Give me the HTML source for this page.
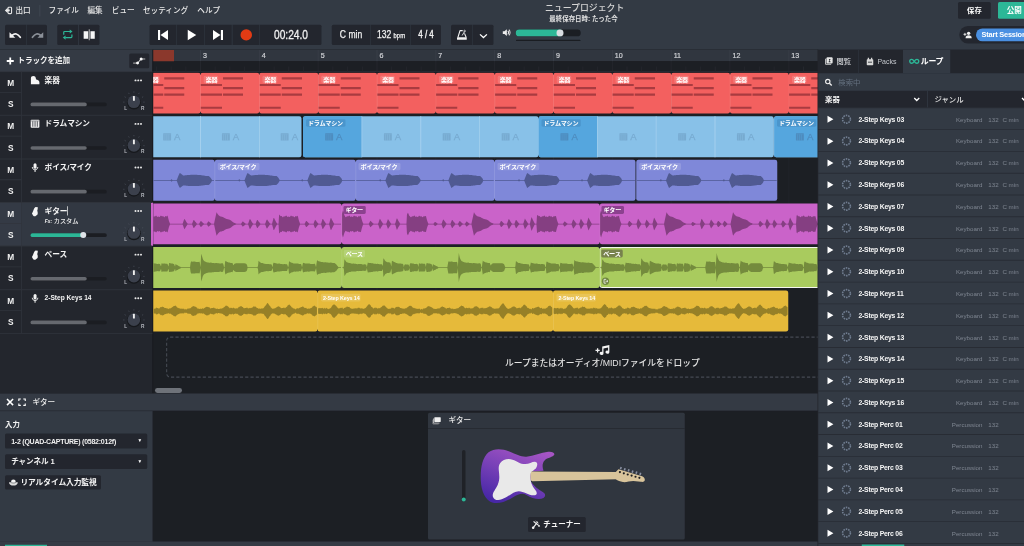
<!DOCTYPE html>
<html lang="ja"><head><meta charset="utf-8"><title>ニュープロジェクト</title>
<style>
html,body{margin:0;padding:0;}
body{width:1024px;height:546px;overflow:hidden;background:#1c1f24;position:relative;font-family:"Liberation Sans","Noto Sans CJK JP",sans-serif;color:#fff;}
#outer{position:absolute;left:0;top:0;width:4096px;height:2184px;overflow:hidden;transform:scale(0.25);transform-origin:0 0;}
#app{position:absolute;left:0;top:0;width:4096px;height:2184px;overflow:hidden;}
#app div,#txt div{position:absolute;box-sizing:border-box;}
#app svg{position:absolute;overflow:visible;}
#txt{position:absolute;left:0;top:0;width:1024px;height:546px;overflow:hidden;will-change:transform;}
#ttl{left:153.2px;top:72.4px;width:664.8px;height:320.6px;overflow:hidden;}
.t{height:20px;line-height:20px;white-space:nowrap;}
.b{font-weight:bold;}
</style></head>
<body><div id="outer"><div id="app">
<div style="left:0px;top:0px;width:4096px;height:198px;background:#333a44;"></div>
<svg style="left:18.8px;top:25.6px" width="30" height="31.2" viewBox="0 0 15 15.600"><rect x="6.600" y="1.400" width="7" height="12.800" rx="1.600" fill="none" stroke="#e4e4e4" stroke-width="2.200"/><path d="M0.200 7.800L5.800 2.600v3.400h4.200v3.600H5.800v3.400z" fill="#ececec"/></svg>
<div style="left:158px;top:20px;width:3.2px;height:46px;background:#434a55;"></div>
<div style="left:3832.4px;top:8px;width:130.4px;height:66.8px;background:#23262e;border-radius:6px;"></div>
<div style="left:3992px;top:8px;width:120px;height:66.8px;background:#2cb797;border-radius:6px;"></div>
<div style="left:3836.8px;top:104px;width:320px;height:70.4px;background:#23262e;border-radius:36px;"></div>
<div style="left:3904px;top:113.6px;width:280px;height:51.2px;background:#4a90e2;border-radius:25.6px;"></div>
<svg style="left:3853.6px;top:125.2px" width="32.8" height="28" viewBox="0 0 20 17"><circle cx="12.5" cy="5" r="4" fill="#f0f0f0"/><path d="M5 17c0-5 3-7 7.5-7s7.5 2 7.5 7z" fill="#f0f0f0"/><path d="M0 7.5h7M3.5 4v7" stroke="#f0f0f0" stroke-width="2.2"/></svg>
<div style="left:20px;top:99.2px;width:84px;height:80.8px;background:#23262e;border-radius:6px 0px 0px 6px;"></div>
<div style="left:106.4px;top:99.2px;width:81.6px;height:80.8px;background:#23262e;border-radius:0px 6px 6px 0px;"></div>
<div style="left:228.8px;top:99.2px;width:83.6px;height:80.8px;background:#23262e;border-radius:6px 0px 0px 6px;"></div>
<div style="left:315.2px;top:99.2px;width:82.8px;height:80.8px;background:#23262e;border-radius:0px 6px 6px 0px;"></div>
<div style="left:598px;top:99.2px;width:107.6px;height:80.8px;background:#23262e;border-radius:6px 0px 0px 6px;"></div>
<div style="left:708px;top:99.2px;width:108.8px;height:80.8px;background:#23262e;border-radius:0px 0px 0px 0px;"></div>
<div style="left:819.2px;top:99.2px;width:108px;height:80.8px;background:#23262e;border-radius:0px 0px 0px 0px;"></div>
<div style="left:929.6px;top:99.2px;width:108.4px;height:80.8px;background:#23262e;border-radius:0px 0px 0px 0px;"></div>
<div style="left:1040.4px;top:99.2px;width:245.6px;height:80.8px;background:#23262e;border-radius:0px 6px 6px 0px;"></div>
<div style="left:1327.2px;top:99.2px;width:152.8px;height:80.8px;background:#23262e;border-radius:6px 0px 0px 6px;"></div>
<div style="left:1482.4px;top:99.2px;width:158.4px;height:80.8px;background:#23262e;border-radius:0px 0px 0px 0px;"></div>
<div style="left:1643.2px;top:99.2px;width:120.8px;height:80.8px;background:#23262e;border-radius:0px 6px 6px 0px;"></div>
<div style="left:1804px;top:99.2px;width:85.6px;height:80.8px;background:#23262e;border-radius:6px 0px 0px 6px;"></div>
<div style="left:1892px;top:99.2px;width:82.4px;height:80.8px;background:#23262e;border-radius:0px 6px 6px 0px;"></div>
<svg style="left:38.4px;top:128.4px" width="46" height="24.8" viewBox="0 0 23 12.400"><path d="M0 0.400V11.600H11.600z" fill="#f2f2f2"/><path d="M5.500 6.500Q13.500 -0.500 21.600 10.600" fill="none" stroke="#f2f2f2" stroke-width="3.500" stroke-linecap="round"/></svg>
<svg style="left:127.2px;top:128.4px" width="46" height="24.8" viewBox="0 0 23 12.400"><g transform="translate(23,0) scale(-1,1)"><path d="M0 0.400V11.600H11.600z" fill="#8b9098"/><path d="M5.500 6.500Q13.500 -0.500 21.600 10.600" fill="none" stroke="#8b9098" stroke-width="3.500" stroke-linecap="round"/></g></svg>
<svg style="left:250.8px;top:118.4px" width="40" height="41" viewBox="0 0 20 20.500"><path d="M2 10.400V5.500Q2 4 3.500 4H14.500" fill="none" stroke="#2cb797" stroke-width="2.400"/><path d="M14 0v8.100L19.500 4z" fill="#2cb797"/><path d="M18.300 10.200v4.500q0 1.500-1.500 1.500H5" fill="none" stroke="#2cb797" stroke-width="2.400"/><path d="M5.600 12.200v8.100L0 16.200z" fill="#2cb797"/></svg>
<svg style="left:334.4px;top:116.8px" width="45.6" height="45.6" viewBox="0 0 23 23"><rect x="0.300" y="4" width="9.200" height="15.200" fill="#f6f6f6"/><rect x="14.100" y="4" width="8.600" height="15.200" fill="#f6f6f6"/><rect x="10.600" y="0.200" width="1.800" height="22" fill="#cfcfcf"/></svg>
<svg style="left:630.4px;top:117.6px" width="44" height="44" viewBox="0 0 22 22"><rect x="1" y="1" width="4.200" height="20" fill="#fff"/><path d="M21 1v20L6 11z" fill="#fff"/></svg>
<svg style="left:750px;top:117.6px" width="36" height="44" viewBox="0 0 18 22"><path d="M0.500 0.500v21L17.500 11z" fill="#fff"/></svg>
<svg style="left:850.4px;top:117.6px" width="44" height="44" viewBox="0 0 22 22"><rect x="16.800" y="1" width="4.200" height="20" fill="#fff"/><path d="M1 1v20l15-10z" fill="#fff"/></svg>
<div style="left:962px;top:116.8px;width:45.6px;height:45.6px;background:#e23b14;border-radius:50%;"></div>
<svg style="left:1828.4px;top:119.2px" width="40" height="42" viewBox="0 0 20 21"><path d="M1.800 15.500L6 1.800h5.400M15 7.200l3.400 8.300" fill="none" stroke="#f2f2f2" stroke-width="2.200" stroke-linejoin="round"/><path d="M10.300 11.500L15 3.600" stroke="#f2f2f2" stroke-width="1.800"/><circle cx="15.200" cy="2.600" r="1.700" fill="none" stroke="#f2f2f2" stroke-width="1.300"/><rect x="0" y="15" width="19.500" height="5" rx="1" fill="#f2f2f2"/></svg>
<svg style="left:1916.8px;top:133.6px" width="33.6" height="20.8" viewBox="0 0 17 10"><path d="M1.500 1.500l7 6.500 7-6.500" fill="none" stroke="#fff" stroke-width="2.600"/></svg>
<svg style="left:2009.6px;top:115.2px" width="32.8" height="30.4" viewBox="0 0 16 15"><path d="M0.500 4.800h3.300L8.500 0.800v13.400L3.800 10.200H0.500z" fill="#eee"/><path d="M10.300 4c1.800 1.800 1.800 5.200 0 7" stroke="#eee" stroke-width="2" fill="none"/><path d="M12.600 1.800c3 3 3 8.400 0 11.400" stroke="#ddd" stroke-width="2" fill="none"/></svg>
<div style="left:2062.8px;top:118px;width:260px;height:26.8px;background:#1b1e23;border-radius:13.6px;"></div>
<div style="left:2062.8px;top:118px;width:188px;height:26.8px;background:#2cb797;border-radius:13.6px;"></div>
<div style="left:2226.4px;top:117.6px;width:27.6px;height:27.6px;background:#d9dde2;border-radius:50%;"></div>
<div style="left:2064px;top:158.8px;width:258.4px;height:5.2px;background:#1a1d22;border-radius:2.4px;"></div>
<div style="left:0px;top:198px;width:610.4px;height:91.2px;background:#343a44;"></div>
<div style="left:0px;top:196.8px;width:4096px;height:3.2px;background:#2b3039;"></div>
<svg style="left:27.2px;top:229.6px" width="28" height="28" viewBox="0 0 13 13"><path d="M6.500 0v13M0 6.500h13" stroke="#fff" stroke-width="3.300"/></svg>
<div style="left:517.2px;top:213.6px;width:80px;height:59.6px;background:#23262e;border-radius:6px;"></div>
<svg style="left:531.2px;top:225.6px" width="52" height="35.2" viewBox="0 0 26 17.600"><path d="M0.800 13.200H9.600M16.800 5H25" fill="none" stroke="#c4c4c4" stroke-width="1.800"/><path d="M9.600 13.200L16.800 5" stroke="#f4f4f4" stroke-width="2"/><circle cx="9.600" cy="13.200" r="3" fill="#fafafa"/><circle cx="16.800" cy="5" r="3" fill="#fafafa"/></svg>
<div style="left:611.2px;top:199.6px;width:2661.6px;height:45.2px;background:#30363f;"></div>
<div style="left:611.2px;top:244.8px;width:2661.6px;height:44.8px;background:#1c1f24;"></div>
<div style="left:612px;top:200px;width:84px;height:44.8px;background:#8b382c;"></div>
<div style="left:800.4px;top:200px;width:3.2px;height:44.8px;background:#383e48;"></div>
<div style="left:1035.72px;top:200px;width:3.2px;height:44.8px;background:#383e48;"></div>
<div style="left:1271.04px;top:200px;width:3.2px;height:44.8px;background:#383e48;"></div>
<div style="left:1506.36px;top:200px;width:3.2px;height:44.8px;background:#383e48;"></div>
<div style="left:1741.68px;top:200px;width:3.2px;height:44.8px;background:#383e48;"></div>
<div style="left:1977px;top:200px;width:3.2px;height:44.8px;background:#383e48;"></div>
<div style="left:2212.32px;top:200px;width:3.2px;height:44.8px;background:#383e48;"></div>
<div style="left:2447.64px;top:200px;width:3.2px;height:44.8px;background:#383e48;"></div>
<div style="left:2682.96px;top:200px;width:3.2px;height:44.8px;background:#383e48;"></div>
<div style="left:2918.28px;top:200px;width:3.2px;height:44.8px;background:#383e48;"></div>
<div style="left:3153.6px;top:200px;width:3.2px;height:44.8px;background:#383e48;"></div>
<div style="left:611.2px;top:284.8px;width:2661.6px;height:3.6px;background:#292e38;"></div>
<div style="left:623.92px;top:266px;width:3.2px;height:23.6px;background:#24272d;"></div>
<div style="left:682.76px;top:266px;width:3.2px;height:23.6px;background:#24272d;"></div>
<div style="left:741.56px;top:266px;width:3.2px;height:23.6px;background:#24272d;"></div>
<div style="left:800.4px;top:244.8px;width:3.2px;height:44.8px;background:#24272d;"></div>
<div style="left:859.24px;top:266px;width:3.2px;height:23.6px;background:#24272d;"></div>
<div style="left:918.04px;top:266px;width:3.2px;height:23.6px;background:#24272d;"></div>
<div style="left:976.88px;top:266px;width:3.2px;height:23.6px;background:#24272d;"></div>
<div style="left:1035.72px;top:244.8px;width:3.2px;height:44.8px;background:#24272d;"></div>
<div style="left:1094.56px;top:266px;width:3.2px;height:23.6px;background:#24272d;"></div>
<div style="left:1153.4px;top:266px;width:3.2px;height:23.6px;background:#24272d;"></div>
<div style="left:1212.2px;top:266px;width:3.2px;height:23.6px;background:#24272d;"></div>
<div style="left:1271.04px;top:244.8px;width:3.2px;height:44.8px;background:#24272d;"></div>
<div style="left:1329.88px;top:266px;width:3.2px;height:23.6px;background:#24272d;"></div>
<div style="left:1388.72px;top:266px;width:3.2px;height:23.6px;background:#24272d;"></div>
<div style="left:1447.52px;top:266px;width:3.2px;height:23.6px;background:#24272d;"></div>
<div style="left:1506.36px;top:244.8px;width:3.2px;height:44.8px;background:#24272d;"></div>
<div style="left:1565.2px;top:266px;width:3.2px;height:23.6px;background:#24272d;"></div>
<div style="left:1624.04px;top:266px;width:3.2px;height:23.6px;background:#24272d;"></div>
<div style="left:1682.84px;top:266px;width:3.2px;height:23.6px;background:#24272d;"></div>
<div style="left:1741.68px;top:244.8px;width:3.2px;height:44.8px;background:#24272d;"></div>
<div style="left:1800.52px;top:266px;width:3.2px;height:23.6px;background:#24272d;"></div>
<div style="left:1859.36px;top:266px;width:3.2px;height:23.6px;background:#24272d;"></div>
<div style="left:1918.16px;top:266px;width:3.2px;height:23.6px;background:#24272d;"></div>
<div style="left:1977px;top:244.8px;width:3.2px;height:44.8px;background:#24272d;"></div>
<div style="left:2035.84px;top:266px;width:3.2px;height:23.6px;background:#24272d;"></div>
<div style="left:2094.64px;top:266px;width:3.2px;height:23.6px;background:#24272d;"></div>
<div style="left:2153.48px;top:266px;width:3.2px;height:23.6px;background:#24272d;"></div>
<div style="left:2212.32px;top:244.8px;width:3.2px;height:44.8px;background:#24272d;"></div>
<div style="left:2271.16px;top:266px;width:3.2px;height:23.6px;background:#24272d;"></div>
<div style="left:2330px;top:266px;width:3.2px;height:23.6px;background:#24272d;"></div>
<div style="left:2388.8px;top:266px;width:3.2px;height:23.6px;background:#24272d;"></div>
<div style="left:2447.64px;top:244.8px;width:3.2px;height:44.8px;background:#24272d;"></div>
<div style="left:2506.48px;top:266px;width:3.2px;height:23.6px;background:#24272d;"></div>
<div style="left:2565.28px;top:266px;width:3.2px;height:23.6px;background:#24272d;"></div>
<div style="left:2624.12px;top:266px;width:3.2px;height:23.6px;background:#24272d;"></div>
<div style="left:2682.96px;top:244.8px;width:3.2px;height:44.8px;background:#24272d;"></div>
<div style="left:2741.8px;top:266px;width:3.2px;height:23.6px;background:#24272d;"></div>
<div style="left:2800.6px;top:266px;width:3.2px;height:23.6px;background:#24272d;"></div>
<div style="left:2859.44px;top:266px;width:3.2px;height:23.6px;background:#24272d;"></div>
<div style="left:2918.28px;top:244.8px;width:3.2px;height:44.8px;background:#24272d;"></div>
<div style="left:2977.12px;top:266px;width:3.2px;height:23.6px;background:#24272d;"></div>
<div style="left:3035.96px;top:266px;width:3.2px;height:23.6px;background:#24272d;"></div>
<div style="left:3094.76px;top:266px;width:3.2px;height:23.6px;background:#24272d;"></div>
<div style="left:3153.6px;top:244.8px;width:3.2px;height:44.8px;background:#24272d;"></div>
<div style="left:3212.44px;top:266px;width:3.2px;height:23.6px;background:#24272d;"></div>
<div style="left:0px;top:289.2px;width:610.4px;height:1284px;background:#23262d;"></div>
<div style="left:610.4px;top:198px;width:2.4px;height:1376px;background:#16181c;"></div>
<div style="left:0px;top:285.2px;width:610.4px;height:4px;background:#2f333b;"></div>
<div style="left:85.2px;top:287.2px;width:3.2px;height:174.28px;background:#30343c;"></div>
<div style="left:0px;top:368.8px;width:85.6px;height:3.2px;background:#30343c;"></div>
<svg style="left:121.2px;top:302.8px" width="38.4" height="36" viewBox="0 0 19 18"><path d="M1.200 17V5C1.200 2 3.200 0.400 6 0.400c3 0 4.800 1.800 5 4.400.2 1.800 1 2.600 2.800 3.400 2.800 1.200 4.400 2.800 4.400 5.400V17z" fill="#f6f6f6"/></svg>
<div style="left:538.4px;top:317.6px;width:7.6px;height:7.6px;background:#e8e8e8;border-radius:50%;"></div>
<div style="left:549.2px;top:317.6px;width:7.6px;height:7.6px;background:#e8e8e8;border-radius:50%;"></div>
<div style="left:560px;top:317.6px;width:7.6px;height:7.6px;background:#e8e8e8;border-radius:50%;"></div>
<div style="left:122px;top:410.4px;width:304.8px;height:14.8px;background:#1b1d22;border-radius:7.4px;"></div>
<div style="left:122px;top:410.4px;width:224.8px;height:14.8px;background:#66696f;border-radius:7.4px;"></div>
<svg style="left:0;top:0" width="640" height="1600" viewBox="0 0 160 400"><path d="M124.50 102.10L123.20 102.10" stroke="#4a4f59" stroke-width="0.750"/><path d="M125.76 97.40L124.63 96.75" stroke="#4a4f59" stroke-width="0.750"/><path d="M129.20 93.96L128.55 92.83" stroke="#4a4f59" stroke-width="0.750"/><path d="M133.90 92.70L133.90 91.40" stroke="#4a4f59" stroke-width="0.750"/><path d="M138.60 93.96L139.25 92.83" stroke="#4a4f59" stroke-width="0.750"/><path d="M142.04 97.40L143.17 96.75" stroke="#4a4f59" stroke-width="0.750"/><path d="M143.30 102.10L144.60 102.10" stroke="#4a4f59" stroke-width="0.750"/><circle cx="133.9" cy="102.6" r="6.900" fill="#16181c"/><circle cx="133.9" cy="101.8" r="6.300" fill="#3b404c"/><rect x="132.95000000000002" y="95.90" width="1.900" height="4.800" rx="0.500" fill="#f0f0f0"/></svg>
<div style="left:0px;top:459.48px;width:610.4px;height:4px;background:#2f333b;"></div>
<div style="left:85.2px;top:461.48px;width:3.2px;height:174.28px;background:#30343c;"></div>
<div style="left:0px;top:543.08px;width:85.6px;height:3.2px;background:#30343c;"></div>
<svg style="left:121.2px;top:477.08px" width="38.4" height="36" viewBox="0 0 19 18"><rect x="0.800" y="1" width="17.400" height="16" rx="1.500" fill="#f0f0f0"/><path d="M5 4v11M9.500 4v11M14 4v11" stroke="#23262d" stroke-width="1.500"/><path d="M1 3.400h17" stroke="#23262d" stroke-width="0.800"/></svg>
<div style="left:538.4px;top:491.88px;width:7.6px;height:7.6px;background:#e8e8e8;border-radius:50%;"></div>
<div style="left:549.2px;top:491.88px;width:7.6px;height:7.6px;background:#e8e8e8;border-radius:50%;"></div>
<div style="left:560px;top:491.88px;width:7.6px;height:7.6px;background:#e8e8e8;border-radius:50%;"></div>
<div style="left:122px;top:584.68px;width:304.8px;height:14.8px;background:#1b1d22;border-radius:7.4px;"></div>
<div style="left:122px;top:584.68px;width:224.8px;height:14.8px;background:#66696f;border-radius:7.4px;"></div>
<svg style="left:0;top:0" width="640" height="1600" viewBox="0 0 160 400"><path d="M124.50 145.67L123.20 145.67" stroke="#4a4f59" stroke-width="0.750"/><path d="M125.76 140.97L124.63 140.32" stroke="#4a4f59" stroke-width="0.750"/><path d="M129.20 137.53L128.55 136.40" stroke="#4a4f59" stroke-width="0.750"/><path d="M133.90 136.27L133.90 134.97" stroke="#4a4f59" stroke-width="0.750"/><path d="M138.60 137.53L139.25 136.40" stroke="#4a4f59" stroke-width="0.750"/><path d="M142.04 140.97L143.17 140.32" stroke="#4a4f59" stroke-width="0.750"/><path d="M143.30 145.67L144.60 145.67" stroke="#4a4f59" stroke-width="0.750"/><circle cx="133.9" cy="146.17" r="6.900" fill="#16181c"/><circle cx="133.9" cy="145.36999999999998" r="6.300" fill="#3b404c"/><rect x="132.95000000000002" y="139.47" width="1.900" height="4.800" rx="0.500" fill="#f0f0f0"/></svg>
<div style="left:0px;top:633.76px;width:610.4px;height:4px;background:#2f333b;"></div>
<div style="left:85.2px;top:635.76px;width:3.2px;height:174.28px;background:#30343c;"></div>
<div style="left:0px;top:717.36px;width:85.6px;height:3.2px;background:#30343c;"></div>
<svg style="left:121.2px;top:651.36px" width="38.4" height="40" viewBox="0 0 19 20"><rect x="6.500" y="0.800" width="6" height="11" rx="3" fill="#f4f4f4"/><path d="M4 8.500c0 7.500 11 7.500 11 0" fill="none" stroke="#f4f4f4" stroke-width="1.800"/><path d="M9.500 14v4.500" stroke="#f4f4f4" stroke-width="2"/></svg>
<div style="left:538.4px;top:666.16px;width:7.6px;height:7.6px;background:#e8e8e8;border-radius:50%;"></div>
<div style="left:549.2px;top:666.16px;width:7.6px;height:7.6px;background:#e8e8e8;border-radius:50%;"></div>
<div style="left:560px;top:666.16px;width:7.6px;height:7.6px;background:#e8e8e8;border-radius:50%;"></div>
<div style="left:122px;top:758.96px;width:304.8px;height:14.8px;background:#1b1d22;border-radius:7.4px;"></div>
<div style="left:122px;top:758.96px;width:224.8px;height:14.8px;background:#66696f;border-radius:7.4px;"></div>
<svg style="left:0;top:0" width="640" height="1600" viewBox="0 0 160 400"><path d="M124.50 189.24L123.20 189.24" stroke="#4a4f59" stroke-width="0.750"/><path d="M125.76 184.54L124.63 183.89" stroke="#4a4f59" stroke-width="0.750"/><path d="M129.20 181.10L128.55 179.97" stroke="#4a4f59" stroke-width="0.750"/><path d="M133.90 179.84L133.90 178.54" stroke="#4a4f59" stroke-width="0.750"/><path d="M138.60 181.10L139.25 179.97" stroke="#4a4f59" stroke-width="0.750"/><path d="M142.04 184.54L143.17 183.89" stroke="#4a4f59" stroke-width="0.750"/><path d="M143.30 189.24L144.60 189.24" stroke="#4a4f59" stroke-width="0.750"/><circle cx="133.9" cy="189.74" r="6.900" fill="#16181c"/><circle cx="133.9" cy="188.94" r="6.300" fill="#3b404c"/><rect x="132.95000000000002" y="183.04" width="1.900" height="4.800" rx="0.500" fill="#f0f0f0"/></svg>
<div style="left:0px;top:809.64px;width:610.4px;height:174.28px;background:#323842;"></div>
<div style="left:0px;top:809.64px;width:85.6px;height:174.28px;background:#343a45;"></div>
<div style="left:604.4px;top:809.64px;width:8.8px;height:174.28px;background:#ca63c9;"></div>
<div style="left:0px;top:808.04px;width:610.4px;height:4px;background:#2f333b;"></div>
<div style="left:85.2px;top:810.04px;width:3.2px;height:174.28px;background:#30343c;"></div>
<div style="left:0px;top:891.64px;width:85.6px;height:3.2px;background:#30343c;"></div>
<svg style="left:121.2px;top:825.64px" width="38.4" height="40" viewBox="0 0 19 20"><path d="M10.500 0.800l4.600.6-.6 5.200c-.8.800-.8 1.800-.2 2.800.8 2 .8 4.600.2 6.800l-4.400 3.400c-1.800.4-3.400-.4-4.600-1.800l-2.200-3.800c1-1.400 1.800-3 2.400-5 .6-2.200 1.600-4.400 2.600-6.200z" fill="#f6f6f6"/></svg>
<div style="left:538.4px;top:840.44px;width:7.6px;height:7.6px;background:#e8e8e8;border-radius:50%;"></div>
<div style="left:549.2px;top:840.44px;width:7.6px;height:7.6px;background:#e8e8e8;border-radius:50%;"></div>
<div style="left:560px;top:840.44px;width:7.6px;height:7.6px;background:#e8e8e8;border-radius:50%;"></div>
<div style="left:122px;top:933.24px;width:304.8px;height:14.8px;background:#1b1d22;border-radius:7.4px;"></div>
<div style="left:122px;top:933.24px;width:212px;height:14.8px;background:#2cb797;border-radius:7.4px;"></div>
<div style="left:320.8px;top:928.44px;width:24px;height:24px;background:#dfe3e8;border-radius:50%;"></div>
<svg style="left:0;top:0" width="640" height="1600" viewBox="0 0 160 400"><path d="M124.50 232.81L123.20 232.81" stroke="#4a4f59" stroke-width="0.750"/><path d="M125.76 228.11L124.63 227.46" stroke="#4a4f59" stroke-width="0.750"/><path d="M129.20 224.67L128.55 223.54" stroke="#4a4f59" stroke-width="0.750"/><path d="M133.90 223.41L133.90 222.11" stroke="#4a4f59" stroke-width="0.750"/><path d="M138.60 224.67L139.25 223.54" stroke="#4a4f59" stroke-width="0.750"/><path d="M142.04 228.11L143.17 227.46" stroke="#4a4f59" stroke-width="0.750"/><path d="M143.30 232.81L144.60 232.81" stroke="#4a4f59" stroke-width="0.750"/><circle cx="133.9" cy="233.31" r="6.900" fill="#16181c"/><circle cx="133.9" cy="232.51" r="6.300" fill="#3b404c"/><rect x="132.95000000000002" y="226.61" width="1.900" height="4.800" rx="0.500" fill="#f0f0f0"/></svg>
<div style="left:0px;top:982.32px;width:610.4px;height:4px;background:#2f333b;"></div>
<div style="left:85.2px;top:984.32px;width:3.2px;height:174.28px;background:#30343c;"></div>
<div style="left:0px;top:1065.92px;width:85.6px;height:3.2px;background:#30343c;"></div>
<svg style="left:121.2px;top:999.92px" width="38.4" height="40" viewBox="0 0 19 20"><path d="M10.500 0.800l4.600.6-.6 5.200c-.8.800-.8 1.800-.2 2.800.8 2 .8 4.600.2 6.800l-4.400 3.400c-1.800.4-3.400-.4-4.600-1.800l-2.200-3.800c1-1.400 1.800-3 2.400-5 .6-2.200 1.600-4.400 2.600-6.200z" fill="#f6f6f6"/></svg>
<div style="left:538.4px;top:1014.72px;width:7.6px;height:7.6px;background:#e8e8e8;border-radius:50%;"></div>
<div style="left:549.2px;top:1014.72px;width:7.6px;height:7.6px;background:#e8e8e8;border-radius:50%;"></div>
<div style="left:560px;top:1014.72px;width:7.6px;height:7.6px;background:#e8e8e8;border-radius:50%;"></div>
<div style="left:122px;top:1107.52px;width:304.8px;height:14.8px;background:#1b1d22;border-radius:7.4px;"></div>
<div style="left:122px;top:1107.52px;width:224.8px;height:14.8px;background:#66696f;border-radius:7.4px;"></div>
<svg style="left:0;top:0" width="640" height="1600" viewBox="0 0 160 400"><path d="M124.50 276.38L123.20 276.38" stroke="#4a4f59" stroke-width="0.750"/><path d="M125.76 271.68L124.63 271.03" stroke="#4a4f59" stroke-width="0.750"/><path d="M129.20 268.24L128.55 267.11" stroke="#4a4f59" stroke-width="0.750"/><path d="M133.90 266.98L133.90 265.68" stroke="#4a4f59" stroke-width="0.750"/><path d="M138.60 268.24L139.25 267.11" stroke="#4a4f59" stroke-width="0.750"/><path d="M142.04 271.68L143.17 271.03" stroke="#4a4f59" stroke-width="0.750"/><path d="M143.30 276.38L144.60 276.38" stroke="#4a4f59" stroke-width="0.750"/><circle cx="133.9" cy="276.88" r="6.900" fill="#16181c"/><circle cx="133.9" cy="276.08" r="6.300" fill="#3b404c"/><rect x="132.95000000000002" y="270.18" width="1.900" height="4.800" rx="0.500" fill="#f0f0f0"/></svg>
<div style="left:0px;top:1156.6px;width:610.4px;height:4px;background:#2f333b;"></div>
<div style="left:85.2px;top:1158.6px;width:3.2px;height:174.28px;background:#30343c;"></div>
<div style="left:0px;top:1240.2px;width:85.6px;height:3.2px;background:#30343c;"></div>
<svg style="left:121.2px;top:1174.2px" width="38.4" height="40" viewBox="0 0 19 20"><rect x="6.500" y="0.800" width="6" height="11" rx="3" fill="#f4f4f4"/><path d="M4 8.500c0 7.500 11 7.500 11 0" fill="none" stroke="#f4f4f4" stroke-width="1.800"/><path d="M9.500 14v4.500" stroke="#f4f4f4" stroke-width="2"/></svg>
<div style="left:538.4px;top:1189px;width:7.6px;height:7.6px;background:#e8e8e8;border-radius:50%;"></div>
<div style="left:549.2px;top:1189px;width:7.6px;height:7.6px;background:#e8e8e8;border-radius:50%;"></div>
<div style="left:560px;top:1189px;width:7.6px;height:7.6px;background:#e8e8e8;border-radius:50%;"></div>
<div style="left:122px;top:1281.8px;width:304.8px;height:14.8px;background:#1b1d22;border-radius:7.4px;"></div>
<div style="left:122px;top:1281.8px;width:224.8px;height:14.8px;background:#66696f;border-radius:7.4px;"></div>
<svg style="left:0;top:0" width="640" height="1600" viewBox="0 0 160 400"><path d="M124.50 319.95L123.20 319.95" stroke="#4a4f59" stroke-width="0.750"/><path d="M125.76 315.25L124.63 314.60" stroke="#4a4f59" stroke-width="0.750"/><path d="M129.20 311.81L128.55 310.68" stroke="#4a4f59" stroke-width="0.750"/><path d="M133.90 310.55L133.90 309.25" stroke="#4a4f59" stroke-width="0.750"/><path d="M138.60 311.81L139.25 310.68" stroke="#4a4f59" stroke-width="0.750"/><path d="M142.04 315.25L143.17 314.60" stroke="#4a4f59" stroke-width="0.750"/><path d="M143.30 319.95L144.60 319.95" stroke="#4a4f59" stroke-width="0.750"/><circle cx="133.9" cy="320.45" r="6.900" fill="#16181c"/><circle cx="133.9" cy="319.65" r="6.300" fill="#3b404c"/><rect x="132.95000000000002" y="313.75" width="1.900" height="4.800" rx="0.500" fill="#f0f0f0"/></svg>
<div style="left:0px;top:1332.08px;width:610.4px;height:3.2px;background:#30343c;"></div>
<div style="left:268.8px;top:825.24px;width:2.8px;height:36.8px;background:#e8e8e8;"></div>
<div style="left:612.8px;top:289.6px;width:2659.2px;height:1282.4px;overflow:hidden;background:#1c1f24;" id="tl">
<div style="left:-47.72px;top:0px;width:3.2px;height:1046px;background:#21242a;"></div>
<div style="left:187.6px;top:0px;width:3.2px;height:1046px;background:#21242a;"></div>
<div style="left:422.92px;top:0px;width:3.2px;height:1046px;background:#21242a;"></div>
<div style="left:658.24px;top:0px;width:3.2px;height:1046px;background:#21242a;"></div>
<div style="left:893.56px;top:0px;width:3.2px;height:1046px;background:#21242a;"></div>
<div style="left:1128.88px;top:0px;width:3.2px;height:1046px;background:#21242a;"></div>
<div style="left:1364.2px;top:0px;width:3.2px;height:1046px;background:#21242a;"></div>
<div style="left:1599.52px;top:0px;width:3.2px;height:1046px;background:#21242a;"></div>
<div style="left:1834.84px;top:0px;width:3.2px;height:1046px;background:#21242a;"></div>
<div style="left:2070.16px;top:0px;width:3.2px;height:1046px;background:#21242a;"></div>
<div style="left:2305.48px;top:0px;width:3.2px;height:1046px;background:#21242a;"></div>
<div style="left:2540.8px;top:0px;width:3.2px;height:1046px;background:#21242a;"></div>
<div style="left:2776.12px;top:0px;width:3.2px;height:1046px;background:#21242a;"></div>
<div style="left:-46.12px;top:1.2px;width:235.32px;height:163.6px;background:#f3605f;border-radius:8.8px;"></div>
<div style="left:43.88px;top:19.6px;width:80.4px;height:8.4px;background:#a93b40;"></div>
<div style="left:-44.92px;top:46px;width:84.8px;height:8.4px;background:#a93b40;"></div>
<div style="left:43.88px;top:58.8px;width:80.4px;height:8.4px;background:#a93b40;"></div>
<div style="left:-44.92px;top:84.8px;width:84.8px;height:8.4px;background:#a93b40;"></div>
<div style="left:43.88px;top:84.8px;width:80.4px;height:8.4px;background:#a93b40;"></div>
<div style="left:-44.92px;top:137.2px;width:84.8px;height:8.4px;background:#a93b40;"></div>
<div style="left:-33.32px;top:13.6px;width:58.4px;height:29.6px;background:rgba(255,255,255,0.15);border-radius:5.6px;"></div>
<div style="left:189.2px;top:1.2px;width:235.32px;height:163.6px;background:#f3605f;border-radius:8.8px;"></div>
<div style="left:186.4px;top:10.8px;width:5.6px;height:144.4px;background:#f3605f;"></div>
<div style="left:279.2px;top:19.6px;width:80.4px;height:8.4px;background:#a93b40;"></div>
<div style="left:190.4px;top:46px;width:84.8px;height:8.4px;background:#a93b40;"></div>
<div style="left:279.2px;top:58.8px;width:80.4px;height:8.4px;background:#a93b40;"></div>
<div style="left:190.4px;top:84.8px;width:84.8px;height:8.4px;background:#a93b40;"></div>
<div style="left:279.2px;top:84.8px;width:80.4px;height:8.4px;background:#a93b40;"></div>
<div style="left:190.4px;top:137.2px;width:84.8px;height:8.4px;background:#a93b40;"></div>
<div style="left:202px;top:13.6px;width:58.4px;height:29.6px;background:rgba(255,255,255,0.15);border-radius:5.6px;"></div>
<div style="left:424.52px;top:1.2px;width:235.32px;height:163.6px;background:#f3605f;border-radius:8.8px;"></div>
<div style="left:421.72px;top:10.8px;width:5.6px;height:144.4px;background:#f3605f;"></div>
<div style="left:514.52px;top:19.6px;width:80.4px;height:8.4px;background:#a93b40;"></div>
<div style="left:425.72px;top:46px;width:84.8px;height:8.4px;background:#a93b40;"></div>
<div style="left:514.52px;top:58.8px;width:80.4px;height:8.4px;background:#a93b40;"></div>
<div style="left:425.72px;top:84.8px;width:84.8px;height:8.4px;background:#a93b40;"></div>
<div style="left:514.52px;top:84.8px;width:80.4px;height:8.4px;background:#a93b40;"></div>
<div style="left:425.72px;top:137.2px;width:84.8px;height:8.4px;background:#a93b40;"></div>
<div style="left:437.32px;top:13.6px;width:58.4px;height:29.6px;background:rgba(255,255,255,0.15);border-radius:5.6px;"></div>
<div style="left:659.84px;top:1.2px;width:235.32px;height:163.6px;background:#f3605f;border-radius:8.8px;"></div>
<div style="left:657.04px;top:10.8px;width:5.6px;height:144.4px;background:#f3605f;"></div>
<div style="left:749.84px;top:19.6px;width:80.4px;height:8.4px;background:#a93b40;"></div>
<div style="left:661.04px;top:46px;width:84.8px;height:8.4px;background:#a93b40;"></div>
<div style="left:749.84px;top:58.8px;width:80.4px;height:8.4px;background:#a93b40;"></div>
<div style="left:661.04px;top:84.8px;width:84.8px;height:8.4px;background:#a93b40;"></div>
<div style="left:749.84px;top:84.8px;width:80.4px;height:8.4px;background:#a93b40;"></div>
<div style="left:661.04px;top:137.2px;width:84.8px;height:8.4px;background:#a93b40;"></div>
<div style="left:672.64px;top:13.6px;width:58.4px;height:29.6px;background:rgba(255,255,255,0.15);border-radius:5.6px;"></div>
<div style="left:895.16px;top:1.2px;width:235.32px;height:163.6px;background:#f3605f;border-radius:8.8px;"></div>
<div style="left:892.36px;top:10.8px;width:5.6px;height:144.4px;background:#f3605f;"></div>
<div style="left:985.16px;top:19.6px;width:80.4px;height:8.4px;background:#a93b40;"></div>
<div style="left:896.36px;top:46px;width:84.8px;height:8.4px;background:#a93b40;"></div>
<div style="left:985.16px;top:58.8px;width:80.4px;height:8.4px;background:#a93b40;"></div>
<div style="left:896.36px;top:84.8px;width:84.8px;height:8.4px;background:#a93b40;"></div>
<div style="left:985.16px;top:84.8px;width:80.4px;height:8.4px;background:#a93b40;"></div>
<div style="left:896.36px;top:137.2px;width:84.8px;height:8.4px;background:#a93b40;"></div>
<div style="left:907.96px;top:13.6px;width:58.4px;height:29.6px;background:rgba(255,255,255,0.15);border-radius:5.6px;"></div>
<div style="left:1130.48px;top:1.2px;width:235.32px;height:163.6px;background:#f3605f;border-radius:8.8px;"></div>
<div style="left:1127.68px;top:10.8px;width:5.6px;height:144.4px;background:#f3605f;"></div>
<div style="left:1220.48px;top:19.6px;width:80.4px;height:8.4px;background:#a93b40;"></div>
<div style="left:1131.68px;top:46px;width:84.8px;height:8.4px;background:#a93b40;"></div>
<div style="left:1220.48px;top:58.8px;width:80.4px;height:8.4px;background:#a93b40;"></div>
<div style="left:1131.68px;top:84.8px;width:84.8px;height:8.4px;background:#a93b40;"></div>
<div style="left:1220.48px;top:84.8px;width:80.4px;height:8.4px;background:#a93b40;"></div>
<div style="left:1131.68px;top:137.2px;width:84.8px;height:8.4px;background:#a93b40;"></div>
<div style="left:1143.28px;top:13.6px;width:58.4px;height:29.6px;background:rgba(255,255,255,0.15);border-radius:5.6px;"></div>
<div style="left:1365.8px;top:1.2px;width:235.32px;height:163.6px;background:#f3605f;border-radius:8.8px;"></div>
<div style="left:1363px;top:10.8px;width:5.6px;height:144.4px;background:#f3605f;"></div>
<div style="left:1455.8px;top:19.6px;width:80.4px;height:8.4px;background:#a93b40;"></div>
<div style="left:1367px;top:46px;width:84.8px;height:8.4px;background:#a93b40;"></div>
<div style="left:1455.8px;top:58.8px;width:80.4px;height:8.4px;background:#a93b40;"></div>
<div style="left:1367px;top:84.8px;width:84.8px;height:8.4px;background:#a93b40;"></div>
<div style="left:1455.8px;top:84.8px;width:80.4px;height:8.4px;background:#a93b40;"></div>
<div style="left:1367px;top:137.2px;width:84.8px;height:8.4px;background:#a93b40;"></div>
<div style="left:1378.6px;top:13.6px;width:58.4px;height:29.6px;background:rgba(255,255,255,0.15);border-radius:5.6px;"></div>
<div style="left:1601.12px;top:1.2px;width:235.32px;height:163.6px;background:#f3605f;border-radius:8.8px;"></div>
<div style="left:1598.32px;top:10.8px;width:5.6px;height:144.4px;background:#f3605f;"></div>
<div style="left:1691.12px;top:19.6px;width:80.4px;height:8.4px;background:#a93b40;"></div>
<div style="left:1602.32px;top:46px;width:84.8px;height:8.4px;background:#a93b40;"></div>
<div style="left:1691.12px;top:58.8px;width:80.4px;height:8.4px;background:#a93b40;"></div>
<div style="left:1602.32px;top:84.8px;width:84.8px;height:8.4px;background:#a93b40;"></div>
<div style="left:1691.12px;top:84.8px;width:80.4px;height:8.4px;background:#a93b40;"></div>
<div style="left:1602.32px;top:137.2px;width:84.8px;height:8.4px;background:#a93b40;"></div>
<div style="left:1613.92px;top:13.6px;width:58.4px;height:29.6px;background:rgba(255,255,255,0.15);border-radius:5.6px;"></div>
<div style="left:1836.44px;top:1.2px;width:235.32px;height:163.6px;background:#f3605f;border-radius:8.8px;"></div>
<div style="left:1833.64px;top:10.8px;width:5.6px;height:144.4px;background:#f3605f;"></div>
<div style="left:1926.44px;top:19.6px;width:80.4px;height:8.4px;background:#a93b40;"></div>
<div style="left:1837.64px;top:46px;width:84.8px;height:8.4px;background:#a93b40;"></div>
<div style="left:1926.44px;top:58.8px;width:80.4px;height:8.4px;background:#a93b40;"></div>
<div style="left:1837.64px;top:84.8px;width:84.8px;height:8.4px;background:#a93b40;"></div>
<div style="left:1926.44px;top:84.8px;width:80.4px;height:8.4px;background:#a93b40;"></div>
<div style="left:1837.64px;top:137.2px;width:84.8px;height:8.4px;background:#a93b40;"></div>
<div style="left:1849.24px;top:13.6px;width:58.4px;height:29.6px;background:rgba(255,255,255,0.15);border-radius:5.6px;"></div>
<div style="left:2071.76px;top:1.2px;width:235.32px;height:163.6px;background:#f3605f;border-radius:8.8px;"></div>
<div style="left:2068.96px;top:10.8px;width:5.6px;height:144.4px;background:#f3605f;"></div>
<div style="left:2161.76px;top:19.6px;width:80.4px;height:8.4px;background:#a93b40;"></div>
<div style="left:2072.96px;top:46px;width:84.8px;height:8.4px;background:#a93b40;"></div>
<div style="left:2161.76px;top:58.8px;width:80.4px;height:8.4px;background:#a93b40;"></div>
<div style="left:2072.96px;top:84.8px;width:84.8px;height:8.4px;background:#a93b40;"></div>
<div style="left:2161.76px;top:84.8px;width:80.4px;height:8.4px;background:#a93b40;"></div>
<div style="left:2072.96px;top:137.2px;width:84.8px;height:8.4px;background:#a93b40;"></div>
<div style="left:2084.56px;top:13.6px;width:58.4px;height:29.6px;background:rgba(255,255,255,0.15);border-radius:5.6px;"></div>
<div style="left:2307.08px;top:1.2px;width:235.32px;height:163.6px;background:#f3605f;border-radius:8.8px;"></div>
<div style="left:2304.28px;top:10.8px;width:5.6px;height:144.4px;background:#f3605f;"></div>
<div style="left:2397.08px;top:19.6px;width:80.4px;height:8.4px;background:#a93b40;"></div>
<div style="left:2308.28px;top:46px;width:84.8px;height:8.4px;background:#a93b40;"></div>
<div style="left:2397.08px;top:58.8px;width:80.4px;height:8.4px;background:#a93b40;"></div>
<div style="left:2308.28px;top:84.8px;width:84.8px;height:8.4px;background:#a93b40;"></div>
<div style="left:2397.08px;top:84.8px;width:80.4px;height:8.4px;background:#a93b40;"></div>
<div style="left:2308.28px;top:137.2px;width:84.8px;height:8.4px;background:#a93b40;"></div>
<div style="left:2319.88px;top:13.6px;width:58.4px;height:29.6px;background:rgba(255,255,255,0.15);border-radius:5.6px;"></div>
<div style="left:2542.4px;top:1.2px;width:235.32px;height:163.6px;background:#f3605f;border-radius:8.8px;"></div>
<div style="left:2539.6px;top:10.8px;width:5.6px;height:144.4px;background:#f3605f;"></div>
<div style="left:2632.4px;top:19.6px;width:80.4px;height:8.4px;background:#a93b40;"></div>
<div style="left:2543.6px;top:46px;width:84.8px;height:8.4px;background:#a93b40;"></div>
<div style="left:2632.4px;top:58.8px;width:80.4px;height:8.4px;background:#a93b40;"></div>
<div style="left:2543.6px;top:84.8px;width:84.8px;height:8.4px;background:#a93b40;"></div>
<div style="left:2632.4px;top:84.8px;width:80.4px;height:8.4px;background:#a93b40;"></div>
<div style="left:2543.6px;top:137.2px;width:84.8px;height:8.4px;background:#a93b40;"></div>
<div style="left:2555.2px;top:13.6px;width:58.4px;height:29.6px;background:rgba(255,255,255,0.15);border-radius:5.6px;"></div>
<div style="left:-132.8px;top:175.48px;width:725.6px;height:163.6px;background:#88c1e8;border-radius:8.8px;"></div>
<div style="left:187.6px;top:175.48px;width:3.2px;height:163.6px;background:#a4d0ee;"></div>
<div style="left:422.92px;top:175.48px;width:3.2px;height:163.6px;background:#a4d0ee;"></div>
<svg style="left:38.76px;top:242.28px" width="33.2" height="30.8" viewBox="0 0 16 15"><rect x="0.300" y="0.300" width="15.400" height="14.400" rx="1" fill="#77aad0"/><path d="M3.600 2.600v12M7.400 2.600v12M11.200 2.600v12" stroke="#88c1e8" stroke-width="0.900" opacity="0.800"/><path d="M0.500 2.300h15" stroke="#88c1e8" stroke-width="0.600" opacity="0.700"/></svg>
<svg style="left:274.04px;top:242.28px" width="33.2" height="30.8" viewBox="0 0 16 15"><rect x="0.300" y="0.300" width="15.400" height="14.400" rx="1" fill="#77aad0"/><path d="M3.600 2.600v12M7.400 2.600v12M11.200 2.600v12" stroke="#88c1e8" stroke-width="0.900" opacity="0.800"/><path d="M0.500 2.300h15" stroke="#88c1e8" stroke-width="0.600" opacity="0.700"/></svg>
<svg style="left:509.4px;top:242.28px" width="33.2" height="30.8" viewBox="0 0 16 15"><rect x="0.300" y="0.300" width="15.400" height="14.400" rx="1" fill="#77aad0"/><path d="M3.600 2.600v12M7.400 2.600v12M11.200 2.600v12" stroke="#88c1e8" stroke-width="0.900" opacity="0.800"/><path d="M0.500 2.300h15" stroke="#88c1e8" stroke-width="0.600" opacity="0.700"/></svg>
<div style="left:599.6px;top:175.48px;width:941.28px;height:163.6px;background:#88c1e8;border-radius:8.8px;"></div>
<div style="left:599.6px;top:175.48px;width:235.32px;height:163.6px;background:#55a6de;border-radius:8.8px 0 0 8.8px;"></div>
<div style="left:833.32px;top:175.48px;width:3.2px;height:163.6px;background:#a4d0ee;"></div>
<div style="left:1068.64px;top:175.48px;width:3.2px;height:163.6px;background:#a4d0ee;"></div>
<div style="left:1303.96px;top:175.48px;width:3.2px;height:163.6px;background:#a4d0ee;"></div>
<svg style="left:686.88px;top:242.28px" width="33.2" height="30.8" viewBox="0 0 16 15"><rect x="0.300" y="0.300" width="15.400" height="14.400" rx="1" fill="#4e8cbe"/><path d="M3.600 2.600v12M7.400 2.600v12M11.200 2.600v12" stroke="#55a6de" stroke-width="0.900" opacity="0.800"/><path d="M0.500 2.300h15" stroke="#55a6de" stroke-width="0.600" opacity="0.700"/></svg>
<svg style="left:922.2px;top:242.28px" width="33.2" height="30.8" viewBox="0 0 16 15"><rect x="0.300" y="0.300" width="15.400" height="14.400" rx="1" fill="#77aad0"/><path d="M3.600 2.600v12M7.400 2.600v12M11.200 2.600v12" stroke="#88c1e8" stroke-width="0.900" opacity="0.800"/><path d="M0.500 2.300h15" stroke="#88c1e8" stroke-width="0.600" opacity="0.700"/></svg>
<svg style="left:1157.52px;top:242.28px" width="33.2" height="30.8" viewBox="0 0 16 15"><rect x="0.300" y="0.300" width="15.400" height="14.400" rx="1" fill="#77aad0"/><path d="M3.600 2.600v12M7.400 2.600v12M11.200 2.600v12" stroke="#88c1e8" stroke-width="0.900" opacity="0.800"/><path d="M0.500 2.300h15" stroke="#88c1e8" stroke-width="0.600" opacity="0.700"/></svg>
<svg style="left:1392.8px;top:242.28px" width="33.2" height="30.8" viewBox="0 0 16 15"><rect x="0.300" y="0.300" width="15.400" height="14.400" rx="1" fill="#77aad0"/><path d="M3.600 2.600v12M7.400 2.600v12M11.200 2.600v12" stroke="#88c1e8" stroke-width="0.900" opacity="0.800"/><path d="M0.500 2.300h15" stroke="#88c1e8" stroke-width="0.600" opacity="0.700"/></svg>
<div style="left:611.2px;top:187.88px;width:157.6px;height:29.6px;background:rgba(20,60,110,0.16);border-radius:5.6px;"></div>
<div style="left:1541.2px;top:175.48px;width:941.28px;height:163.6px;background:#88c1e8;border-radius:8.8px;"></div>
<div style="left:1538.4px;top:185.08px;width:5.6px;height:144.4px;background:#88c1e8;"></div>
<div style="left:1541.2px;top:175.48px;width:235.32px;height:163.6px;background:#55a6de;border-radius:8.8px 0 0 8.8px;"></div>
<div style="left:1774.92px;top:175.48px;width:3.2px;height:163.6px;background:#a4d0ee;"></div>
<div style="left:2010.24px;top:175.48px;width:3.2px;height:163.6px;background:#a4d0ee;"></div>
<div style="left:2245.56px;top:175.48px;width:3.2px;height:163.6px;background:#a4d0ee;"></div>
<svg style="left:1628.48px;top:242.28px" width="33.2" height="30.8" viewBox="0 0 16 15"><rect x="0.300" y="0.300" width="15.400" height="14.400" rx="1" fill="#4e8cbe"/><path d="M3.600 2.600v12M7.400 2.600v12M11.200 2.600v12" stroke="#55a6de" stroke-width="0.900" opacity="0.800"/><path d="M0.500 2.300h15" stroke="#55a6de" stroke-width="0.600" opacity="0.700"/></svg>
<svg style="left:1863.8px;top:242.28px" width="33.2" height="30.8" viewBox="0 0 16 15"><rect x="0.300" y="0.300" width="15.400" height="14.400" rx="1" fill="#77aad0"/><path d="M3.600 2.600v12M7.400 2.600v12M11.200 2.600v12" stroke="#88c1e8" stroke-width="0.900" opacity="0.800"/><path d="M0.500 2.300h15" stroke="#88c1e8" stroke-width="0.600" opacity="0.700"/></svg>
<svg style="left:2099.12px;top:242.28px" width="33.2" height="30.8" viewBox="0 0 16 15"><rect x="0.300" y="0.300" width="15.400" height="14.400" rx="1" fill="#77aad0"/><path d="M3.600 2.600v12M7.400 2.600v12M11.200 2.600v12" stroke="#88c1e8" stroke-width="0.900" opacity="0.800"/><path d="M0.500 2.300h15" stroke="#88c1e8" stroke-width="0.600" opacity="0.700"/></svg>
<svg style="left:2334.44px;top:242.28px" width="33.2" height="30.8" viewBox="0 0 16 15"><rect x="0.300" y="0.300" width="15.400" height="14.400" rx="1" fill="#77aad0"/><path d="M3.600 2.600v12M7.400 2.600v12M11.200 2.600v12" stroke="#88c1e8" stroke-width="0.900" opacity="0.800"/><path d="M0.500 2.300h15" stroke="#88c1e8" stroke-width="0.600" opacity="0.700"/></svg>
<div style="left:1552.8px;top:187.88px;width:157.6px;height:29.6px;background:rgba(20,60,110,0.16);border-radius:5.6px;"></div>
<div style="left:2483.2px;top:175.48px;width:941.28px;height:163.6px;background:#88c1e8;border-radius:8.8px;"></div>
<div style="left:2480.4px;top:185.08px;width:5.6px;height:144.4px;background:#88c1e8;"></div>
<div style="left:2483.2px;top:175.48px;width:235.32px;height:163.6px;background:#55a6de;border-radius:8.8px 0 0 8.8px;"></div>
<div style="left:2716.92px;top:175.48px;width:3.2px;height:163.6px;background:#a4d0ee;"></div>
<div style="left:2952.24px;top:175.48px;width:3.2px;height:163.6px;background:#a4d0ee;"></div>
<div style="left:3187.56px;top:175.48px;width:3.2px;height:163.6px;background:#a4d0ee;"></div>
<svg style="left:2570.48px;top:242.28px" width="33.2" height="30.8" viewBox="0 0 16 15"><rect x="0.300" y="0.300" width="15.400" height="14.400" rx="1" fill="#4e8cbe"/><path d="M3.600 2.600v12M7.400 2.600v12M11.200 2.600v12" stroke="#55a6de" stroke-width="0.900" opacity="0.800"/><path d="M0.500 2.300h15" stroke="#55a6de" stroke-width="0.600" opacity="0.700"/></svg>
<svg style="left:2805.8px;top:242.28px" width="33.2" height="30.8" viewBox="0 0 16 15"><rect x="0.300" y="0.300" width="15.400" height="14.400" rx="1" fill="#77aad0"/><path d="M3.600 2.600v12M7.400 2.600v12M11.200 2.600v12" stroke="#88c1e8" stroke-width="0.900" opacity="0.800"/><path d="M0.500 2.300h15" stroke="#88c1e8" stroke-width="0.600" opacity="0.700"/></svg>
<svg style="left:3041.12px;top:242.28px" width="33.2" height="30.8" viewBox="0 0 16 15"><rect x="0.300" y="0.300" width="15.400" height="14.400" rx="1" fill="#77aad0"/><path d="M3.600 2.600v12M7.400 2.600v12M11.200 2.600v12" stroke="#88c1e8" stroke-width="0.900" opacity="0.800"/><path d="M0.500 2.300h15" stroke="#88c1e8" stroke-width="0.600" opacity="0.700"/></svg>
<svg style="left:3276.44px;top:242.28px" width="33.2" height="30.8" viewBox="0 0 16 15"><rect x="0.300" y="0.300" width="15.400" height="14.400" rx="1" fill="#77aad0"/><path d="M3.600 2.600v12M7.400 2.600v12M11.200 2.600v12" stroke="#88c1e8" stroke-width="0.900" opacity="0.800"/><path d="M0.500 2.300h15" stroke="#88c1e8" stroke-width="0.600" opacity="0.700"/></svg>
<div style="left:2494.8px;top:187.88px;width:157.6px;height:29.6px;background:rgba(20,60,110,0.16);border-radius:5.6px;"></div>
<div style="left:-132.8px;top:349.76px;width:379px;height:163.6px;background:#7f88d9;border-radius:8.8px;"></div>
<svg style="left:0;top:0" width="2660" height="1284" viewBox="0 0 665 321"><path d="M-0.2 107.6L0.3 107.6L0.8 107.6L1.3 107.6L1.8 107.6L2.3 107.6L2.8 107.6L3.3 107.6L3.8 107.6L4.3 107.6L4.8 107.6L5.3 107.6L5.8 107.6L6.3 107.6L6.8 107.6L7.3 107.6L7.8 107.6L8.3 107.6L8.8 107.6L9.3 107.6L9.8 107.6L10.3 107.6L10.8 107.6L11.3 107.6L11.8 107.6L12.3 107.6L12.8 107.6L13.3 107.6L13.8 107.6L14.3 107.6L14.8 107.6L15.3 107.6L15.8 107.6L16.3 107.6L16.8 107.6L17.3 107.6L17.8 107.2L18.3 106.6L18.8 107.2L19.3 107.6L19.8 107.6L20.3 107.6L20.8 107.6L21.3 107.6L21.8 107.6L22.3 107.6L22.8 107.6L23.3 107.6L23.8 106.9L24.3 105.5L24.8 104.2L25.3 103.0L25.8 101.9L26.3 100.8L26.8 100.6L27.3 101.0L27.8 101.3L28.3 101.7L28.8 102.1L29.3 102.5L29.8 102.9L30.3 103.0L30.8 102.9L31.3 102.9L31.8 102.8L32.3 102.8L32.8 102.7L33.3 102.7L33.8 102.6L34.3 102.6L34.8 102.5L35.3 102.5L35.8 102.4L36.3 102.4L36.8 102.4L37.3 102.3L37.8 102.3L38.3 102.3L38.8 102.3L39.3 102.2L39.8 102.2L40.3 102.2L40.8 102.2L41.3 102.2L41.8 102.2L42.3 102.3L42.8 102.3L43.3 102.3L43.8 102.3L44.3 102.4L44.8 102.4L45.3 102.4L45.8 102.5L46.3 102.5L46.8 102.6L47.3 102.6L47.8 102.7L48.3 102.8L48.8 102.8L49.3 102.9L49.8 103.0L50.3 103.0L50.8 103.1L51.3 103.2L51.8 103.3L52.3 103.4L52.8 103.4L53.3 103.4L53.8 103.5L54.3 103.5L54.8 103.5L55.3 103.5L55.8 103.7L56.3 104.2L56.8 104.7L57.3 105.3L57.8 105.9L58.3 106.8L58.8 107.6L59.3 107.6L59.8 107.6L60.3 107.6L60.8 107.6L60.8 108.3L60.3 108.3L59.8 108.3L59.3 108.3L58.8 108.3L58.3 109.0L57.8 109.9L57.3 110.6L56.8 111.2L56.3 111.7L55.8 112.2L55.3 112.4L54.8 112.4L54.3 112.4L53.8 112.4L53.3 112.4L52.8 112.5L52.3 112.5L51.8 112.6L51.3 112.7L50.8 112.8L50.3 112.8L49.8 112.9L49.3 113.0L48.8 113.0L48.3 113.1L47.8 113.2L47.3 113.2L46.8 113.3L46.3 113.3L45.8 113.4L45.3 113.4L44.8 113.5L44.3 113.5L43.8 113.5L43.3 113.6L42.8 113.6L42.3 113.6L41.8 113.6L41.3 113.6L40.8 113.6L40.3 113.6L39.8 113.6L39.3 113.6L38.8 113.6L38.3 113.6L37.8 113.6L37.3 113.6L36.8 113.5L36.3 113.5L35.8 113.5L35.3 113.4L34.8 113.4L34.3 113.3L33.8 113.3L33.3 113.2L32.8 113.2L32.3 113.1L31.8 113.1L31.3 113.0L30.8 112.9L30.3 112.9L29.8 113.0L29.3 113.4L28.8 113.8L28.3 114.2L27.8 114.5L27.3 114.9L26.8 115.3L26.3 115.1L25.8 114.0L25.3 112.9L24.8 111.7L24.3 110.4L23.8 109.0L23.3 108.3L22.8 108.3L22.3 108.3L21.8 108.3L21.3 108.3L20.8 108.3L20.3 108.3L19.8 108.3L19.3 108.3L18.8 108.7L18.3 109.2L17.8 108.7L17.3 108.3L16.8 108.3L16.3 108.3L15.8 108.3L15.3 108.3L14.8 108.3L14.3 108.3L13.8 108.3L13.3 108.3L12.8 108.3L12.3 108.3L11.8 108.3L11.3 108.3L10.8 108.3L10.3 108.3L9.8 108.3L9.3 108.3L8.8 108.3L8.3 108.3L7.8 108.3L7.3 108.3L6.8 108.3L6.3 108.3L5.8 108.3L5.3 108.3L4.8 108.3L4.3 108.3L3.8 108.3L3.3 108.3L2.8 108.3L2.3 108.3L1.8 108.3L1.3 108.3L0.8 108.3L0.3 108.3L-0.2 108.3Z" fill="#505a92"/></svg>
<div style="left:246.2px;top:349.76px;width:563.8px;height:163.6px;background:#7f88d9;border-radius:8.8px;"></div>
<div style="left:243.4px;top:359.36px;width:5.6px;height:144.4px;background:#7f88d9;"></div>
<svg style="left:0;top:0" width="2660" height="1284" viewBox="0 0 665 321"><path d="M62.0 107.6L62.5 107.6L63.0 107.6L63.5 107.6L64.0 107.6L64.5 107.6L65.0 107.6L65.5 107.6L66.0 107.6L66.5 107.6L67.0 107.6L67.5 107.6L68.0 107.6L68.5 107.6L69.0 107.6L69.5 107.6L70.0 107.6L70.5 107.6L71.0 107.6L71.5 107.6L72.0 107.6L72.5 107.6L73.0 107.6L73.5 107.6L74.0 107.6L74.5 107.6L75.0 107.6L75.5 107.6L76.0 107.6L76.5 107.6L77.0 107.6L77.5 107.6L78.0 107.6L78.5 107.6L79.0 107.6L79.5 107.6L80.0 107.6L80.5 107.6L81.0 107.6L81.5 107.6L82.0 107.6L82.5 107.6L83.0 107.6L83.5 107.6L84.0 107.6L84.5 107.6L85.0 107.6L85.5 107.3L86.0 106.7L86.5 107.1L87.0 107.6L87.5 107.6L88.0 107.6L88.5 107.6L89.0 107.6L89.5 107.6L90.0 107.6L90.5 107.6L91.0 107.6L91.5 107.2L92.0 105.7L92.5 104.5L93.0 103.3L93.5 102.1L94.0 101.0L94.5 100.5L95.0 100.9L95.5 101.3L96.0 101.7L96.5 102.0L97.0 102.4L97.5 102.8L98.0 103.0L98.5 103.0L99.0 102.9L99.5 102.8L100.0 102.8L100.5 102.7L101.0 102.7L101.5 102.6L102.0 102.6L102.5 102.5L102.9 102.5L103.4 102.4L103.9 102.4L104.4 102.4L104.9 102.3L105.4 102.3L105.9 102.3L106.4 102.3L106.9 102.2L107.4 102.2L107.9 102.2L108.4 102.2L108.9 102.2L109.4 102.2L109.9 102.3L110.4 102.3L110.9 102.3L111.4 102.3L111.9 102.4L112.4 102.4L112.9 102.4L113.4 102.5L113.9 102.5L114.4 102.6L114.9 102.6L115.4 102.7L115.9 102.8L116.4 102.8L116.9 102.9L117.4 103.0L117.9 103.0L118.4 103.1L118.9 103.2L119.4 103.3L119.9 103.3L120.4 103.4L120.9 103.4L121.4 103.5L121.9 103.5L122.4 103.5L122.9 103.5L123.4 103.6L123.9 104.1L124.4 104.6L124.9 105.1L125.4 105.8L125.9 106.6L126.4 107.6L126.9 107.6L127.4 107.6L127.9 107.6L128.4 107.6L128.9 107.6L129.4 107.6L129.9 107.6L130.4 107.6L130.9 107.6L131.4 107.6L131.9 107.6L132.4 107.6L132.9 107.6L133.4 107.6L133.9 107.6L134.4 107.6L134.9 107.6L135.4 107.6L135.9 107.6L136.4 107.6L136.9 107.6L137.4 107.6L137.9 107.6L138.4 107.6L138.9 107.6L139.4 107.6L139.9 107.6L140.4 107.6L140.9 107.6L141.4 107.6L141.9 107.6L142.4 107.6L142.9 107.6L143.4 107.6L143.9 107.6L144.4 107.6L144.9 107.6L145.4 107.6L145.9 107.6L146.4 107.6L146.9 107.6L147.4 107.6L147.9 107.6L148.4 107.3L148.9 106.7L149.4 107.1L149.9 107.6L150.4 107.6L150.9 107.6L151.4 107.6L151.9 107.6L152.4 107.6L152.9 107.6L153.4 107.6L153.9 107.6L154.4 107.2L154.9 105.7L155.4 104.5L155.9 103.3L156.4 102.1L156.9 101.0L157.4 100.5L157.9 100.9L158.4 101.3L158.9 101.7L159.4 102.0L159.9 102.4L160.4 102.8L160.9 103.0L161.4 103.0L161.9 102.9L162.4 102.8L162.9 102.8L163.4 102.7L163.9 102.7L164.4 102.6L164.9 102.6L165.4 102.5L165.9 102.5L166.4 102.4L166.9 102.4L167.4 102.4L167.9 102.3L168.4 102.3L168.9 102.3L169.4 102.3L169.9 102.2L170.4 102.2L170.9 102.2L171.4 102.2L171.9 102.2L172.4 102.2L172.9 102.3L173.4 102.3L173.9 102.3L174.4 102.3L174.9 102.4L175.4 102.4L175.9 102.5L176.4 102.5L176.9 102.5L177.4 102.6L177.9 102.7L178.4 102.7L178.9 102.8L179.4 102.9L179.9 102.9L180.4 103.0L180.9 103.1L181.4 103.1L181.9 103.2L182.4 103.3L182.9 103.4L183.4 103.4L183.9 103.4L184.4 103.5L184.9 103.5L185.4 103.5L185.9 103.5L186.4 103.9L186.9 104.4L187.4 104.9L187.9 105.5L188.4 106.3L188.9 107.4L189.4 107.6L189.9 107.6L190.4 107.6L190.9 107.6L191.4 107.6L191.9 107.6L192.4 107.6L192.9 107.6L193.4 107.6L193.9 107.6L194.4 107.6L194.9 107.6L195.4 107.6L195.9 107.6L196.4 107.6L196.9 107.6L197.4 107.6L197.9 107.6L198.4 107.6L198.9 107.6L199.4 107.6L199.9 107.6L200.4 107.6L200.9 107.6L201.4 107.6L201.9 107.6L201.9 108.3L201.4 108.3L200.9 108.3L200.4 108.3L199.9 108.3L199.4 108.3L198.9 108.3L198.4 108.3L197.9 108.3L197.4 108.3L196.9 108.3L196.4 108.3L195.9 108.3L195.4 108.3L194.9 108.3L194.4 108.3L193.9 108.3L193.4 108.3L192.9 108.3L192.4 108.3L191.9 108.3L191.4 108.3L190.9 108.3L190.4 108.3L189.9 108.3L189.4 108.3L188.9 108.5L188.4 109.6L187.9 110.4L187.4 111.0L186.9 111.5L186.4 112.0L185.9 112.4L185.4 112.4L184.9 112.4L184.4 112.4L183.9 112.4L183.4 112.4L182.9 112.5L182.4 112.6L181.9 112.7L181.4 112.7L180.9 112.8L180.4 112.9L179.9 113.0L179.4 113.0L178.9 113.1L178.4 113.2L177.9 113.2L177.4 113.3L176.9 113.3L176.4 113.4L175.9 113.4L175.4 113.5L174.9 113.5L174.4 113.5L173.9 113.6L173.4 113.6L172.9 113.6L172.4 113.6L171.9 113.6L171.4 113.6L170.9 113.6L170.4 113.6L169.9 113.6L169.4 113.6L168.9 113.6L168.4 113.6L167.9 113.6L167.4 113.5L166.9 113.5L166.4 113.5L165.9 113.4L165.4 113.4L164.9 113.3L164.4 113.3L163.9 113.2L163.4 113.2L162.9 113.1L162.4 113.0L161.9 113.0L161.4 112.9L160.9 112.9L160.4 113.1L159.9 113.5L159.4 113.8L158.9 114.2L158.4 114.6L157.9 115.0L157.4 115.4L156.9 114.9L156.4 113.8L155.9 112.6L155.4 111.4L154.9 110.1L154.4 108.7L153.9 108.3L153.4 108.3L152.9 108.3L152.4 108.3L151.9 108.3L151.4 108.3L150.9 108.3L150.4 108.3L149.9 108.3L149.4 108.8L148.9 109.1L148.4 108.6L147.9 108.3L147.4 108.3L146.9 108.3L146.4 108.3L145.9 108.3L145.4 108.3L144.9 108.3L144.4 108.3L143.9 108.3L143.4 108.3L142.9 108.3L142.4 108.3L141.9 108.3L141.4 108.3L140.9 108.3L140.4 108.3L139.9 108.3L139.4 108.3L138.9 108.3L138.4 108.3L137.9 108.3L137.4 108.3L136.9 108.3L136.4 108.3L135.9 108.3L135.4 108.3L134.9 108.3L134.4 108.3L133.9 108.3L133.4 108.3L132.9 108.3L132.4 108.3L131.9 108.3L131.4 108.3L130.9 108.3L130.4 108.3L129.9 108.3L129.4 108.3L128.9 108.3L128.4 108.3L127.9 108.3L127.4 108.3L126.9 108.3L126.4 108.3L125.9 109.3L125.4 110.1L124.9 110.7L124.4 111.3L123.9 111.8L123.4 112.3L122.9 112.4L122.4 112.4L121.9 112.4L121.4 112.4L120.9 112.4L120.4 112.5L119.9 112.5L119.4 112.6L118.9 112.7L118.4 112.8L117.9 112.8L117.4 112.9L116.9 113.0L116.4 113.1L115.9 113.1L115.4 113.2L114.9 113.2L114.4 113.3L113.9 113.4L113.4 113.4L112.9 113.4L112.4 113.5L111.9 113.5L111.4 113.6L110.9 113.6L110.4 113.6L109.9 113.6L109.4 113.6L108.9 113.6L108.4 113.6L107.9 113.6L107.4 113.6L106.9 113.6L106.4 113.6L105.9 113.6L105.4 113.6L104.9 113.5L104.4 113.5L103.9 113.5L103.4 113.4L102.9 113.4L102.5 113.4L102.0 113.3L101.5 113.3L101.0 113.2L100.5 113.2L100.0 113.1L99.5 113.0L99.0 113.0L98.5 112.9L98.0 112.9L97.5 113.1L97.0 113.5L96.5 113.8L96.0 114.2L95.5 114.6L95.0 115.0L94.5 115.4L94.0 114.9L93.5 113.8L93.0 112.6L92.5 111.4L92.0 110.1L91.5 108.7L91.0 108.3L90.5 108.3L90.0 108.3L89.5 108.3L89.0 108.3L88.5 108.3L88.0 108.3L87.5 108.3L87.0 108.3L86.5 108.8L86.0 109.1L85.5 108.6L85.0 108.3L84.5 108.3L84.0 108.3L83.5 108.3L83.0 108.3L82.5 108.3L82.0 108.3L81.5 108.3L81.0 108.3L80.5 108.3L80.0 108.3L79.5 108.3L79.0 108.3L78.5 108.3L78.0 108.3L77.5 108.3L77.0 108.3L76.5 108.3L76.0 108.3L75.5 108.3L75.0 108.3L74.5 108.3L74.0 108.3L73.5 108.3L73.0 108.3L72.5 108.3L72.0 108.3L71.5 108.3L71.0 108.3L70.5 108.3L70.0 108.3L69.5 108.3L69.0 108.3L68.5 108.3L68.0 108.3L67.5 108.3L67.0 108.3L66.5 108.3L66.0 108.3L65.5 108.3L65.0 108.3L64.5 108.3L64.0 108.3L63.5 108.3L63.0 108.3L62.5 108.3L62.0 108.3Z" fill="#505a92"/></svg>
<div style="left:257.8px;top:362.16px;width:167.2px;height:29.6px;background:rgba(255,255,255,0.15);border-radius:5.6px;"></div>
<div style="left:810px;top:349.76px;width:555.2px;height:163.6px;background:#7f88d9;border-radius:8.8px;"></div>
<div style="left:807.2px;top:359.36px;width:5.6px;height:144.4px;background:#7f88d9;"></div>
<svg style="left:0;top:0" width="2660" height="1284" viewBox="0 0 665 321"><path d="M202.9 107.6L203.4 107.6L203.9 107.6L204.4 107.6L204.9 107.6L205.4 107.6L205.9 107.6L206.4 107.6L206.9 107.6L207.4 107.6L207.9 107.6L208.4 107.6L208.9 107.6L209.4 107.6L209.9 107.6L210.4 107.6L210.9 107.6L211.4 107.6L211.9 107.6L212.4 107.6L212.9 107.6L213.4 107.6L213.9 107.6L214.4 107.6L214.9 107.6L215.4 107.6L215.9 107.6L216.4 107.6L216.9 107.6L217.4 107.6L217.9 107.6L218.4 107.6L218.9 107.6L219.4 107.6L219.9 107.6L220.4 107.6L220.9 107.6L221.4 107.6L221.9 107.6L222.4 107.6L222.9 107.6L223.4 107.6L223.9 107.6L224.4 107.6L224.9 107.6L225.4 107.6L225.9 107.6L226.4 107.3L226.9 106.7L227.4 107.1L227.9 107.6L228.4 107.6L228.9 107.6L229.4 107.6L229.9 107.6L230.4 107.6L230.9 107.6L231.4 107.6L231.9 107.6L232.4 107.2L232.9 105.7L233.4 104.5L233.9 103.3L234.4 102.1L234.9 101.0L235.4 100.5L235.9 100.9L236.4 101.3L236.9 101.7L237.4 102.0L237.9 102.4L238.4 102.8L238.9 103.0L239.4 103.0L239.9 102.9L240.4 102.8L240.9 102.8L241.4 102.7L241.9 102.7L242.4 102.6L242.9 102.6L243.4 102.5L243.9 102.5L244.4 102.4L244.9 102.4L245.4 102.4L245.9 102.3L246.4 102.3L246.9 102.3L247.4 102.3L247.9 102.2L248.4 102.2L248.9 102.2L249.4 102.2L249.9 102.2L250.4 102.2L250.9 102.3L251.4 102.3L251.9 102.3L252.4 102.3L252.9 102.4L253.4 102.4L253.9 102.4L254.4 102.5L254.9 102.5L255.4 102.6L255.9 102.6L256.4 102.7L256.9 102.8L257.4 102.8L257.9 102.9L258.4 103.0L258.9 103.0L259.4 103.1L259.9 103.2L260.4 103.3L260.9 103.3L261.4 103.4L261.9 103.4L262.4 103.5L262.9 103.5L263.4 103.5L263.9 103.5L264.4 103.6L264.9 104.1L265.4 104.6L265.9 105.1L266.4 105.8L266.9 106.6L267.4 107.6L267.9 107.6L268.4 107.6L268.9 107.6L269.4 107.6L269.9 107.6L270.4 107.6L270.9 107.6L271.4 107.6L271.9 107.6L272.4 107.6L272.9 107.6L273.4 107.6L273.9 107.6L274.4 107.6L274.9 107.6L275.4 107.6L275.9 107.6L276.4 107.6L276.9 107.6L277.4 107.6L277.9 107.6L278.4 107.6L278.9 107.6L279.4 107.6L279.9 107.6L280.4 107.6L280.9 107.6L281.4 107.6L281.9 107.6L282.4 107.6L282.9 107.6L283.4 107.6L283.9 107.6L284.4 107.6L284.9 107.6L285.4 107.6L285.9 107.6L286.4 107.6L286.9 107.6L287.4 107.6L287.9 107.6L288.4 107.6L288.9 107.6L289.4 107.3L289.9 106.7L290.4 107.1L290.9 107.6L291.4 107.6L291.9 107.6L292.4 107.6L292.9 107.6L293.4 107.6L293.9 107.6L294.4 107.6L294.9 107.6L295.4 107.2L295.9 105.7L296.4 104.5L296.9 103.3L297.4 102.1L297.9 101.0L298.4 100.5L298.9 100.9L299.4 101.3L299.9 101.7L300.4 102.0L300.9 102.4L301.4 102.8L301.9 103.0L302.4 103.0L302.9 102.9L303.4 102.8L303.9 102.8L304.4 102.7L304.9 102.7L305.4 102.6L305.9 102.6L306.4 102.5L306.9 102.5L307.4 102.4L307.9 102.4L308.4 102.4L308.9 102.3L309.4 102.3L309.9 102.3L310.4 102.3L310.9 102.2L311.4 102.2L311.9 102.2L312.4 102.2L312.9 102.2L313.4 102.2L313.9 102.3L314.4 102.3L314.9 102.3L315.4 102.3L315.9 102.4L316.4 102.4L316.9 102.5L317.4 102.5L317.9 102.5L318.4 102.6L318.9 102.7L319.4 102.7L319.9 102.8L320.4 102.9L320.9 102.9L321.4 103.0L321.9 103.1L322.4 103.1L322.9 103.2L323.4 103.3L323.9 103.4L324.4 103.4L324.9 103.4L325.4 103.5L325.9 103.5L326.4 103.5L326.9 103.5L327.4 103.9L327.9 104.4L328.4 104.9L328.9 105.5L329.4 106.3L329.9 107.4L330.4 107.6L330.9 107.6L331.4 107.6L331.9 107.6L332.4 107.6L332.9 107.6L333.4 107.6L333.9 107.6L334.4 107.6L334.9 107.6L335.4 107.6L335.9 107.6L336.4 107.6L336.9 107.6L337.4 107.6L337.9 107.6L338.4 107.6L338.9 107.6L339.4 107.6L339.9 107.6L340.4 107.6L340.9 107.6L340.9 108.3L340.4 108.3L339.9 108.3L339.4 108.3L338.9 108.3L338.4 108.3L337.9 108.3L337.4 108.3L336.9 108.3L336.4 108.3L335.9 108.3L335.4 108.3L334.9 108.3L334.4 108.3L333.9 108.3L333.4 108.3L332.9 108.3L332.4 108.3L331.9 108.3L331.4 108.3L330.9 108.3L330.4 108.3L329.9 108.5L329.4 109.6L328.9 110.4L328.4 111.0L327.9 111.5L327.4 112.0L326.9 112.4L326.4 112.4L325.9 112.4L325.4 112.4L324.9 112.4L324.4 112.4L323.9 112.5L323.4 112.6L322.9 112.7L322.4 112.7L321.9 112.8L321.4 112.9L320.9 113.0L320.4 113.0L319.9 113.1L319.4 113.2L318.9 113.2L318.4 113.3L317.9 113.3L317.4 113.4L316.9 113.4L316.4 113.5L315.9 113.5L315.4 113.5L314.9 113.6L314.4 113.6L313.9 113.6L313.4 113.6L312.9 113.6L312.4 113.6L311.9 113.6L311.4 113.6L310.9 113.6L310.4 113.6L309.9 113.6L309.4 113.6L308.9 113.6L308.4 113.5L307.9 113.5L307.4 113.5L306.9 113.4L306.4 113.4L305.9 113.3L305.4 113.3L304.9 113.2L304.4 113.2L303.9 113.1L303.4 113.0L302.9 113.0L302.4 112.9L301.9 112.9L301.4 113.1L300.9 113.5L300.4 113.8L299.9 114.2L299.4 114.6L298.9 115.0L298.4 115.4L297.9 114.9L297.4 113.8L296.9 112.6L296.4 111.4L295.9 110.1L295.4 108.7L294.9 108.3L294.4 108.3L293.9 108.3L293.4 108.3L292.9 108.3L292.4 108.3L291.9 108.3L291.4 108.3L290.9 108.3L290.4 108.8L289.9 109.1L289.4 108.6L288.9 108.3L288.4 108.3L287.9 108.3L287.4 108.3L286.9 108.3L286.4 108.3L285.9 108.3L285.4 108.3L284.9 108.3L284.4 108.3L283.9 108.3L283.4 108.3L282.9 108.3L282.4 108.3L281.9 108.3L281.4 108.3L280.9 108.3L280.4 108.3L279.9 108.3L279.4 108.3L278.9 108.3L278.4 108.3L277.9 108.3L277.4 108.3L276.9 108.3L276.4 108.3L275.9 108.3L275.4 108.3L274.9 108.3L274.4 108.3L273.9 108.3L273.4 108.3L272.9 108.3L272.4 108.3L271.9 108.3L271.4 108.3L270.9 108.3L270.4 108.3L269.9 108.3L269.4 108.3L268.9 108.3L268.4 108.3L267.9 108.3L267.4 108.3L266.9 109.3L266.4 110.1L265.9 110.7L265.4 111.3L264.9 111.8L264.4 112.3L263.9 112.4L263.4 112.4L262.9 112.4L262.4 112.4L261.9 112.4L261.4 112.5L260.9 112.5L260.4 112.6L259.9 112.7L259.4 112.8L258.9 112.8L258.4 112.9L257.9 113.0L257.4 113.1L256.9 113.1L256.4 113.2L255.9 113.2L255.4 113.3L254.9 113.4L254.4 113.4L253.9 113.4L253.4 113.5L252.9 113.5L252.4 113.6L251.9 113.6L251.4 113.6L250.9 113.6L250.4 113.6L249.9 113.6L249.4 113.6L248.9 113.6L248.4 113.6L247.9 113.6L247.4 113.6L246.9 113.6L246.4 113.6L245.9 113.5L245.4 113.5L244.9 113.5L244.4 113.4L243.9 113.4L243.4 113.4L242.9 113.3L242.4 113.3L241.9 113.2L241.4 113.2L240.9 113.1L240.4 113.0L239.9 113.0L239.4 112.9L238.9 112.9L238.4 113.1L237.9 113.5L237.4 113.8L236.9 114.2L236.4 114.6L235.9 115.0L235.4 115.4L234.9 114.9L234.4 113.8L233.9 112.6L233.4 111.4L232.9 110.1L232.4 108.7L231.9 108.3L231.4 108.3L230.9 108.3L230.4 108.3L229.9 108.3L229.4 108.3L228.9 108.3L228.4 108.3L227.9 108.3L227.4 108.8L226.9 109.1L226.4 108.6L225.9 108.3L225.4 108.3L224.9 108.3L224.4 108.3L223.9 108.3L223.4 108.3L222.9 108.3L222.4 108.3L221.9 108.3L221.4 108.3L220.9 108.3L220.4 108.3L219.9 108.3L219.4 108.3L218.9 108.3L218.4 108.3L217.9 108.3L217.4 108.3L216.9 108.3L216.4 108.3L215.9 108.3L215.4 108.3L214.9 108.3L214.4 108.3L213.9 108.3L213.4 108.3L212.9 108.3L212.4 108.3L211.9 108.3L211.4 108.3L210.9 108.3L210.4 108.3L209.9 108.3L209.4 108.3L208.9 108.3L208.4 108.3L207.9 108.3L207.4 108.3L206.9 108.3L206.4 108.3L205.9 108.3L205.4 108.3L204.9 108.3L204.4 108.3L203.9 108.3L203.4 108.3L202.9 108.3Z" fill="#505a92"/></svg>
<div style="left:821.6px;top:362.16px;width:167.2px;height:29.6px;background:rgba(255,255,255,0.15);border-radius:5.6px;"></div>
<div style="left:1365.2px;top:349.76px;width:563.6px;height:163.6px;background:#7f88d9;border-radius:8.8px;"></div>
<div style="left:1362.4px;top:359.36px;width:5.6px;height:144.4px;background:#7f88d9;"></div>
<svg style="left:0;top:0" width="2660" height="1284" viewBox="0 0 665 321"><path d="M341.7 107.6L342.2 107.6L342.7 107.6L343.2 107.6L343.7 107.6L344.2 107.6L344.7 107.6L345.2 107.6L345.7 107.6L346.2 107.6L346.7 107.6L347.2 107.6L347.7 107.6L348.2 107.6L348.7 107.6L349.2 107.6L349.7 107.6L350.2 107.6L350.7 107.6L351.2 107.6L351.7 107.6L352.2 107.6L352.7 107.6L353.2 107.6L353.7 107.6L354.2 107.6L354.7 107.6L355.2 107.6L355.7 107.6L356.2 107.6L356.7 107.6L357.2 107.6L357.7 107.6L358.2 107.6L358.7 107.6L359.2 107.6L359.7 107.6L360.2 107.6L360.7 107.6L361.2 107.6L361.7 107.6L362.2 107.6L362.7 107.6L363.2 107.6L363.7 107.6L364.2 107.6L364.7 107.6L365.2 107.3L365.7 106.7L366.2 107.1L366.7 107.6L367.2 107.6L367.7 107.6L368.2 107.6L368.7 107.6L369.2 107.6L369.7 107.6L370.2 107.6L370.7 107.6L371.2 107.2L371.7 105.7L372.2 104.5L372.7 103.3L373.2 102.1L373.7 101.0L374.2 100.5L374.7 100.9L375.2 101.3L375.7 101.7L376.2 102.0L376.7 102.4L377.2 102.8L377.7 103.0L378.2 103.0L378.7 102.9L379.2 102.8L379.7 102.8L380.2 102.7L380.7 102.7L381.2 102.6L381.7 102.6L382.2 102.5L382.7 102.5L383.2 102.4L383.7 102.4L384.2 102.4L384.7 102.3L385.2 102.3L385.7 102.3L386.2 102.3L386.7 102.2L387.2 102.2L387.7 102.2L388.2 102.2L388.7 102.2L389.2 102.2L389.7 102.3L390.2 102.3L390.7 102.3L391.2 102.3L391.7 102.4L392.2 102.4L392.7 102.4L393.2 102.5L393.7 102.5L394.2 102.6L394.7 102.6L395.2 102.7L395.7 102.8L396.2 102.8L396.7 102.9L397.2 103.0L397.7 103.0L398.2 103.1L398.7 103.2L399.2 103.3L399.7 103.3L400.2 103.4L400.7 103.4L401.2 103.5L401.7 103.5L402.2 103.5L402.7 103.5L403.2 103.6L403.7 104.1L404.2 104.6L404.7 105.1L405.2 105.8L405.7 106.6L406.2 107.6L406.7 107.6L407.2 107.6L407.7 107.6L408.2 107.6L408.7 107.6L409.2 107.6L409.7 107.6L410.2 107.6L410.7 107.6L411.2 107.6L411.7 107.6L412.2 107.6L412.7 107.6L413.2 107.6L413.7 107.6L414.2 107.6L414.7 107.6L415.2 107.6L415.7 107.6L416.2 107.6L416.7 107.6L417.2 107.6L417.7 107.6L418.2 107.6L418.7 107.6L419.2 107.6L419.7 107.6L420.2 107.6L420.7 107.6L421.2 107.6L421.7 107.6L422.2 107.6L422.7 107.6L423.2 107.6L423.7 107.6L424.2 107.6L424.7 107.6L425.2 107.6L425.7 107.6L426.2 107.6L426.7 107.6L427.2 107.6L427.7 107.6L428.2 107.3L428.7 106.7L429.2 107.1L429.7 107.6L430.2 107.6L430.7 107.6L431.2 107.6L431.7 107.6L432.2 107.6L432.7 107.6L433.2 107.6L433.7 107.6L434.2 107.2L434.7 105.7L435.2 104.5L435.7 103.3L436.2 102.1L436.7 101.0L437.2 100.5L437.7 100.9L438.2 101.3L438.7 101.7L439.2 102.0L439.7 102.4L440.2 102.8L440.7 103.0L441.2 103.0L441.7 102.9L442.2 102.8L442.7 102.8L443.2 102.7L443.7 102.7L444.2 102.6L444.7 102.6L445.2 102.5L445.7 102.5L446.2 102.4L446.7 102.4L447.2 102.4L447.7 102.3L448.2 102.3L448.7 102.3L449.2 102.3L449.7 102.2L450.2 102.2L450.7 102.2L451.2 102.2L451.7 102.2L452.2 102.2L452.7 102.3L453.2 102.3L453.7 102.3L454.2 102.3L454.7 102.4L455.2 102.4L455.7 102.5L456.2 102.5L456.7 102.5L457.2 102.6L457.7 102.7L458.2 102.7L458.7 102.8L459.2 102.9L459.7 102.9L460.2 103.0L460.7 103.1L461.2 103.1L461.7 103.2L462.2 103.3L462.7 103.4L463.2 103.4L463.7 103.4L464.2 103.5L464.7 103.5L465.2 103.5L465.7 103.5L466.2 103.9L466.7 104.4L467.2 104.9L467.7 105.5L468.2 106.3L468.7 107.4L469.2 107.6L469.7 107.6L470.2 107.6L470.7 107.6L471.2 107.6L471.7 107.6L472.2 107.6L472.7 107.6L473.2 107.6L473.7 107.6L474.2 107.6L474.7 107.6L475.2 107.6L475.7 107.6L476.2 107.6L476.7 107.6L477.2 107.6L477.7 107.6L478.2 107.6L478.7 107.6L479.2 107.6L479.7 107.6L480.2 107.6L480.7 107.6L481.2 107.6L481.7 107.6L481.7 108.3L481.2 108.3L480.7 108.3L480.2 108.3L479.7 108.3L479.2 108.3L478.7 108.3L478.2 108.3L477.7 108.3L477.2 108.3L476.7 108.3L476.2 108.3L475.7 108.3L475.2 108.3L474.7 108.3L474.2 108.3L473.7 108.3L473.2 108.3L472.7 108.3L472.2 108.3L471.7 108.3L471.2 108.3L470.7 108.3L470.2 108.3L469.7 108.3L469.2 108.3L468.7 108.5L468.2 109.6L467.7 110.4L467.2 111.0L466.7 111.5L466.2 112.0L465.7 112.4L465.2 112.4L464.7 112.4L464.2 112.4L463.7 112.4L463.2 112.4L462.7 112.5L462.2 112.6L461.7 112.7L461.2 112.7L460.7 112.8L460.2 112.9L459.7 113.0L459.2 113.0L458.7 113.1L458.2 113.2L457.7 113.2L457.2 113.3L456.7 113.3L456.2 113.4L455.7 113.4L455.2 113.5L454.7 113.5L454.2 113.5L453.7 113.6L453.2 113.6L452.7 113.6L452.2 113.6L451.7 113.6L451.2 113.6L450.7 113.6L450.2 113.6L449.7 113.6L449.2 113.6L448.7 113.6L448.2 113.6L447.7 113.6L447.2 113.5L446.7 113.5L446.2 113.5L445.7 113.4L445.2 113.4L444.7 113.3L444.2 113.3L443.7 113.2L443.2 113.2L442.7 113.1L442.2 113.0L441.7 113.0L441.2 112.9L440.7 112.9L440.2 113.1L439.7 113.5L439.2 113.8L438.7 114.2L438.2 114.6L437.7 115.0L437.2 115.4L436.7 114.9L436.2 113.8L435.7 112.6L435.2 111.4L434.7 110.1L434.2 108.7L433.7 108.3L433.2 108.3L432.7 108.3L432.2 108.3L431.7 108.3L431.2 108.3L430.7 108.3L430.2 108.3L429.7 108.3L429.2 108.8L428.7 109.1L428.2 108.6L427.7 108.3L427.2 108.3L426.7 108.3L426.2 108.3L425.7 108.3L425.2 108.3L424.7 108.3L424.2 108.3L423.7 108.3L423.2 108.3L422.7 108.3L422.2 108.3L421.7 108.3L421.2 108.3L420.7 108.3L420.2 108.3L419.7 108.3L419.2 108.3L418.7 108.3L418.2 108.3L417.7 108.3L417.2 108.3L416.7 108.3L416.2 108.3L415.7 108.3L415.2 108.3L414.7 108.3L414.2 108.3L413.7 108.3L413.2 108.3L412.7 108.3L412.2 108.3L411.7 108.3L411.2 108.3L410.7 108.3L410.2 108.3L409.7 108.3L409.2 108.3L408.7 108.3L408.2 108.3L407.7 108.3L407.2 108.3L406.7 108.3L406.2 108.3L405.7 109.3L405.2 110.1L404.7 110.7L404.2 111.3L403.7 111.8L403.2 112.3L402.7 112.4L402.2 112.4L401.7 112.4L401.2 112.4L400.7 112.4L400.2 112.5L399.7 112.5L399.2 112.6L398.7 112.7L398.2 112.8L397.7 112.8L397.2 112.9L396.7 113.0L396.2 113.1L395.7 113.1L395.2 113.2L394.7 113.2L394.2 113.3L393.7 113.4L393.2 113.4L392.7 113.4L392.2 113.5L391.7 113.5L391.2 113.6L390.7 113.6L390.2 113.6L389.7 113.6L389.2 113.6L388.7 113.6L388.2 113.6L387.7 113.6L387.2 113.6L386.7 113.6L386.2 113.6L385.7 113.6L385.2 113.6L384.7 113.5L384.2 113.5L383.7 113.5L383.2 113.4L382.7 113.4L382.2 113.4L381.7 113.3L381.2 113.3L380.7 113.2L380.2 113.2L379.7 113.1L379.2 113.0L378.7 113.0L378.2 112.9L377.7 112.9L377.2 113.1L376.7 113.5L376.2 113.8L375.7 114.2L375.2 114.6L374.7 115.0L374.2 115.4L373.7 114.9L373.2 113.8L372.7 112.6L372.2 111.4L371.7 110.1L371.2 108.7L370.7 108.3L370.2 108.3L369.7 108.3L369.2 108.3L368.7 108.3L368.2 108.3L367.7 108.3L367.2 108.3L366.7 108.3L366.2 108.8L365.7 109.1L365.2 108.6L364.7 108.3L364.2 108.3L363.7 108.3L363.2 108.3L362.7 108.3L362.2 108.3L361.7 108.3L361.2 108.3L360.7 108.3L360.2 108.3L359.7 108.3L359.2 108.3L358.7 108.3L358.2 108.3L357.7 108.3L357.2 108.3L356.7 108.3L356.2 108.3L355.7 108.3L355.2 108.3L354.7 108.3L354.2 108.3L353.7 108.3L353.2 108.3L352.7 108.3L352.2 108.3L351.7 108.3L351.2 108.3L350.7 108.3L350.2 108.3L349.7 108.3L349.2 108.3L348.7 108.3L348.2 108.3L347.7 108.3L347.2 108.3L346.7 108.3L346.2 108.3L345.7 108.3L345.2 108.3L344.7 108.3L344.2 108.3L343.7 108.3L343.2 108.3L342.7 108.3L342.2 108.3L341.7 108.3Z" fill="#505a92"/></svg>
<div style="left:1376.8px;top:362.16px;width:167.2px;height:29.6px;background:rgba(255,255,255,0.15);border-radius:5.6px;"></div>
<div style="left:1932.4px;top:349.76px;width:563.6px;height:163.6px;background:#7f88d9;border-radius:8.8px;"></div>
<svg style="left:0;top:0" width="2660" height="1284" viewBox="0 0 665 321"><path d="M483.5 107.6L484.0 107.6L484.5 107.6L485.0 107.6L485.5 107.6L486.0 107.6L486.5 107.6L487.0 107.6L487.5 107.6L488.0 107.6L488.5 107.6L489.0 107.6L489.5 107.6L490.0 107.6L490.5 107.6L491.0 107.6L491.5 107.6L492.0 107.6L492.5 107.6L493.0 107.6L493.5 107.6L494.0 107.6L494.5 107.6L495.0 107.6L495.5 107.6L496.0 107.6L496.5 107.6L497.0 107.6L497.5 107.6L498.0 107.6L498.5 107.6L499.0 107.6L499.5 107.6L500.0 107.6L500.5 107.6L501.0 107.6L501.5 107.6L502.0 107.6L502.5 107.6L503.0 107.6L503.5 107.6L504.0 107.6L504.5 107.6L505.0 107.6L505.5 107.6L506.0 107.6L506.5 107.6L507.0 107.3L507.5 106.7L508.0 107.1L508.5 107.6L509.0 107.6L509.5 107.6L510.0 107.6L510.5 107.6L511.0 107.6L511.5 107.6L512.0 107.6L512.5 107.6L513.0 107.2L513.5 105.7L514.0 104.5L514.5 103.3L515.0 102.1L515.5 101.0L516.0 100.5L516.5 100.9L517.0 101.3L517.5 101.7L518.0 102.0L518.5 102.4L519.0 102.8L519.5 103.0L520.0 103.0L520.5 102.9L521.0 102.8L521.5 102.8L522.0 102.7L522.5 102.7L523.0 102.6L523.5 102.6L524.0 102.5L524.5 102.5L525.0 102.4L525.5 102.4L526.0 102.4L526.5 102.3L527.0 102.3L527.5 102.3L528.0 102.3L528.5 102.2L529.0 102.2L529.5 102.2L530.0 102.2L530.5 102.2L531.0 102.2L531.5 102.3L532.0 102.3L532.5 102.3L533.0 102.3L533.5 102.4L534.0 102.4L534.5 102.4L535.0 102.5L535.5 102.5L536.0 102.6L536.5 102.6L537.0 102.7L537.5 102.8L538.0 102.8L538.5 102.9L539.0 103.0L539.5 103.0L540.0 103.1L540.5 103.2L541.0 103.3L541.5 103.3L542.0 103.4L542.5 103.4L543.0 103.5L543.5 103.5L544.0 103.5L544.5 103.5L545.0 103.6L545.5 104.1L546.0 104.6L546.5 105.1L547.0 105.8L547.5 106.6L548.0 107.6L548.5 107.6L549.0 107.6L549.5 107.6L550.0 107.6L550.5 107.6L551.0 107.6L551.5 107.6L552.0 107.6L552.5 107.6L553.0 107.6L553.5 107.6L554.0 107.6L554.5 107.6L555.0 107.6L555.5 107.6L556.0 107.6L556.5 107.6L557.0 107.6L557.5 107.6L558.0 107.6L558.5 107.6L559.0 107.6L559.5 107.6L560.0 107.6L560.5 107.6L561.0 107.6L561.5 107.6L562.0 107.6L562.5 107.6L563.0 107.6L563.5 107.6L564.0 107.6L564.5 107.6L565.0 107.6L565.5 107.6L566.0 107.6L566.5 107.6L567.0 107.6L567.5 107.6L568.0 107.6L568.5 107.6L569.0 107.6L569.5 107.6L570.0 107.3L570.5 106.7L571.0 107.1L571.5 107.6L572.0 107.6L572.5 107.6L573.0 107.6L573.5 107.6L574.0 107.6L574.5 107.6L575.0 107.6L575.5 107.6L576.0 107.2L576.5 105.7L577.0 104.5L577.5 103.3L578.0 102.1L578.5 101.0L579.0 100.5L579.5 100.9L580.0 101.3L580.5 101.7L581.0 102.0L581.5 102.4L582.0 102.8L582.5 103.0L583.0 103.0L583.5 102.9L584.0 102.8L584.5 102.8L585.0 102.7L585.5 102.7L586.0 102.6L586.5 102.6L587.0 102.5L587.5 102.5L588.0 102.4L588.5 102.4L589.0 102.4L589.5 102.3L590.0 102.3L590.5 102.3L591.0 102.3L591.5 102.2L592.0 102.2L592.5 102.2L593.0 102.2L593.5 102.2L594.0 102.2L594.5 102.3L595.0 102.3L595.5 102.3L596.0 102.3L596.5 102.4L597.0 102.4L597.5 102.5L598.0 102.5L598.5 102.5L599.0 102.6L599.5 102.7L600.0 102.7L600.5 102.8L601.0 102.9L601.5 102.9L602.0 103.0L602.5 103.1L603.0 103.1L603.5 103.2L604.0 103.3L604.5 103.4L605.0 103.4L605.5 103.4L606.0 103.5L606.5 103.5L607.0 103.5L607.5 103.5L608.0 103.9L608.5 104.4L609.0 104.9L609.5 105.5L610.0 106.3L610.5 107.4L611.0 107.6L611.5 107.6L612.0 107.6L612.5 107.6L613.0 107.6L613.5 107.6L614.0 107.6L614.5 107.6L615.0 107.6L615.5 107.6L616.0 107.6L616.5 107.6L617.0 107.6L617.5 107.6L618.0 107.6L618.5 107.6L619.0 107.6L619.5 107.6L620.0 107.6L620.5 107.6L621.0 107.6L621.5 107.6L622.0 107.6L622.5 107.6L623.0 107.6L623.5 107.6L623.5 108.3L623.0 108.3L622.5 108.3L622.0 108.3L621.5 108.3L621.0 108.3L620.5 108.3L620.0 108.3L619.5 108.3L619.0 108.3L618.5 108.3L618.0 108.3L617.5 108.3L617.0 108.3L616.5 108.3L616.0 108.3L615.5 108.3L615.0 108.3L614.5 108.3L614.0 108.3L613.5 108.3L613.0 108.3L612.5 108.3L612.0 108.3L611.5 108.3L611.0 108.3L610.5 108.5L610.0 109.6L609.5 110.4L609.0 111.0L608.5 111.5L608.0 112.0L607.5 112.4L607.0 112.4L606.5 112.4L606.0 112.4L605.5 112.4L605.0 112.4L604.5 112.5L604.0 112.6L603.5 112.7L603.0 112.7L602.5 112.8L602.0 112.9L601.5 113.0L601.0 113.0L600.5 113.1L600.0 113.2L599.5 113.2L599.0 113.3L598.5 113.3L598.0 113.4L597.5 113.4L597.0 113.5L596.5 113.5L596.0 113.5L595.5 113.6L595.0 113.6L594.5 113.6L594.0 113.6L593.5 113.6L593.0 113.6L592.5 113.6L592.0 113.6L591.5 113.6L591.0 113.6L590.5 113.6L590.0 113.6L589.5 113.6L589.0 113.5L588.5 113.5L588.0 113.5L587.5 113.4L587.0 113.4L586.5 113.3L586.0 113.3L585.5 113.2L585.0 113.2L584.5 113.1L584.0 113.0L583.5 113.0L583.0 112.9L582.5 112.9L582.0 113.1L581.5 113.5L581.0 113.8L580.5 114.2L580.0 114.6L579.5 115.0L579.0 115.4L578.5 114.9L578.0 113.8L577.5 112.6L577.0 111.4L576.5 110.1L576.0 108.7L575.5 108.3L575.0 108.3L574.5 108.3L574.0 108.3L573.5 108.3L573.0 108.3L572.5 108.3L572.0 108.3L571.5 108.3L571.0 108.8L570.5 109.1L570.0 108.6L569.5 108.3L569.0 108.3L568.5 108.3L568.0 108.3L567.5 108.3L567.0 108.3L566.5 108.3L566.0 108.3L565.5 108.3L565.0 108.3L564.5 108.3L564.0 108.3L563.5 108.3L563.0 108.3L562.5 108.3L562.0 108.3L561.5 108.3L561.0 108.3L560.5 108.3L560.0 108.3L559.5 108.3L559.0 108.3L558.5 108.3L558.0 108.3L557.5 108.3L557.0 108.3L556.5 108.3L556.0 108.3L555.5 108.3L555.0 108.3L554.5 108.3L554.0 108.3L553.5 108.3L553.0 108.3L552.5 108.3L552.0 108.3L551.5 108.3L551.0 108.3L550.5 108.3L550.0 108.3L549.5 108.3L549.0 108.3L548.5 108.3L548.0 108.3L547.5 109.3L547.0 110.1L546.5 110.7L546.0 111.3L545.5 111.8L545.0 112.3L544.5 112.4L544.0 112.4L543.5 112.4L543.0 112.4L542.5 112.4L542.0 112.5L541.5 112.5L541.0 112.6L540.5 112.7L540.0 112.8L539.5 112.8L539.0 112.9L538.5 113.0L538.0 113.1L537.5 113.1L537.0 113.2L536.5 113.2L536.0 113.3L535.5 113.4L535.0 113.4L534.5 113.4L534.0 113.5L533.5 113.5L533.0 113.6L532.5 113.6L532.0 113.6L531.5 113.6L531.0 113.6L530.5 113.6L530.0 113.6L529.5 113.6L529.0 113.6L528.5 113.6L528.0 113.6L527.5 113.6L527.0 113.6L526.5 113.5L526.0 113.5L525.5 113.5L525.0 113.4L524.5 113.4L524.0 113.4L523.5 113.3L523.0 113.3L522.5 113.2L522.0 113.2L521.5 113.1L521.0 113.0L520.5 113.0L520.0 112.9L519.5 112.9L519.0 113.1L518.5 113.5L518.0 113.8L517.5 114.2L517.0 114.6L516.5 115.0L516.0 115.4L515.5 114.9L515.0 113.8L514.5 112.6L514.0 111.4L513.5 110.1L513.0 108.7L512.5 108.3L512.0 108.3L511.5 108.3L511.0 108.3L510.5 108.3L510.0 108.3L509.5 108.3L509.0 108.3L508.5 108.3L508.0 108.8L507.5 109.1L507.0 108.6L506.5 108.3L506.0 108.3L505.5 108.3L505.0 108.3L504.5 108.3L504.0 108.3L503.5 108.3L503.0 108.3L502.5 108.3L502.0 108.3L501.5 108.3L501.0 108.3L500.5 108.3L500.0 108.3L499.5 108.3L499.0 108.3L498.5 108.3L498.0 108.3L497.5 108.3L497.0 108.3L496.5 108.3L496.0 108.3L495.5 108.3L495.0 108.3L494.5 108.3L494.0 108.3L493.5 108.3L493.0 108.3L492.5 108.3L492.0 108.3L491.5 108.3L491.0 108.3L490.5 108.3L490.0 108.3L489.5 108.3L489.0 108.3L488.5 108.3L488.0 108.3L487.5 108.3L487.0 108.3L486.5 108.3L486.0 108.3L485.5 108.3L485.0 108.3L484.5 108.3L484.0 108.3L483.5 108.3Z" fill="#505a92"/></svg>
<div style="left:1944px;top:362.16px;width:167.2px;height:29.6px;background:rgba(255,255,255,0.15);border-radius:5.6px;"></div>
<div style="left:-132.8px;top:524.04px;width:886.8px;height:163.6px;background:#ca63c9;border-radius:8.8px;"></div>
<div style="left:754px;top:524.04px;width:1032.4px;height:163.6px;background:#ca63c9;border-radius:8.8px;"></div>
<div style="left:751.2px;top:533.64px;width:5.6px;height:144.4px;background:#ca63c9;"></div>
<div style="left:1786.4px;top:524.04px;width:1200.8px;height:163.6px;background:#ca63c9;border-radius:8.8px;"></div>
<div style="left:1783.6px;top:533.64px;width:5.6px;height:144.4px;background:#ca63c9;"></div>
<svg style="left:0;top:0" width="2660" height="1284" viewBox="0 0 665 321"><path d="M-0.2 144.6L0.3 143.9L0.8 143.7L1.3 143.9L1.8 143.9L2.3 143.4L2.8 143.1L3.3 143.5L3.8 144.2L4.3 144.4L4.8 144.1L5.3 144.0L5.8 144.4L6.3 144.5L6.8 144.0L7.3 143.3L7.8 143.2L8.3 143.6L8.8 143.9L9.3 143.7L9.8 143.6L10.3 144.1L10.8 144.7L11.3 144.7L11.8 144.0L12.3 143.6L12.8 143.8L13.3 143.9L13.8 143.5L14.3 143.1L14.8 145.0L15.3 147.1L15.8 148.7L16.3 150.1L16.8 151.2L17.3 151.2L17.8 151.2L18.3 151.2L18.8 151.2L19.3 151.2L19.8 151.2L20.3 151.2L20.8 151.2L21.3 151.2L21.8 151.2L22.3 151.2L22.8 151.2L23.3 151.2L23.8 151.2L24.3 151.2L24.8 151.2L25.3 151.2L25.8 151.2L26.3 151.2L26.8 151.2L27.3 151.2L27.8 151.2L28.3 151.2L28.8 151.2L29.3 151.2L29.8 150.0L30.3 148.4L30.8 146.9L31.3 146.4L31.8 147.2L32.3 148.1L32.8 148.9L33.3 149.7L33.8 150.4L34.3 151.1L34.8 151.2L35.3 151.2L35.8 151.2L36.3 151.2L36.8 151.2L37.3 151.2L37.8 151.2L38.3 151.2L38.8 151.2L39.3 150.0L39.8 148.8L40.3 147.6L40.8 147.5L41.3 148.2L41.8 148.9L42.3 149.5L42.8 150.1L43.3 150.7L43.8 151.2L44.3 151.2L44.8 151.2L45.3 151.2L45.8 151.2L46.3 150.6L46.8 149.6L47.3 148.7L47.8 148.4L48.3 148.9L48.8 149.4L49.3 149.9L49.8 150.4L50.3 150.8L50.8 151.2L51.3 151.2L51.8 151.2L52.3 151.2L52.8 151.2L53.3 151.2L53.8 150.9L54.3 150.1L54.8 149.3L55.3 148.8L55.8 149.3L56.3 149.7L56.8 150.1L57.3 150.5L57.8 150.9L58.3 151.2L58.8 151.2L59.3 151.2L59.8 151.2L60.3 151.2L60.8 151.2L61.3 148.8L61.8 146.4L62.3 144.2L62.8 142.0L63.3 139.7L63.8 140.6L64.3 141.4L64.8 142.1L65.3 142.7L65.8 143.1L66.3 143.5L66.8 143.7L67.3 143.9L67.8 144.0L68.3 144.2L68.8 144.3L69.3 144.4L69.8 144.6L70.3 144.9L70.8 145.2L71.3 145.5L71.8 145.8L72.3 146.1L72.8 146.3L73.3 146.5L73.8 146.6L74.3 146.7L74.8 146.8L75.3 146.9L75.8 147.0L76.3 147.2L76.8 147.5L77.3 147.8L77.8 148.1L78.3 148.5L78.8 148.9L79.3 149.3L79.8 149.7L80.3 150.0L80.8 150.2L81.3 150.4L81.8 150.6L82.3 150.9L82.8 151.1L83.3 151.2L83.8 151.2L84.3 151.2L84.8 151.2L85.3 151.2L85.8 151.2L86.3 151.2L86.8 151.2L87.3 151.2L87.8 151.2L88.3 150.6L88.8 149.8L89.3 149.1L89.8 149.0L90.3 149.5L90.8 149.9L91.3 150.3L91.8 150.7L92.3 151.0L92.8 151.2L93.3 151.2L93.8 151.2L94.3 151.2L94.8 151.2L95.3 150.0L95.8 148.4L96.3 146.9L96.8 146.4L97.3 147.2L97.8 148.1L98.3 148.9L98.8 149.7L99.3 150.4L99.8 151.1L100.3 151.2L100.8 151.2L101.3 151.2L101.8 151.2L102.3 151.2L102.8 150.0L103.3 148.8L103.8 147.6L104.3 147.5L104.8 148.2L105.3 148.9L105.8 149.5L106.3 150.1L106.8 150.7L107.3 151.2L107.8 151.2L108.3 151.2L108.8 151.2L109.3 151.2L109.8 151.2L110.3 151.2L110.8 151.2L111.3 151.2L111.8 151.2L112.3 150.2L112.8 148.7L113.3 147.4L113.8 146.9L114.3 147.6L114.8 148.4L115.3 149.1L115.8 149.8L116.3 150.5L116.8 151.1L117.3 151.2L117.8 151.2L118.3 151.2L118.8 151.2L119.3 149.3L119.8 147.4L120.3 145.6L120.8 145.5L121.3 146.6L121.8 147.6L122.3 148.5L122.8 149.5L123.3 150.3L123.8 151.1L124.3 151.2L124.8 151.2L125.3 151.2L125.8 143.1L126.3 141.9L126.8 143.1L127.3 143.8L127.8 143.6L128.3 143.5L128.8 144.1L129.3 144.7L129.8 144.7L130.3 144.1L130.8 143.7L131.3 143.9L131.8 144.0L132.3 143.5L132.8 143.1L133.3 143.3L133.8 144.1L134.3 144.4L134.8 144.2L135.3 144.0L135.8 144.3L136.3 144.5L136.8 144.2L137.3 143.4L137.8 143.1L138.3 143.5L138.8 143.9L139.3 143.8L139.8 143.6L140.3 144.0L140.8 144.7L141.3 144.7L141.8 144.2L142.3 143.6L142.8 143.7L143.3 143.9L143.8 143.6L144.3 143.2L144.8 144.6L145.3 146.7L145.8 148.4L146.3 149.8L146.8 151.2L147.3 151.2L147.8 151.2L148.3 151.2L148.8 151.2L149.3 151.2L149.8 151.2L150.3 151.2L150.8 151.2L151.3 151.2L151.8 150.4L152.3 149.5L152.8 148.6L153.3 148.5L153.8 149.0L154.3 149.5L154.8 150.0L155.3 150.5L155.8 150.9L156.3 151.2L156.8 151.2L157.3 151.2L157.8 151.2L158.3 151.2L158.8 151.2L159.3 151.2L159.8 151.2L160.3 151.2L160.8 149.8L161.3 148.5L161.8 147.3L162.3 147.7L162.8 148.3L163.3 149.0L163.8 149.7L164.3 150.3L164.8 150.8L165.3 151.2L165.8 151.2L166.3 151.2L166.8 151.2L167.3 151.2L167.8 151.2L168.3 149.7L168.8 148.1L169.3 146.6L169.8 146.5L170.3 147.4L170.8 148.2L171.3 149.0L171.8 149.8L172.3 150.5L172.8 151.2L173.3 151.2L173.8 151.2L174.3 151.2L174.8 151.2L175.3 151.2L175.8 151.2L176.3 149.7L176.8 147.8L177.3 146.0L177.8 145.3L178.3 146.4L178.8 147.4L179.3 148.3L179.8 149.3L180.3 150.2L180.8 151.0L181.3 151.2L181.8 151.2L182.3 151.2L182.8 151.2L183.3 151.2L183.8 151.2L184.3 151.2L184.8 151.2L185.3 151.2L185.8 151.2L186.3 151.2L186.8 151.2L187.3 151.2L187.8 151.2L187.8 151.9L187.3 151.9L186.8 151.9L186.3 151.9L185.8 151.9L185.3 151.9L184.8 151.9L184.3 151.9L183.8 151.9L183.3 151.9L182.8 151.9L182.3 151.9L181.8 151.9L181.3 151.9L180.8 152.0L180.3 152.9L179.8 153.7L179.3 154.7L178.8 155.7L178.3 156.7L177.8 157.7L177.3 157.1L176.8 155.2L176.3 153.3L175.8 151.9L175.3 151.9L174.8 151.9L174.3 151.9L173.8 151.9L173.3 151.9L172.8 151.9L172.3 152.5L171.8 153.2L171.3 154.0L170.8 154.8L170.3 155.6L169.8 156.5L169.3 156.4L168.8 154.9L168.3 153.3L167.8 151.9L167.3 151.9L166.8 151.9L166.3 151.9L165.8 151.9L165.3 151.9L164.8 152.2L164.3 152.8L163.8 153.4L163.3 154.0L162.8 154.7L162.3 155.4L161.8 155.7L161.3 154.5L160.8 153.2L160.3 151.9L159.8 151.9L159.3 151.9L158.8 151.9L158.3 151.9L157.8 151.9L157.3 151.9L156.8 151.9L156.3 151.9L155.8 152.1L155.3 152.5L154.8 153.0L154.3 153.5L153.8 154.0L153.3 154.5L152.8 154.5L152.3 153.6L151.8 152.6L151.3 151.9L150.8 151.9L150.3 151.9L149.8 151.9L149.3 151.9L148.8 151.9L148.3 151.9L147.8 151.9L147.3 151.9L146.8 151.9L146.3 153.2L145.8 154.6L145.3 156.3L144.8 158.4L144.3 159.9L143.8 159.4L143.3 159.1L142.8 159.3L142.3 159.4L141.8 158.9L141.3 158.3L140.8 158.4L140.3 159.0L139.8 159.4L139.3 159.2L138.8 159.1L138.3 159.5L137.8 159.9L137.3 159.6L136.8 158.9L136.3 158.5L135.8 158.7L135.3 159.0L134.8 158.8L134.3 158.6L133.8 158.9L133.3 159.7L132.8 160.0L132.3 159.5L131.8 159.1L131.3 159.1L130.8 159.3L130.3 159.0L129.8 158.4L129.3 158.3L128.8 158.9L128.3 159.5L127.8 159.4L127.3 159.2L126.8 159.9L126.3 161.1L125.8 159.9L125.3 151.9L124.8 151.9L124.3 151.9L123.8 151.9L123.3 152.7L122.8 153.6L122.3 154.5L121.8 155.5L121.3 156.5L120.8 157.5L120.3 157.4L119.8 155.6L119.3 153.7L118.8 151.9L118.3 151.9L117.8 151.9L117.3 151.9L116.8 151.9L116.3 152.5L115.8 153.2L115.3 153.9L114.8 154.6L114.3 155.4L113.8 156.1L113.3 155.7L112.8 154.3L112.3 152.9L111.8 151.9L111.3 151.9L110.8 151.9L110.3 151.9L109.8 151.9L109.3 151.9L108.8 151.9L108.3 151.9L107.8 151.9L107.3 151.9L106.8 152.3L106.3 152.9L105.8 153.5L105.3 154.1L104.8 154.8L104.3 155.5L103.8 155.4L103.3 154.2L102.8 153.0L102.3 151.9L101.8 151.9L101.3 151.9L100.8 151.9L100.3 151.9L99.8 151.9L99.3 152.6L98.8 153.4L98.3 154.1L97.8 155.0L97.3 155.8L96.8 156.7L96.3 156.1L95.8 154.6L95.3 153.0L94.8 151.9L94.3 151.9L93.8 151.9L93.3 151.9L92.8 151.9L92.3 152.0L91.8 152.4L91.3 152.7L90.8 153.2L90.3 153.6L89.8 154.0L89.3 154.0L88.8 153.2L88.3 152.4L87.8 151.9L87.3 151.9L86.8 151.9L86.3 151.9L85.8 151.9L85.3 151.9L84.8 151.9L84.3 151.9L83.8 151.9L83.3 151.9L82.8 151.9L82.3 152.2L81.8 152.4L81.3 152.6L80.8 152.8L80.3 153.0L79.8 153.3L79.3 153.7L78.8 154.1L78.3 154.5L77.8 154.9L77.3 155.3L76.8 155.6L76.3 155.8L75.8 156.0L75.3 156.1L74.8 156.2L74.3 156.3L73.8 156.4L73.3 156.5L72.8 156.7L72.3 157.0L71.8 157.2L71.3 157.6L70.8 157.9L70.3 158.2L69.8 158.4L69.3 158.6L68.8 158.8L68.3 158.9L67.8 159.0L67.3 159.1L66.8 159.3L66.3 159.5L65.8 159.9L65.3 160.4L64.8 161.0L64.3 161.7L63.8 162.5L63.3 163.3L62.8 161.0L62.3 158.8L61.8 156.6L61.3 154.2L60.8 151.9L60.3 151.9L59.8 151.9L59.3 151.9L58.8 151.9L58.3 151.9L57.8 152.1L57.3 152.5L56.8 152.9L56.3 153.3L55.8 153.7L55.3 154.2L54.8 153.7L54.3 152.9L53.8 152.1L53.3 151.9L52.8 151.9L52.3 151.9L51.8 151.9L51.3 151.9L50.8 151.9L50.3 152.2L49.8 152.6L49.3 153.1L48.8 153.6L48.3 154.1L47.8 154.6L47.3 154.3L46.8 153.4L46.3 152.4L45.8 151.9L45.3 151.9L44.8 151.9L44.3 151.9L43.8 151.9L43.3 152.3L42.8 152.9L42.3 153.5L41.8 154.1L41.3 154.8L40.8 155.5L40.3 155.4L39.8 154.2L39.3 153.0L38.8 151.9L38.3 151.9L37.8 151.9L37.3 151.9L36.8 151.9L36.3 151.9L35.8 151.9L35.3 151.9L34.8 151.9L34.3 151.9L33.8 152.6L33.3 153.4L32.8 154.1L32.3 155.0L31.8 155.8L31.3 156.7L30.8 156.1L30.3 154.6L29.8 153.0L29.3 151.9L28.8 151.9L28.3 151.9L27.8 151.9L27.3 151.9L26.8 151.9L26.3 151.9L25.8 151.9L25.3 151.9L24.8 151.9L24.3 151.9L23.8 151.9L23.3 151.9L22.8 151.9L22.3 151.9L21.8 151.9L21.3 151.9L20.8 151.9L20.3 151.9L19.8 151.9L19.3 151.9L18.8 151.9L18.3 151.9L17.8 151.9L17.3 151.9L16.8 151.9L16.3 153.0L15.8 154.3L15.3 155.9L14.8 158.0L14.3 159.9L13.8 159.5L13.3 159.1L12.8 159.3L12.3 159.4L11.8 159.0L11.3 158.4L10.8 158.3L10.3 158.9L9.8 159.4L9.3 159.3L8.8 159.1L8.3 159.4L7.8 159.9L7.3 159.7L6.8 159.0L6.3 158.5L5.8 158.7L5.3 159.0L4.8 158.9L4.3 158.6L3.8 158.8L3.3 159.6L2.8 160.0L2.3 159.6L1.8 159.1L1.3 159.1L0.8 159.3L0.3 159.1L-0.2 158.5Z" fill="#853f82"/></svg>
<svg style="left:0;top:0" width="2660" height="1284" viewBox="0 0 665 321"><path d="M188.7 141.2L189.2 139.6L189.7 138.0L190.2 139.6L190.7 141.2L191.2 142.8L191.7 143.8L192.2 144.5L192.7 144.8L193.2 144.3L193.7 143.8L194.2 143.8L194.7 144.0L195.2 143.7L195.7 143.2L196.2 143.1L196.7 143.8L197.2 144.4L197.7 144.3L198.2 144.0L198.7 144.1L199.2 144.5L199.7 144.4L200.2 143.7L200.7 143.1L201.2 143.3L201.7 143.8L202.2 143.9L202.7 143.6L203.2 143.8L203.7 144.4L204.2 144.8L204.7 144.4L205.2 143.8L205.7 143.6L206.2 143.9L206.7 143.8L207.2 143.3L207.7 143.8L208.2 145.9L208.7 147.8L209.2 149.3L209.7 150.6L210.2 151.2L210.7 151.2L211.2 151.2L211.7 151.2L212.2 151.2L212.7 151.2L213.2 151.2L213.7 151.2L214.2 151.2L214.7 151.2L215.2 151.2L215.7 151.0L216.2 150.0L216.7 149.1L217.2 148.2L217.7 148.7L218.2 149.2L218.7 149.7L219.2 150.2L219.7 150.7L220.2 151.1L220.7 151.2L221.2 151.2L221.7 151.2L222.2 151.2L222.7 151.2L223.2 151.2L223.7 151.2L224.2 151.2L224.7 151.2L225.2 150.4L225.7 148.7L226.2 147.2L226.7 146.2L227.2 147.1L227.7 147.9L228.2 148.7L228.7 149.5L229.2 150.2L229.7 150.9L230.2 151.2L230.7 151.2L231.2 151.2L231.7 151.2L232.2 151.2L232.7 151.2L233.2 150.8L233.7 149.3L234.2 147.9L234.7 146.6L235.2 147.3L235.7 148.1L236.2 148.8L236.7 149.6L237.2 150.2L237.7 150.9L238.2 151.2L238.7 151.2L239.2 151.2L239.7 151.2L240.2 151.2L240.7 151.2L241.2 151.2L241.7 151.2L242.2 150.2L242.7 148.4L243.2 146.8L243.7 145.7L244.2 146.6L244.7 147.5L245.2 148.4L245.7 149.3L246.2 150.1L246.7 150.9L247.2 151.2L247.7 151.2L248.2 151.2L248.7 151.2L249.2 151.2L249.7 151.2L250.2 151.2L250.7 151.2L251.2 151.2L251.7 151.2L252.2 151.2L252.7 151.2L253.2 151.2L253.7 142.0L254.2 140.9L254.7 140.2L255.2 141.3L255.7 142.4L256.2 143.5L256.7 143.7L257.2 144.4L257.7 144.8L258.2 144.4L258.7 143.8L259.2 143.7L259.7 144.0L260.2 143.8L260.7 143.3L261.2 143.1L261.7 143.6L262.2 144.3L262.7 144.4L263.2 144.1L263.7 144.1L264.2 144.4L264.7 144.5L265.2 143.9L265.7 143.2L266.2 143.2L266.7 143.7L267.2 143.9L267.7 143.7L268.2 143.7L268.7 144.3L269.2 144.8L269.7 144.6L270.2 143.9L270.7 143.6L271.2 143.8L271.7 143.9L272.2 143.4L272.7 143.4L273.2 145.4L273.7 147.5L274.2 149.0L274.7 150.3L275.2 151.2L275.7 151.2L276.2 151.2L276.7 151.2L277.2 151.2L277.7 151.2L278.2 151.2L278.7 151.2L279.2 151.2L279.7 151.2L280.2 151.2L280.7 150.6L281.2 150.0L281.7 149.4L282.2 149.6L282.7 149.9L283.2 150.3L283.7 150.6L284.2 150.9L284.7 151.2L285.2 151.2L285.7 151.2L286.2 151.2L286.7 151.2L287.2 151.2L287.7 151.2L288.2 151.2L288.7 150.2L289.2 148.7L289.7 147.4L290.2 146.9L290.7 147.6L291.2 148.4L291.7 149.1L292.2 149.8L292.7 150.5L293.2 151.1L293.7 151.2L294.2 151.2L294.7 151.2L295.2 151.2L295.7 151.2L296.2 151.2L296.7 151.2L297.2 151.2L297.7 150.0L298.2 148.8L298.7 147.6L299.2 147.5L299.7 148.2L300.2 148.9L300.7 149.5L301.2 150.1L301.7 150.7L302.2 151.2L302.7 151.2L303.2 151.2L303.7 151.2L304.2 151.2L304.7 151.2L305.2 150.6L305.7 149.6L306.2 148.7L306.7 148.4L307.2 148.9L307.7 149.4L308.2 149.9L308.7 150.4L309.2 150.8L309.7 151.2L310.2 151.2L310.7 151.2L311.2 151.2L311.7 151.2L312.2 150.4L312.7 149.7L313.2 148.9L313.7 149.1L314.2 149.5L314.7 149.9L315.2 150.3L315.7 150.7L316.2 151.1L316.7 151.2L317.2 151.2L317.7 151.2L318.2 151.2L318.7 148.8L319.2 146.4L319.7 144.2L320.2 142.0L320.7 139.7L321.2 140.6L321.7 141.4L322.2 142.1L322.7 142.7L323.2 143.1L323.7 143.5L324.2 143.7L324.7 143.9L325.2 144.0L325.7 144.2L326.2 144.3L326.7 144.4L327.2 144.6L327.7 144.9L328.2 145.2L328.7 145.5L329.2 145.8L329.7 146.1L330.2 146.3L330.7 146.5L331.2 146.6L331.7 146.7L332.2 146.8L332.7 146.9L333.2 147.0L333.7 147.2L334.2 147.5L334.7 147.8L335.2 148.1L335.7 148.5L336.2 148.9L336.7 149.3L337.2 149.7L337.7 150.0L338.2 150.2L338.7 150.4L339.2 150.6L339.7 150.9L340.2 151.1L340.7 151.2L341.2 151.2L341.7 151.2L342.2 151.2L342.7 151.2L343.2 151.2L343.7 151.2L344.2 151.2L344.7 151.2L345.2 151.2L345.7 151.2L346.2 151.2L346.7 150.4L347.2 149.5L347.7 148.6L348.2 148.5L348.7 149.0L349.2 149.5L349.7 150.0L350.2 150.5L350.7 150.9L351.2 151.2L351.7 151.2L352.2 151.2L352.7 151.2L353.2 151.2L353.7 151.2L354.2 150.0L354.7 148.4L355.2 146.9L355.7 146.4L356.2 147.2L356.7 148.1L357.2 148.9L357.7 149.7L358.2 150.4L358.7 151.1L359.2 151.2L359.7 151.2L360.2 151.2L360.7 151.2L361.2 151.2L361.7 149.8L362.2 148.5L362.7 147.3L363.2 147.7L363.7 148.3L364.2 149.0L364.7 149.7L365.2 150.3L365.7 150.8L366.2 151.2L366.7 151.2L367.2 151.2L367.7 151.2L368.2 151.2L368.7 151.2L369.2 151.2L369.7 151.2L370.2 150.7L370.7 149.0L371.2 147.5L371.7 146.0L372.2 146.9L372.7 147.7L373.2 148.6L373.7 149.3L374.2 150.1L374.7 150.8L375.2 151.2L375.7 151.2L376.2 151.2L376.7 151.0L377.2 148.7L377.7 146.7L378.2 144.7L378.7 145.3L379.2 146.4L379.7 147.5L380.2 148.5L380.7 149.5L381.2 150.4L381.7 151.2L382.2 151.2L382.7 151.2L383.2 151.2L383.7 143.8L384.2 142.6L384.7 142.4L385.2 143.6L385.7 143.8L386.2 143.5L386.7 143.7L387.2 144.4L387.7 144.8L388.2 144.4L388.7 143.8L389.2 143.7L389.7 144.0L390.2 143.8L390.7 143.3L391.2 143.1L391.7 143.6L392.2 144.3L392.7 144.4L393.2 144.1L393.7 144.1L394.2 144.4L394.7 144.5L395.2 143.9L395.7 143.2L396.2 143.2L396.7 143.7L397.2 143.9L397.7 143.7L398.2 143.7L398.7 144.3L399.2 144.8L399.7 144.6L400.2 143.9L400.7 143.6L401.2 143.8L401.7 143.9L402.2 143.4L402.7 143.4L403.2 145.4L403.7 147.5L404.2 149.0L404.7 150.3L405.2 151.2L405.7 151.2L406.2 151.2L406.7 151.2L407.2 151.2L407.7 151.2L408.2 151.2L408.7 151.2L409.2 151.2L409.7 151.2L410.2 150.4L410.7 149.7L411.2 148.9L411.7 149.1L412.2 149.5L412.7 149.9L413.2 150.3L413.7 150.7L414.2 151.1L414.7 151.2L415.2 151.2L415.7 151.2L416.2 151.2L416.7 151.2L417.2 151.2L417.7 151.2L418.2 151.2L418.7 150.2L419.2 148.7L419.7 147.4L420.2 146.9L420.7 147.6L421.2 148.4L421.7 149.1L422.2 149.8L422.7 150.5L423.2 151.1L423.7 151.2L424.2 151.2L424.7 151.2L425.2 151.2L425.7 151.2L426.2 150.4L426.7 148.7L427.2 147.2L427.7 146.2L428.2 147.1L428.7 147.9L429.2 148.7L429.7 149.5L430.2 150.2L430.7 150.9L431.2 151.2L431.7 151.2L432.2 151.2L432.7 151.2L433.2 151.2L433.7 150.5L434.2 148.5L434.7 146.7L435.2 144.9L435.7 146.0L436.2 147.0L436.7 148.0L437.2 148.9L437.7 149.8L438.2 150.7L438.7 151.2L439.2 151.2L439.7 151.2L440.2 151.2L440.7 151.2L441.2 151.2L441.7 151.2L442.2 151.2L442.7 151.2L443.2 151.2L443.7 151.2L444.2 151.2L444.7 151.2L445.2 151.2L445.7 151.2L446.2 151.2L446.2 151.9L445.7 151.9L445.2 151.9L444.7 151.9L444.2 151.9L443.7 151.9L443.2 151.9L442.7 151.9L442.2 151.9L441.7 151.9L441.2 151.9L440.7 151.9L440.2 151.9L439.7 151.9L439.2 151.9L438.7 151.9L438.2 152.4L437.7 153.2L437.2 154.1L436.7 155.1L436.2 156.0L435.7 157.1L435.2 158.1L434.7 156.3L434.2 154.5L433.7 152.5L433.2 151.9L432.7 151.9L432.2 151.9L431.7 151.9L431.2 151.9L430.7 152.1L430.2 152.8L429.7 153.5L429.2 154.3L428.7 155.1L428.2 156.0L427.7 156.8L427.2 155.8L426.7 154.3L426.2 152.7L425.7 151.9L425.2 151.9L424.7 151.9L424.2 151.9L423.7 151.9L423.2 151.9L422.7 152.5L422.2 153.2L421.7 153.9L421.2 154.6L420.7 155.4L420.2 156.1L419.7 155.7L419.2 154.3L418.7 152.9L418.2 151.9L417.7 151.9L417.2 151.9L416.7 151.9L416.2 151.9L415.7 151.9L415.2 151.9L414.7 151.9L414.2 151.9L413.7 152.3L413.2 152.7L412.7 153.1L412.2 153.5L411.7 153.9L411.2 154.1L410.7 153.4L410.2 152.6L409.7 151.9L409.2 151.9L408.7 151.9L408.2 151.9L407.7 151.9L407.2 151.9L406.7 151.9L406.2 151.9L405.7 151.9L405.2 151.9L404.7 152.7L404.2 154.0L403.7 155.6L403.2 157.6L402.7 159.6L402.2 159.6L401.7 159.2L401.2 159.2L400.7 159.4L400.2 159.1L399.7 158.5L399.2 158.2L398.7 158.7L398.2 159.3L397.7 159.4L397.2 159.1L396.7 159.3L396.2 159.8L395.7 159.8L395.2 159.2L394.7 158.5L394.2 158.6L393.7 159.0L393.2 158.9L392.7 158.6L392.2 158.7L391.7 159.4L391.2 159.9L390.7 159.7L390.2 159.2L389.7 159.0L389.2 159.3L388.7 159.2L388.2 158.6L387.7 158.2L387.2 158.6L386.7 159.3L386.2 159.5L385.7 159.2L385.2 159.4L384.7 160.6L384.2 160.4L383.7 159.2L383.2 151.9L382.7 151.9L382.2 151.9L381.7 151.9L381.2 152.6L380.7 153.5L380.2 154.5L379.7 155.6L379.2 156.6L378.7 157.8L378.2 158.3L377.7 156.3L377.2 154.3L376.7 152.1L376.2 151.9L375.7 151.9L375.2 151.9L374.7 152.2L374.2 152.9L373.7 153.7L373.2 154.5L372.7 155.3L372.2 156.1L371.7 157.0L371.2 155.5L370.7 154.0L370.2 152.3L369.7 151.9L369.2 151.9L368.7 151.9L368.2 151.9L367.7 151.9L367.2 151.9L366.7 151.9L366.2 151.9L365.7 152.2L365.2 152.8L364.7 153.4L364.2 154.0L363.7 154.7L363.2 155.4L362.7 155.7L362.2 154.5L361.7 153.2L361.2 151.9L360.7 151.9L360.2 151.9L359.7 151.9L359.2 151.9L358.7 151.9L358.2 152.6L357.7 153.4L357.2 154.1L356.7 155.0L356.2 155.8L355.7 156.7L355.2 156.1L354.7 154.6L354.2 153.0L353.7 151.9L353.2 151.9L352.7 151.9L352.2 151.9L351.7 151.9L351.2 151.9L350.7 152.1L350.2 152.5L349.7 153.0L349.2 153.5L348.7 154.0L348.2 154.5L347.7 154.5L347.2 153.6L346.7 152.6L346.2 151.9L345.7 151.9L345.2 151.9L344.7 151.9L344.2 151.9L343.7 151.9L343.2 151.9L342.7 151.9L342.2 151.9L341.7 151.9L341.2 151.9L340.7 151.9L340.2 151.9L339.7 152.2L339.2 152.4L338.7 152.6L338.2 152.8L337.7 153.0L337.2 153.3L336.7 153.7L336.2 154.1L335.7 154.5L335.2 154.9L334.7 155.3L334.2 155.6L333.7 155.8L333.2 156.0L332.7 156.1L332.2 156.2L331.7 156.3L331.2 156.4L330.7 156.5L330.2 156.7L329.7 157.0L329.2 157.2L328.7 157.6L328.2 157.9L327.7 158.2L327.2 158.4L326.7 158.6L326.2 158.8L325.7 158.9L325.2 159.0L324.7 159.1L324.2 159.3L323.7 159.5L323.2 159.9L322.7 160.4L322.2 161.0L321.7 161.7L321.2 162.5L320.7 163.3L320.2 161.0L319.7 158.8L319.2 156.6L318.7 154.2L318.2 151.9L317.7 151.9L317.2 151.9L316.7 151.9L316.2 151.9L315.7 152.3L315.2 152.7L314.7 153.1L314.2 153.5L313.7 153.9L313.2 154.1L312.7 153.4L312.2 152.6L311.7 151.9L311.2 151.9L310.7 151.9L310.2 151.9L309.7 151.9L309.2 152.2L308.7 152.6L308.2 153.1L307.7 153.6L307.2 154.1L306.7 154.6L306.2 154.3L305.7 153.4L305.2 152.4L304.7 151.9L304.2 151.9L303.7 151.9L303.2 151.9L302.7 151.9L302.2 151.9L301.7 152.3L301.2 152.9L300.7 153.5L300.2 154.1L299.7 154.8L299.2 155.5L298.7 155.4L298.2 154.2L297.7 153.0L297.2 151.9L296.7 151.9L296.2 151.9L295.7 151.9L295.2 151.9L294.7 151.9L294.2 151.9L293.7 151.9L293.2 151.9L292.7 152.5L292.2 153.2L291.7 153.9L291.2 154.6L290.7 155.4L290.2 156.1L289.7 155.7L289.2 154.3L288.7 152.9L288.2 151.9L287.7 151.9L287.2 151.9L286.7 151.9L286.2 151.9L285.7 151.9L285.2 151.9L284.7 151.9L284.2 152.1L283.7 152.4L283.2 152.8L282.7 153.1L282.2 153.4L281.7 153.6L281.2 153.0L280.7 152.4L280.2 151.9L279.7 151.9L279.2 151.9L278.7 151.9L278.2 151.9L277.7 151.9L277.2 151.9L276.7 151.9L276.2 151.9L275.7 151.9L275.2 151.9L274.7 152.7L274.2 154.0L273.7 155.6L273.2 157.6L272.7 159.6L272.2 159.6L271.7 159.2L271.2 159.2L270.7 159.4L270.2 159.1L269.7 158.5L269.2 158.2L268.7 158.7L268.2 159.3L267.7 159.4L267.2 159.1L266.7 159.3L266.2 159.8L265.7 159.8L265.2 159.2L264.7 158.5L264.2 158.6L263.7 159.0L263.2 158.9L262.7 158.6L262.2 158.7L261.7 159.4L261.2 159.9L260.7 159.7L260.2 159.2L259.7 159.0L259.2 159.3L258.7 159.2L258.2 158.6L257.7 158.2L257.2 158.6L256.7 159.3L256.2 159.5L255.7 160.6L255.2 161.7L254.7 162.8L254.2 162.1L253.7 161.0L253.2 151.9L252.7 151.9L252.2 151.9L251.7 151.9L251.2 151.9L250.7 151.9L250.2 151.9L249.7 151.9L249.2 151.9L248.7 151.9L248.2 151.9L247.7 151.9L247.2 151.9L246.7 152.1L246.2 152.9L245.7 153.7L245.2 154.6L244.7 155.5L244.2 156.4L243.7 157.4L243.2 156.3L242.7 154.6L242.2 152.8L241.7 151.9L241.2 151.9L240.7 151.9L240.2 151.9L239.7 151.9L239.2 151.9L238.7 151.9L238.2 151.9L237.7 152.1L237.2 152.8L236.7 153.5L236.2 154.2L235.7 154.9L235.2 155.7L234.7 156.5L234.2 155.1L233.7 153.7L233.2 152.2L232.7 151.9L232.2 151.9L231.7 151.9L231.2 151.9L230.7 151.9L230.2 151.9L229.7 152.1L229.2 152.8L228.7 153.5L228.2 154.3L227.7 155.1L227.2 156.0L226.7 156.8L226.2 155.8L225.7 154.3L225.2 152.7L224.7 151.9L224.2 151.9L223.7 151.9L223.2 151.9L222.7 151.9L222.2 151.9L221.7 151.9L221.2 151.9L220.7 151.9L220.2 151.9L219.7 152.4L219.2 152.8L218.7 153.3L218.2 153.8L217.7 154.3L217.2 154.8L216.7 153.9L216.2 153.0L215.7 152.0L215.2 151.9L214.7 151.9L214.2 151.9L213.7 151.9L213.2 151.9L212.7 151.9L212.2 151.9L211.7 151.9L211.2 151.9L210.7 151.9L210.2 151.9L209.7 152.4L209.2 153.8L208.7 155.2L208.2 157.2L207.7 159.2L207.2 159.7L206.7 159.2L206.2 159.2L205.7 159.4L205.2 159.2L204.7 158.6L204.2 158.2L203.7 158.6L203.2 159.3L202.7 159.4L202.2 159.1L201.7 159.2L201.2 159.7L200.7 159.9L200.2 159.3L199.7 158.6L199.2 158.5L198.7 158.9L198.2 159.0L197.7 158.7L197.2 158.6L196.7 159.2L196.2 159.9L195.7 159.8L195.2 159.3L194.7 159.0L194.2 159.2L193.7 159.2L193.2 158.7L192.7 158.2L192.2 158.5L191.7 159.2L191.2 160.2L190.7 161.8L190.2 163.4L189.7 165.0L189.2 163.4L188.7 161.8Z" fill="#853f82"/></svg>
<svg style="left:0;top:0" width="2660" height="1284" viewBox="0 0 665 321"><path d="M446.8 141.2L447.3 139.6L447.8 138.0L448.3 139.6L448.8 141.2L449.3 142.8L449.8 143.8L450.3 144.5L450.8 144.8L451.3 144.3L451.8 143.8L452.3 143.8L452.8 144.0L453.3 143.7L453.8 143.2L454.3 143.1L454.8 143.8L455.3 144.4L455.8 144.3L456.3 144.0L456.8 144.1L457.3 144.5L457.8 144.4L458.3 143.7L458.8 143.1L459.3 143.3L459.8 143.8L460.3 143.9L460.8 143.6L461.3 143.8L461.8 144.4L462.3 144.8L462.8 144.4L463.3 143.8L463.8 143.6L464.3 143.9L464.8 143.8L465.3 143.3L465.8 143.8L466.3 145.9L466.8 147.8L467.3 149.3L467.8 150.6L468.3 151.2L468.8 151.2L469.3 151.2L469.8 151.2L470.3 151.2L470.8 151.2L471.3 151.2L471.8 151.2L472.3 151.2L472.8 151.2L473.3 151.2L473.8 151.2L474.3 151.2L474.8 150.4L475.3 149.5L475.8 148.6L476.3 148.5L476.8 149.0L477.3 149.5L477.8 150.0L478.3 150.5L478.8 150.9L479.3 151.2L479.8 151.2L480.3 151.2L480.8 151.2L481.3 151.2L481.8 151.2L482.3 151.2L482.8 151.2L483.3 151.1L483.8 149.4L484.3 147.8L484.8 146.3L485.3 146.7L485.8 147.6L486.3 148.4L486.8 149.2L487.3 150.0L487.8 150.7L488.3 151.2L488.8 151.2L489.3 151.2L489.8 151.2L490.3 151.2L490.8 151.2L491.3 151.2L491.8 150.9L492.3 149.5L492.8 148.3L493.3 147.1L493.8 147.8L494.3 148.5L494.8 149.1L495.3 149.8L495.8 150.4L496.3 150.9L496.8 151.2L497.3 151.2L497.8 151.2L498.3 151.2L498.8 151.2L499.3 151.0L499.8 148.9L500.3 147.0L500.8 145.3L501.3 145.7L501.8 146.8L502.3 147.8L502.8 148.7L503.3 149.6L503.8 150.5L504.3 151.2L504.8 151.2L505.3 151.2L505.8 151.2L506.3 151.2L506.8 151.2L507.3 151.2L507.8 151.2L508.3 151.2L508.8 151.2L509.3 151.2L509.8 151.2L510.3 151.2L510.8 151.2L511.3 148.8L511.8 146.4L512.3 144.2L512.8 142.0L513.3 139.7L513.8 140.6L514.3 141.4L514.8 142.1L515.3 142.7L515.8 143.1L516.3 143.5L516.8 143.7L517.3 143.9L517.8 144.0L518.3 144.2L518.8 144.3L519.3 144.4L519.8 144.6L520.3 144.9L520.8 145.2L521.3 145.5L521.8 145.8L522.3 146.1L522.8 146.3L523.3 146.5L523.8 146.6L524.3 146.7L524.8 146.8L525.3 146.9L525.8 147.0L526.3 147.2L526.8 147.5L527.3 147.8L527.8 148.1L528.3 148.5L528.8 148.9L529.3 149.3L529.8 149.7L530.3 150.0L530.8 150.2L531.3 150.4L531.8 150.6L532.3 150.9L532.8 151.1L533.3 151.2L533.8 151.2L534.3 151.2L534.8 151.2L535.3 151.2L535.8 151.2L536.3 151.2L536.8 151.2L537.3 151.2L537.8 151.2L538.3 150.8L538.8 150.1L539.3 149.5L539.8 149.5L540.3 149.9L540.8 150.2L541.3 150.5L541.8 150.8L542.3 151.1L542.8 151.2L543.3 151.2L543.8 151.2L544.3 151.2L544.8 151.2L545.3 151.2L545.8 151.2L546.3 151.2L546.8 151.1L547.3 149.4L547.8 147.8L548.3 146.3L548.8 146.7L549.3 147.6L549.8 148.4L550.3 149.2L550.8 150.0L551.3 150.7L551.8 151.2L552.3 151.2L552.8 151.2L553.3 151.2L553.8 151.2L554.3 151.2L554.8 151.2L555.3 151.2L555.8 151.2L556.3 150.9L556.8 149.5L557.3 148.3L557.8 147.1L558.3 147.8L558.8 148.5L559.3 149.1L559.8 149.8L560.3 150.4L560.8 150.9L561.3 151.2L561.8 151.2L562.3 151.2L562.8 151.2L563.3 151.2L563.8 150.2L564.3 149.3L564.8 148.4L565.3 148.6L565.8 149.1L566.3 149.6L566.8 150.1L567.3 150.6L567.8 151.0L568.3 151.2L568.8 151.2L569.3 151.2L569.8 150.8L570.3 149.8L570.8 148.9L571.3 148.3L571.8 148.8L572.3 149.3L572.8 149.8L573.3 150.3L573.8 150.8L574.3 151.2L574.8 151.2L575.3 151.2L575.8 151.2L576.3 151.2L576.8 151.2L577.3 151.2L577.8 148.8L578.3 146.4L578.8 144.2L579.3 142.0L579.8 139.7L580.3 140.6L580.8 141.4L581.3 142.1L581.8 142.7L582.3 143.1L582.8 143.5L583.3 143.7L583.8 143.9L584.3 144.0L584.8 144.2L585.3 144.3L585.8 144.4L586.3 144.6L586.8 144.9L587.3 145.2L587.8 145.5L588.3 145.8L588.8 146.1L589.3 146.3L589.8 146.5L590.3 146.6L590.8 146.7L591.3 146.8L591.8 146.9L592.3 147.0L592.8 147.2L593.3 147.5L593.8 147.8L594.3 148.1L594.8 148.5L595.3 148.9L595.8 149.3L596.3 149.7L596.8 150.0L597.3 150.2L597.8 150.4L598.3 150.6L598.8 150.9L599.3 151.1L599.8 151.2L600.3 151.2L600.8 151.2L601.3 151.2L601.8 151.2L602.3 151.2L602.8 151.2L603.3 151.2L603.8 151.2L604.3 151.2L604.8 151.2L605.3 151.0L605.8 150.0L606.3 149.1L606.8 148.2L607.3 148.7L607.8 149.2L608.3 149.7L608.8 150.2L609.3 150.7L609.8 151.1L610.3 151.2L610.8 151.2L611.3 151.2L611.8 151.2L612.3 150.0L612.8 148.4L613.3 146.9L613.8 146.4L614.3 147.2L614.8 148.1L615.3 148.9L615.8 149.7L616.3 150.4L616.8 151.1L617.3 151.2L617.8 151.2L618.3 151.2L618.8 151.2L619.3 150.9L619.8 149.5L620.3 148.3L620.8 147.1L621.3 147.8L621.8 148.5L622.3 149.1L622.8 149.8L623.3 150.4L623.8 150.9L624.3 151.2L624.8 151.2L625.3 151.2L625.8 151.2L626.3 151.2L626.8 151.2L627.3 151.2L627.8 151.2L628.3 150.5L628.8 149.3L629.3 148.3L629.8 147.9L630.3 148.5L630.8 149.1L631.3 149.7L631.8 150.2L632.3 150.7L632.8 151.2L633.3 151.2L633.8 151.2L634.3 151.2L634.8 151.2L635.3 150.5L635.8 148.5L636.3 146.7L636.8 144.9L637.3 146.0L637.8 147.0L638.3 148.0L638.8 148.9L639.3 149.8L639.8 150.7L640.3 151.2L640.8 151.2L641.3 151.2L641.8 151.2L642.3 151.2L642.8 151.2L643.3 143.4L643.8 142.2L644.3 142.9L644.8 143.8L645.3 143.7L645.8 143.5L646.3 143.9L646.8 144.6L647.3 144.7L647.8 144.2L648.3 143.7L648.8 143.8L649.3 144.0L649.8 143.6L650.3 143.1L650.8 143.2L651.3 143.9L651.8 144.4L652.3 144.3L652.8 144.0L653.3 144.2L653.8 144.5L654.3 144.3L654.8 143.5L655.3 143.1L655.8 143.4L656.3 143.9L656.8 143.8L657.3 143.6L657.8 143.9L658.3 144.5L658.8 144.8L659.3 144.3L659.8 143.7L660.3 143.7L660.8 143.9L661.3 143.7L661.8 143.2L662.3 144.2L662.8 146.3L663.3 148.1L663.8 149.5L664.3 150.9L664.8 151.2L664.8 151.9L664.3 152.1L663.8 153.5L663.3 154.9L662.8 156.7L662.3 158.8L661.8 159.8L661.3 159.3L660.8 159.1L660.3 159.4L659.8 159.3L659.3 158.7L658.8 158.2L658.3 158.5L657.8 159.1L657.3 159.4L656.8 159.2L656.3 159.2L655.8 159.6L655.3 159.9L654.8 159.5L654.3 158.7L653.8 158.5L653.3 158.8L652.8 159.0L652.3 158.7L651.8 158.6L651.3 159.1L650.8 159.8L650.3 159.9L649.8 159.4L649.3 159.0L648.8 159.2L648.3 159.3L647.8 158.8L647.3 158.3L646.8 158.4L646.3 159.1L645.8 159.5L645.3 159.4L644.8 159.2L644.3 160.2L643.8 160.9L643.3 159.7L642.8 151.9L642.3 151.9L641.8 151.9L641.3 151.9L640.8 151.9L640.3 151.9L639.8 152.4L639.3 153.2L638.8 154.1L638.3 155.1L637.8 156.0L637.3 157.1L636.8 158.1L636.3 156.3L635.8 154.5L635.3 152.5L634.8 151.9L634.3 151.9L633.8 151.9L633.3 151.9L632.8 151.9L632.3 152.3L631.8 152.8L631.3 153.4L630.8 153.9L630.3 154.5L629.8 155.1L629.3 154.7L628.8 153.7L628.3 152.6L627.8 151.9L627.3 151.9L626.8 151.9L626.3 151.9L625.8 151.9L625.3 151.9L624.8 151.9L624.3 151.9L623.8 152.1L623.3 152.6L622.8 153.2L622.3 153.9L621.8 154.5L621.3 155.2L620.8 155.9L620.3 154.7L619.8 153.5L619.3 152.2L618.8 151.9L618.3 151.9L617.8 151.9L617.3 151.9L616.8 151.9L616.3 152.6L615.8 153.4L615.3 154.1L614.8 155.0L614.3 155.8L613.8 156.7L613.3 156.1L612.8 154.6L612.3 153.0L611.8 151.9L611.3 151.9L610.8 151.9L610.3 151.9L609.8 151.9L609.3 152.4L608.8 152.8L608.3 153.3L607.8 153.8L607.3 154.3L606.8 154.8L606.3 153.9L605.8 153.0L605.3 152.0L604.8 151.9L604.3 151.9L603.8 151.9L603.3 151.9L602.8 151.9L602.3 151.9L601.8 151.9L601.3 151.9L600.8 151.9L600.3 151.9L599.8 151.9L599.3 151.9L598.8 152.2L598.3 152.4L597.8 152.6L597.3 152.8L596.8 153.0L596.3 153.3L595.8 153.7L595.3 154.1L594.8 154.5L594.3 154.9L593.8 155.3L593.3 155.6L592.8 155.8L592.3 156.0L591.8 156.1L591.3 156.2L590.8 156.3L590.3 156.4L589.8 156.5L589.3 156.7L588.8 157.0L588.3 157.2L587.8 157.6L587.3 157.9L586.8 158.2L586.3 158.4L585.8 158.6L585.3 158.8L584.8 158.9L584.3 159.0L583.8 159.1L583.3 159.3L582.8 159.5L582.3 159.9L581.8 160.4L581.3 161.0L580.8 161.7L580.3 162.5L579.8 163.3L579.3 161.0L578.8 158.8L578.3 156.6L577.8 154.2L577.3 151.9L576.8 151.9L576.3 151.9L575.8 151.9L575.3 151.9L574.8 151.9L574.3 151.9L573.8 152.3L573.3 152.7L572.8 153.2L572.3 153.7L571.8 154.2L571.3 154.7L570.8 154.1L570.3 153.2L569.8 152.2L569.3 151.9L568.8 151.9L568.3 151.9L567.8 152.0L567.3 152.4L566.8 152.9L566.3 153.4L565.8 153.9L565.3 154.4L564.8 154.6L564.3 153.7L563.8 152.8L563.3 151.9L562.8 151.9L562.3 151.9L561.8 151.9L561.3 151.9L560.8 152.1L560.3 152.6L559.8 153.2L559.3 153.9L558.8 154.5L558.3 155.2L557.8 155.9L557.3 154.7L556.8 153.5L556.3 152.2L555.8 151.9L555.3 151.9L554.8 151.9L554.3 151.9L553.8 151.9L553.3 151.9L552.8 151.9L552.3 151.9L551.8 151.9L551.3 152.3L550.8 153.1L550.3 153.8L549.8 154.6L549.3 155.5L548.8 156.3L548.3 156.7L547.8 155.2L547.3 153.7L546.8 151.9L546.3 151.9L545.8 151.9L545.3 151.9L544.8 151.9L544.3 151.9L543.8 151.9L543.3 151.9L542.8 151.9L542.3 151.9L541.8 152.2L541.3 152.5L540.8 152.8L540.3 153.2L539.8 153.5L539.3 153.5L538.8 152.9L538.3 152.2L537.8 151.9L537.3 151.9L536.8 151.9L536.3 151.9L535.8 151.9L535.3 151.9L534.8 151.9L534.3 151.9L533.8 151.9L533.3 151.9L532.8 151.9L532.3 152.2L531.8 152.4L531.3 152.6L530.8 152.8L530.3 153.0L529.8 153.3L529.3 153.7L528.8 154.1L528.3 154.5L527.8 154.9L527.3 155.3L526.8 155.6L526.3 155.8L525.8 156.0L525.3 156.1L524.8 156.2L524.3 156.3L523.8 156.4L523.3 156.5L522.8 156.7L522.3 157.0L521.8 157.2L521.3 157.6L520.8 157.9L520.3 158.2L519.8 158.4L519.3 158.6L518.8 158.8L518.3 158.9L517.8 159.0L517.3 159.1L516.8 159.3L516.3 159.5L515.8 159.9L515.3 160.4L514.8 161.0L514.3 161.7L513.8 162.5L513.3 163.3L512.8 161.0L512.3 158.8L511.8 156.6L511.3 154.2L510.8 151.9L510.3 151.9L509.8 151.9L509.3 151.9L508.8 151.9L508.3 151.9L507.8 151.9L507.3 151.9L506.8 151.9L506.3 151.9L505.8 151.9L505.3 151.9L504.8 151.9L504.3 151.9L503.8 152.5L503.3 153.4L502.8 154.3L502.3 155.3L501.8 156.3L501.3 157.3L500.8 157.8L500.3 156.0L499.8 154.1L499.3 152.0L498.8 151.9L498.3 151.9L497.8 151.9L497.3 151.9L496.8 151.9L496.3 152.1L495.8 152.6L495.3 153.2L494.8 153.9L494.3 154.5L493.8 155.2L493.3 155.9L492.8 154.7L492.3 153.5L491.8 152.2L491.3 151.9L490.8 151.9L490.3 151.9L489.8 151.9L489.3 151.9L488.8 151.9L488.3 151.9L487.8 152.3L487.3 153.1L486.8 153.8L486.3 154.6L485.8 155.5L485.3 156.3L484.8 156.7L484.3 155.2L483.8 153.7L483.3 151.9L482.8 151.9L482.3 151.9L481.8 151.9L481.3 151.9L480.8 151.9L480.3 151.9L479.8 151.9L479.3 151.9L478.8 152.1L478.3 152.5L477.8 153.0L477.3 153.5L476.8 154.0L476.3 154.5L475.8 154.5L475.3 153.6L474.8 152.6L474.3 151.9L473.8 151.9L473.3 151.9L472.8 151.9L472.3 151.9L471.8 151.9L471.3 151.9L470.8 151.9L470.3 151.9L469.8 151.9L469.3 151.9L468.8 151.9L468.3 151.9L467.8 152.4L467.3 153.8L466.8 155.2L466.3 157.2L465.8 159.2L465.3 159.7L464.8 159.2L464.3 159.2L463.8 159.4L463.3 159.2L462.8 158.6L462.3 158.2L461.8 158.6L461.3 159.3L460.8 159.4L460.3 159.1L459.8 159.2L459.3 159.7L458.8 159.9L458.3 159.3L457.8 158.6L457.3 158.5L456.8 158.9L456.3 159.0L455.8 158.7L455.3 158.6L454.8 159.2L454.3 159.9L453.8 159.8L453.3 159.3L452.8 159.0L452.3 159.2L451.8 159.2L451.3 158.7L450.8 158.2L450.3 158.5L449.8 159.2L449.3 160.2L448.8 161.8L448.3 163.4L447.8 165.0L447.3 163.4L446.8 161.8Z" fill="#853f82"/></svg>
<div style="left:760.8px;top:534.04px;width:89.6px;height:32.4px;background:rgba(40,10,50,0.38);border-radius:5.6px;"></div>
<div style="left:1793.2px;top:534.04px;width:89.6px;height:32.4px;background:rgba(40,10,50,0.38);border-radius:5.6px;"></div>
<div style="left:-132.8px;top:698.32px;width:886.8px;height:163.6px;background:#a9cb5e;border-radius:8.8px;"></div>
<svg style="left:0;top:0" width="2660" height="1284" viewBox="0 0 665 321"><path d="M-0.2 190.7L0.3 190.7L0.8 190.8L1.3 191.0L1.8 191.1L2.3 191.1L2.8 191.2L3.3 191.3L3.8 191.5L4.3 191.5L4.8 191.5L5.3 191.3L5.8 191.3L6.3 191.4L6.8 191.4L7.3 192.9L7.8 193.7L8.3 190.7L8.8 190.9L9.3 191.1L9.8 191.2L10.3 191.1L10.8 191.1L11.3 191.1L11.8 191.1L12.3 191.2L12.8 191.2L13.3 191.2L13.8 191.2L14.3 191.4L14.8 193.0L15.3 193.9L15.8 190.6L16.3 190.6L16.8 190.7L17.3 190.8L17.8 190.9L18.3 191.0L18.8 191.0L19.3 191.0L19.8 191.2L20.3 191.4L20.8 191.5L21.3 192.9L21.8 193.9L22.3 191.4L22.8 191.9L23.3 192.3L23.8 192.6L24.3 192.8L24.8 193.0L25.3 193.4L25.8 193.7L26.3 193.9L26.8 193.9L27.3 194.4L27.8 194.7L28.3 194.7L28.8 194.7L29.3 194.7L29.8 194.7L30.3 194.7L30.8 194.7L31.3 194.7L31.8 194.7L32.3 194.7L32.8 194.7L33.3 194.7L33.8 194.7L34.3 194.7L34.8 194.7L35.3 194.7L35.8 194.7L36.3 194.7L36.8 194.7L37.3 190.8L37.8 189.1L38.3 189.1L38.8 189.1L39.3 189.2L39.8 189.2L40.3 189.1L40.8 189.0L41.3 189.0L41.8 189.2L42.3 189.3L42.8 189.4L43.3 189.4L43.8 189.4L44.3 189.4L44.8 189.5L45.3 189.4L45.8 189.3L46.3 189.2L46.8 191.5L47.3 194.7L47.8 183.7L48.3 181.2L48.8 183.8L49.3 185.5L49.8 186.9L50.3 187.8L50.8 188.4L51.3 188.7L51.8 188.9L52.3 189.2L52.8 189.4L53.3 189.7L53.8 189.8L54.3 189.9L54.8 190.0L55.3 190.1L55.8 190.3L56.3 190.3L56.8 190.2L57.3 190.1L57.8 190.1L58.3 190.3L58.8 190.4L59.3 190.4L59.8 190.4L60.3 190.5L60.8 190.6L61.3 190.7L61.8 190.7L62.3 190.6L62.8 190.5L63.3 190.5L63.8 190.6L64.3 190.7L64.8 190.7L65.3 190.7L65.8 190.8L66.3 190.9L66.8 191.0L67.3 191.0L67.8 190.9L68.3 190.8L68.8 190.8L69.3 190.8L69.8 190.9L70.3 192.5L70.8 194.7L71.3 194.7L71.8 189.7L72.3 188.2L72.8 188.8L73.3 189.1L73.8 189.4L74.3 189.6L74.8 189.8L75.3 190.0L75.8 190.1L76.3 190.1L76.8 190.2L77.3 190.4L77.8 190.6L78.3 190.6L78.8 190.5L79.3 190.5L79.8 192.3L80.3 192.7L80.8 191.8L81.3 191.3L81.8 191.0L82.3 190.9L82.8 190.8L83.3 190.7L83.8 190.7L84.3 190.7L84.8 190.7L85.3 190.7L85.8 190.7L86.3 190.7L86.8 190.7L87.3 190.7L87.8 190.7L88.3 190.7L88.8 190.7L89.3 190.7L89.8 190.7L90.3 190.7L90.8 190.7L91.3 190.8L91.8 190.9L92.3 191.0L92.8 191.3L93.3 191.7L93.8 192.5L94.3 194.7L94.8 194.7L95.3 194.7L95.8 194.7L96.3 194.7L96.8 194.7L97.3 194.7L97.8 194.7L98.3 194.7L98.8 194.7L99.3 194.7L99.8 194.7L100.3 194.7L100.8 194.7L101.3 194.7L101.8 194.7L102.3 194.7L102.8 194.7L103.3 194.7L103.8 194.7L104.3 194.7L104.8 193.1L105.3 188.2L105.8 188.8L106.3 189.3L106.8 189.8L107.3 190.1L107.8 190.4L108.3 190.5L108.8 190.6L109.3 190.6L109.8 190.8L110.3 191.0L110.8 191.2L111.3 191.2L111.8 191.3L112.3 191.4L112.8 191.5L113.3 191.6L113.8 191.5L114.3 191.4L114.8 191.4L115.3 191.4L115.8 191.6L116.3 191.7L116.8 191.7L117.3 191.7L117.8 191.8L118.3 191.9L118.8 193.3L119.3 194.7L119.8 191.5L120.3 190.2L120.8 190.3L121.3 190.5L121.8 190.6L122.3 190.7L122.8 190.8L123.3 190.9L123.8 191.1L124.3 191.2L124.8 191.2L125.3 191.1L125.8 191.1L126.3 191.1L126.8 191.3L127.3 191.4L127.8 191.4L128.3 191.4L128.8 191.5L129.3 191.7L129.8 191.8L130.3 191.7L130.8 191.6L131.3 191.5L131.8 191.6L132.3 191.7L132.8 191.7L133.3 191.7L133.8 191.7L134.3 193.1L134.8 194.7L135.3 193.4L135.8 188.7L136.3 189.1L136.8 189.4L137.3 189.7L137.8 190.0L138.3 190.2L138.8 190.3L139.3 190.5L139.8 190.7L140.3 190.9L140.8 191.1L141.3 191.1L141.8 191.0L142.3 191.0L142.8 191.0L143.3 191.1L143.8 191.1L144.3 191.1L144.8 191.1L145.3 191.2L145.8 191.4L146.3 191.5L146.8 191.5L147.3 191.4L147.8 191.4L148.3 192.9L148.8 194.7L149.3 192.3L149.8 190.3L150.3 190.4L150.8 190.6L151.3 190.8L151.8 190.9L152.3 191.0L152.8 190.9L153.3 190.9L153.8 191.0L154.3 191.1L154.8 191.0L155.3 191.0L155.8 191.0L156.3 191.1L156.8 191.3L157.3 191.4L157.8 191.4L158.3 191.4L158.8 191.4L159.3 191.4L159.8 191.4L160.3 191.4L160.8 191.3L161.3 191.3L161.8 191.4L162.3 193.0L162.8 194.7L163.3 190.8L163.8 187.7L164.3 188.1L164.8 188.5L165.3 188.7L165.8 188.8L166.3 188.9L166.8 189.0L167.3 189.2L167.8 189.4L168.3 189.5L168.8 189.6L169.3 189.6L169.8 189.7L170.3 189.8L170.8 189.9L171.3 189.8L171.8 189.7L172.3 189.7L172.8 189.8L173.3 190.0L173.8 190.1L174.3 190.1L174.8 190.1L175.3 190.2L175.8 190.3L176.3 190.3L176.8 190.3L177.3 190.1L177.8 190.1L178.3 190.2L178.8 190.3L179.3 190.4L179.8 190.4L180.3 190.4L180.8 190.5L181.3 190.6L181.8 190.9L182.3 191.3L182.8 191.8L183.3 192.3L183.8 192.9L184.3 193.6L184.8 194.2L185.3 194.7L185.8 194.7L186.3 194.7L186.8 194.7L187.3 194.7L187.8 194.7L187.8 195.4L187.3 195.4L186.8 195.4L186.3 195.4L185.8 195.4L185.3 195.4L184.8 196.0L184.3 196.6L183.8 197.2L183.3 197.9L182.8 198.4L182.3 198.8L181.8 199.3L181.3 199.6L180.8 199.7L180.3 199.7L179.8 199.8L179.3 199.8L178.8 199.8L178.3 200.0L177.8 200.1L177.3 200.0L176.8 199.9L176.3 199.8L175.8 199.8L175.3 199.9L174.8 200.0L174.3 200.0L173.8 200.1L173.3 200.2L172.8 200.3L172.3 200.4L171.8 200.4L171.3 200.3L170.8 200.3L170.3 200.3L169.8 200.4L169.3 200.5L168.8 200.6L168.3 200.6L167.8 200.8L167.3 201.0L166.8 201.2L166.3 201.3L165.8 201.3L165.3 201.4L164.8 201.7L164.3 202.0L163.8 202.4L163.3 199.3L162.8 195.4L162.3 197.2L161.8 198.8L161.3 198.9L160.8 198.9L160.3 198.8L159.8 198.7L159.3 198.7L158.8 198.8L158.3 198.8L157.8 198.7L157.3 198.7L156.8 198.9L156.3 199.0L155.8 199.2L155.3 199.2L154.8 199.1L154.3 199.1L153.8 199.1L153.3 199.2L152.8 199.2L152.3 199.2L151.8 199.2L151.3 199.4L150.8 199.6L150.3 199.8L149.8 199.9L149.3 197.8L148.8 195.4L148.3 197.3L147.8 198.8L147.3 198.7L146.8 198.7L146.3 198.6L145.8 198.7L145.3 198.9L144.8 199.1L144.3 199.1L143.8 199.0L143.3 199.0L142.8 199.1L142.3 199.2L141.8 199.2L141.3 199.1L140.8 199.1L140.3 199.3L139.8 199.5L139.3 199.7L138.8 199.8L138.3 199.9L137.8 200.1L137.3 200.4L136.8 200.8L136.3 201.1L135.8 201.4L135.3 196.7L134.8 195.4L134.3 197.0L133.8 198.5L133.3 198.5L132.8 198.5L132.3 198.5L131.8 198.6L131.3 198.6L130.8 198.5L130.3 198.4L129.8 198.4L129.3 198.5L128.8 198.6L128.3 198.8L127.8 198.8L127.3 198.8L126.8 198.9L126.3 199.0L125.8 199.1L125.3 199.0L124.8 198.9L124.3 198.9L123.8 199.1L123.3 199.2L122.8 199.4L122.3 199.4L121.8 199.5L121.3 199.7L120.8 199.9L120.3 200.0L119.8 198.6L119.3 195.4L118.8 196.9L118.3 198.3L117.8 198.4L117.3 198.5L116.8 198.5L116.3 198.5L115.8 198.6L115.3 198.7L114.8 198.8L114.3 198.7L113.8 198.6L113.3 198.6L112.8 198.7L112.3 198.8L111.8 198.9L111.3 198.9L110.8 199.0L110.3 199.2L109.8 199.4L109.3 199.5L108.8 199.6L108.3 199.6L107.8 199.7L107.3 200.0L106.8 200.4L106.3 200.8L105.8 201.3L105.3 202.0L104.8 197.1L104.3 195.4L103.8 195.4L103.3 195.4L102.8 195.4L102.3 195.4L101.8 195.4L101.3 195.4L100.8 195.4L100.3 195.4L99.8 195.4L99.3 195.4L98.8 195.4L98.3 195.4L97.8 195.4L97.3 195.4L96.8 195.4L96.3 195.4L95.8 195.4L95.3 195.4L94.8 195.4L94.3 195.4L93.8 197.7L93.3 198.5L92.8 198.9L92.3 199.2L91.8 199.3L91.3 199.4L90.8 199.4L90.3 199.5L89.8 199.5L89.3 199.5L88.8 199.5L88.3 199.5L87.8 199.5L87.3 199.5L86.8 199.5L86.3 199.5L85.8 199.5L85.3 199.5L84.8 199.5L84.3 199.5L83.8 199.5L83.3 199.4L82.8 199.4L82.3 199.3L81.8 199.1L81.3 198.8L80.8 198.3L80.3 197.5L79.8 197.9L79.3 199.7L78.8 199.6L78.3 199.5L77.8 199.6L77.3 199.7L76.8 199.9L76.3 200.1L75.8 200.1L75.3 200.2L74.8 200.3L74.3 200.6L73.8 200.8L73.3 201.0L72.8 201.4L72.3 202.0L71.8 200.4L71.3 195.4L70.8 195.4L70.3 197.6L69.8 199.3L69.3 199.3L68.8 199.4L68.3 199.4L67.8 199.3L67.3 199.1L66.8 199.1L66.3 199.2L65.8 199.4L65.3 199.5L64.8 199.5L64.3 199.5L63.8 199.5L63.3 199.6L62.8 199.6L62.3 199.5L61.8 199.4L61.3 199.4L60.8 199.5L60.3 199.7L59.8 199.7L59.3 199.7L58.8 199.8L58.3 199.9L57.8 200.0L57.3 200.0L56.8 200.0L56.3 199.9L55.8 199.9L55.3 200.0L54.8 200.2L54.3 200.3L53.8 200.4L53.3 200.5L52.8 200.7L52.3 201.0L51.8 201.2L51.3 201.4L50.8 201.8L50.3 202.4L49.8 203.3L49.3 204.6L48.8 206.4L48.3 209.0L47.8 206.5L47.3 195.4L46.8 198.7L46.3 200.9L45.8 200.8L45.3 200.7L44.8 200.7L44.3 200.7L43.8 200.8L43.3 200.8L42.8 200.8L42.3 200.8L41.8 201.0L41.3 201.1L40.8 201.1L40.3 201.1L39.8 201.0L39.3 201.0L38.8 201.0L38.3 201.1L37.8 201.1L37.3 199.3L36.8 195.4L36.3 195.4L35.8 195.4L35.3 195.4L34.8 195.4L34.3 195.4L33.8 195.4L33.3 195.4L32.8 195.4L32.3 195.4L31.8 195.4L31.3 195.4L30.8 195.4L30.3 195.4L29.8 195.4L29.3 195.4L28.8 195.4L28.3 195.4L27.8 195.4L27.3 195.8L26.8 196.2L26.3 196.3L25.8 196.5L25.3 196.8L24.8 197.1L24.3 197.4L23.8 197.6L23.3 197.8L22.8 198.2L22.3 198.7L21.8 196.3L21.3 197.2L20.8 198.7L20.3 198.8L19.8 199.0L19.3 199.1L18.8 199.2L18.3 199.2L17.8 199.2L17.3 199.3L16.8 199.5L16.3 199.5L15.8 199.5L15.3 196.2L14.8 197.2L14.3 198.8L13.8 198.9L13.3 199.0L12.8 199.0L12.3 199.0L11.8 199.0L11.3 199.1L10.8 199.1L10.3 199.0L9.8 199.0L9.3 199.1L8.8 199.3L8.3 199.5L7.8 196.4L7.3 197.3L6.8 198.7L6.3 198.8L5.8 198.8L5.3 198.8L4.8 198.7L4.3 198.6L3.8 198.7L3.3 198.8L2.8 199.0L2.3 199.1L1.8 199.1L1.3 199.2L0.8 199.3L0.3 199.5L-0.2 199.5Z" fill="#748b3d"/></svg>
<div style="left:754px;top:698.32px;width:1031.6px;height:163.6px;background:#a9cb5e;border-radius:8.8px;"></div>
<div style="left:751.2px;top:707.92px;width:5.6px;height:144.4px;background:#a9cb5e;"></div>
<svg style="left:0;top:0" width="2660" height="1284" viewBox="0 0 665 321"><path d="M189.1 194.7L189.6 194.7L190.1 194.7L190.6 193.8L191.1 187.2L191.6 186.9L192.1 188.0L192.6 188.8L193.1 189.4L193.6 189.7L194.1 189.9L194.6 190.0L195.1 190.2L195.6 190.4L196.1 190.5L196.6 190.6L197.1 190.7L197.6 190.8L198.1 191.0L198.6 191.2L199.1 191.2L199.6 191.1L200.1 191.0L200.6 191.1L201.1 191.2L201.6 191.2L202.1 191.3L202.6 191.3L203.1 191.4L203.6 191.6L204.1 191.7L204.6 191.7L205.1 191.6L205.6 191.5L206.1 191.5L206.6 191.6L207.1 191.6L207.6 191.6L208.1 191.6L208.6 191.7L209.1 191.9L209.6 192.0L210.1 192.0L210.6 191.9L211.1 191.8L211.6 191.8L212.1 191.9L212.6 191.9L213.1 192.4L213.6 194.7L214.1 192.0L214.6 190.0L215.1 190.2L215.6 190.4L216.1 190.4L216.6 190.4L217.1 190.5L217.6 190.6L218.1 190.7L218.6 190.7L219.1 190.7L219.6 190.8L220.1 191.1L220.6 191.2L221.1 191.3L221.6 191.3L222.1 191.3L222.6 191.3L223.1 191.4L223.6 191.4L224.1 191.3L224.6 191.3L225.1 191.4L225.6 191.6L226.1 191.7L226.6 191.7L227.1 191.7L227.6 191.7L228.1 191.7L228.6 191.8L229.1 192.4L229.6 193.5L230.1 186.3L230.6 186.0L231.1 187.1L231.6 188.0L232.1 188.6L232.6 188.9L233.1 189.2L233.6 189.5L234.1 189.7L234.6 189.8L235.1 189.7L235.6 189.8L236.1 189.9L236.6 190.1L237.1 190.2L237.6 192.2L238.1 194.1L238.6 188.8L239.1 188.2L239.6 188.7L240.1 189.0L240.6 189.2L241.1 189.4L241.6 189.7L242.1 190.0L242.6 190.3L243.1 190.4L243.6 190.5L244.1 190.7L244.6 190.9L245.1 191.0L245.6 191.0L246.1 190.9L246.6 190.9L247.1 191.0L247.6 191.1L248.1 191.3L248.6 191.3L249.1 191.3L249.6 191.4L250.1 192.3L250.6 194.7L251.1 192.4L251.6 191.9L252.1 191.8L252.6 191.9L253.1 192.0L253.6 192.0L254.1 192.0L254.6 192.0L255.1 192.1L255.6 192.8L256.1 194.6L256.6 191.4L257.1 190.7L257.6 190.7L258.1 190.8L258.6 191.0L259.1 191.1L259.6 191.1L260.1 191.1L260.6 191.3L261.1 191.4L261.6 191.5L262.1 191.5L262.6 191.4L263.1 191.3L263.6 191.4L264.1 191.4L264.6 192.2L265.1 194.4L265.6 191.3L266.1 190.8L266.6 191.0L267.1 191.2L267.6 191.2L268.1 191.1L268.6 191.0L269.1 191.1L269.6 191.2L270.1 191.2L270.6 191.2L271.1 191.2L271.6 191.3L272.1 192.2L272.6 194.6L273.1 191.3L273.6 190.6L274.1 190.7L274.6 190.8L275.1 190.9L275.6 191.0L276.1 190.9L276.6 191.0L277.1 191.2L277.6 191.4L278.1 191.5L278.6 192.2L279.1 194.5L279.6 191.9L280.1 191.8L280.6 192.2L281.1 192.5L281.6 192.7L282.1 193.0L282.6 193.3L283.1 193.6L283.6 193.8L284.1 193.9L284.6 194.2L285.1 194.7L285.6 194.7L286.1 194.7L286.6 194.7L287.1 194.7L287.6 194.7L288.1 194.7L288.6 194.7L289.1 194.7L289.6 194.7L290.1 194.7L290.6 194.7L291.1 194.7L291.6 194.7L292.1 194.7L292.6 194.7L293.1 194.7L293.6 194.7L294.1 194.7L294.6 191.7L295.1 189.1L295.6 189.1L296.1 189.1L296.6 189.2L297.1 189.2L297.6 189.1L298.1 189.0L298.6 189.0L299.1 189.2L299.6 189.3L300.1 189.4L300.6 189.4L301.1 189.4L301.6 189.4L302.1 189.5L302.6 189.5L303.1 189.4L303.6 189.2L304.1 190.3L304.6 194.7L305.1 185.9L305.6 180.6L306.1 183.3L306.6 185.2L307.1 186.6L307.6 187.6L308.1 188.3L308.6 188.7L309.1 188.9L309.6 189.1L310.1 189.4L310.6 189.6L311.1 189.8L311.6 189.9L312.1 190.0L312.6 190.1L313.1 190.2L313.6 190.3L314.1 190.2L314.6 190.1L315.1 190.1L315.6 190.2L316.1 190.4L316.6 190.4L317.1 190.4L317.6 190.5L318.1 190.6L318.6 190.7L319.1 190.7L319.6 190.7L320.1 190.5L320.6 190.5L321.1 190.6L321.6 190.7L322.1 190.7L322.6 190.7L323.1 190.8L323.6 190.9L324.1 191.0L324.6 191.0L325.1 190.9L325.6 190.8L326.1 190.8L326.6 190.8L327.1 190.9L327.6 191.7L328.1 194.7L328.6 194.7L329.1 190.8L329.6 188.0L330.1 188.7L330.6 189.1L331.1 189.3L331.6 189.5L332.1 189.8L332.6 190.0L333.1 190.0L333.6 190.1L334.1 190.2L334.6 190.4L335.1 190.6L335.6 190.6L336.1 190.6L336.6 190.5L337.1 192.3L337.6 193.0L338.1 191.9L338.6 191.4L339.1 191.1L339.6 190.9L340.1 190.8L340.6 190.7L341.1 190.7L341.6 190.7L342.1 190.7L342.6 190.7L343.1 190.7L343.6 190.7L344.1 190.7L344.6 190.7L345.1 190.7L345.6 190.7L346.1 190.7L346.6 190.7L347.1 190.7L347.6 190.7L348.1 190.7L348.6 190.8L349.1 190.8L349.6 191.0L350.1 191.2L350.6 191.6L351.1 192.3L351.6 193.8L352.1 194.7L352.6 194.7L353.1 194.7L353.6 194.7L354.1 194.7L354.6 194.7L355.1 194.7L355.6 194.7L356.1 194.7L356.6 194.7L357.1 194.7L357.6 194.7L358.1 194.7L358.6 194.7L359.1 194.7L359.6 194.7L360.1 194.7L360.6 194.7L361.1 194.7L361.6 194.7L362.1 194.0L362.6 189.1L363.1 188.7L363.6 189.3L364.1 189.7L364.6 190.1L365.1 190.4L365.6 190.5L366.1 190.6L366.6 190.6L367.1 190.7L367.6 190.9L368.1 191.1L368.6 191.2L369.1 191.3L369.6 191.3L370.1 191.5L370.6 191.6L371.1 191.5L371.6 191.4L372.1 191.4L372.6 191.4L373.1 191.5L373.6 191.7L374.1 191.7L374.6 191.7L375.1 191.8L375.6 191.9L376.1 193.3L376.6 194.7L377.1 192.2L377.6 190.1L378.1 190.3L378.6 190.4L379.1 190.6L379.6 190.7L380.1 190.8L380.6 190.9L381.1 191.1L381.6 191.2L382.1 191.2L382.6 191.1L383.1 191.1L383.6 191.1L384.1 191.2L384.6 191.3L385.1 191.4L385.6 191.4L386.1 191.5L386.6 191.6L387.1 191.8L387.6 191.7L388.1 191.6L388.6 191.6L389.1 191.6L389.6 191.6L390.1 191.7L390.6 191.7L391.1 191.7L391.6 192.4L392.1 194.7L392.6 194.3L393.1 189.7L393.6 189.0L394.1 189.3L394.6 189.7L395.1 190.0L395.6 190.2L396.1 190.3L396.6 190.4L397.1 190.6L397.6 190.9L398.1 191.0L398.6 191.1L399.1 191.0L399.6 191.0L400.1 191.0L400.6 191.1L401.1 191.1L401.6 191.1L402.1 191.1L402.6 191.2L403.1 191.4L403.6 191.5L404.1 191.5L404.6 191.4L405.1 191.4L405.6 192.1L406.1 194.7L406.6 193.0L407.1 190.3L407.6 190.4L408.1 190.5L408.6 190.7L409.1 190.9L409.6 191.0L410.1 190.9L410.6 190.9L411.1 191.0L411.6 191.1L412.1 191.0L412.6 191.0L413.1 191.0L413.6 191.1L414.1 191.3L414.6 191.4L415.1 191.4L415.6 191.4L416.1 191.4L416.6 191.4L417.1 191.4L417.6 191.4L418.1 191.3L418.6 191.3L419.1 191.3L419.6 192.2L420.1 194.7L420.6 191.9L421.1 187.6L421.6 188.1L422.1 188.4L422.6 188.7L423.1 188.8L423.6 188.9L424.1 188.9L424.6 189.1L425.1 189.3L425.6 189.5L426.1 189.6L426.6 189.6L427.1 189.7L427.6 189.8L428.1 189.9L428.6 189.8L429.1 189.7L429.6 189.7L430.1 189.8L430.6 190.0L431.1 190.1L431.6 190.1L432.1 190.1L432.6 190.2L433.1 190.3L433.6 190.3L434.1 190.3L434.6 190.2L435.1 190.1L435.6 190.2L436.1 190.3L436.6 190.4L437.1 190.4L437.6 190.4L438.1 190.5L438.6 190.6L439.1 190.7L439.6 191.2L440.1 191.7L440.6 192.2L441.1 192.8L441.6 193.4L442.1 194.1L442.6 194.7L443.1 194.7L443.6 194.7L444.1 194.7L444.6 194.7L445.1 194.7L445.6 194.7L445.6 195.4L445.1 195.4L444.6 195.4L444.1 195.4L443.6 195.4L443.1 195.4L442.6 195.5L442.1 196.1L441.6 196.7L441.1 197.4L440.6 198.0L440.1 198.5L439.6 198.9L439.1 199.4L438.6 199.6L438.1 199.7L437.6 199.8L437.1 199.8L436.6 199.8L436.1 199.9L435.6 200.0L435.1 200.1L434.6 200.0L434.1 199.9L433.6 199.8L433.1 199.9L432.6 200.0L432.1 200.0L431.6 200.0L431.1 200.1L430.6 200.2L430.1 200.4L429.6 200.4L429.1 200.4L428.6 200.3L428.1 200.3L427.6 200.3L427.1 200.5L426.6 200.5L426.1 200.6L425.6 200.6L425.1 200.8L424.6 201.0L424.1 201.2L423.6 201.3L423.1 201.3L422.6 201.5L422.1 201.7L421.6 202.1L421.1 202.5L420.6 198.2L420.1 195.4L419.6 197.9L419.1 198.8L418.6 198.9L418.1 198.9L417.6 198.8L417.1 198.7L416.6 198.7L416.1 198.8L415.6 198.8L415.1 198.7L414.6 198.8L414.1 198.9L413.6 199.1L413.1 199.2L412.6 199.2L412.1 199.1L411.6 199.1L411.1 199.2L410.6 199.2L410.1 199.2L409.6 199.2L409.1 199.2L408.6 199.4L408.1 199.6L407.6 199.8L407.1 199.9L406.6 197.2L406.1 195.4L405.6 198.0L405.1 198.8L404.6 198.7L404.1 198.6L403.6 198.6L403.1 198.8L402.6 199.0L402.1 199.1L401.6 199.1L401.1 199.0L400.6 199.1L400.1 199.1L399.6 199.2L399.1 199.1L398.6 199.1L398.1 199.1L397.6 199.3L397.1 199.5L396.6 199.7L396.1 199.9L395.6 200.0L395.1 200.2L394.6 200.5L394.1 200.8L393.6 201.1L393.1 200.5L392.6 195.8L392.1 195.4L391.6 197.7L391.1 198.5L390.6 198.5L390.1 198.5L389.6 198.5L389.1 198.6L388.6 198.6L388.1 198.5L387.6 198.4L387.1 198.4L386.6 198.5L386.1 198.7L385.6 198.8L385.1 198.8L384.6 198.8L384.1 198.9L383.6 199.0L383.1 199.1L382.6 199.0L382.1 198.9L381.6 198.9L381.1 199.1L380.6 199.3L380.1 199.4L379.6 199.5L379.1 199.6L378.6 199.7L378.1 199.9L377.6 200.0L377.1 197.9L376.6 195.4L376.1 196.9L375.6 198.3L375.1 198.4L374.6 198.5L374.1 198.5L373.6 198.5L373.1 198.6L372.6 198.8L372.1 198.8L371.6 198.7L371.1 198.6L370.6 198.6L370.1 198.7L369.6 198.8L369.1 198.9L368.6 198.9L368.1 199.0L367.6 199.2L367.1 199.4L366.6 199.6L366.1 199.6L365.6 199.6L365.1 199.8L364.6 200.1L364.1 200.5L363.6 200.9L363.1 201.4L362.6 201.0L362.1 196.1L361.6 195.4L361.1 195.4L360.6 195.4L360.1 195.4L359.6 195.4L359.1 195.4L358.6 195.4L358.1 195.4L357.6 195.4L357.1 195.4L356.6 195.4L356.1 195.4L355.6 195.4L355.1 195.4L354.6 195.4L354.1 195.4L353.6 195.4L353.1 195.4L352.6 195.4L352.1 195.4L351.6 196.3L351.1 197.9L350.6 198.6L350.1 199.0L349.6 199.2L349.1 199.3L348.6 199.4L348.1 199.4L347.6 199.5L347.1 199.5L346.6 199.5L346.1 199.5L345.6 199.5L345.1 199.5L344.6 199.5L344.1 199.5L343.6 199.5L343.1 199.5L342.6 199.5L342.1 199.5L341.6 199.5L341.1 199.5L340.6 199.4L340.1 199.4L339.6 199.3L339.1 199.1L338.6 198.8L338.1 198.2L337.6 197.2L337.1 197.9L336.6 199.7L336.1 199.6L335.6 199.5L335.1 199.6L334.6 199.8L334.1 200.0L333.6 200.1L333.1 200.1L332.6 200.2L332.1 200.4L331.6 200.6L331.1 200.9L330.6 201.1L330.1 201.5L329.6 202.2L329.1 199.4L328.6 195.4L328.1 195.4L327.6 198.4L327.1 199.3L326.6 199.3L326.1 199.4L325.6 199.4L325.1 199.2L324.6 199.1L324.1 199.2L323.6 199.3L323.1 199.4L322.6 199.5L322.1 199.5L321.6 199.5L321.1 199.6L320.6 199.6L320.1 199.6L319.6 199.5L319.1 199.4L318.6 199.4L318.1 199.6L317.6 199.7L317.1 199.7L316.6 199.7L316.1 199.8L315.6 199.9L315.1 200.0L314.6 200.0L314.1 199.9L313.6 199.9L313.1 199.9L312.6 200.1L312.1 200.2L311.6 200.3L311.1 200.4L310.6 200.5L310.1 200.8L309.6 201.1L309.1 201.3L308.6 201.5L308.1 201.9L307.6 202.5L307.1 203.5L306.6 204.9L306.1 206.8L305.6 209.6L305.1 204.2L304.6 195.4L304.1 199.8L303.6 200.9L303.1 200.8L302.6 200.7L302.1 200.7L301.6 200.8L301.1 200.8L300.6 200.8L300.1 200.8L299.6 200.9L299.1 201.0L298.6 201.1L298.1 201.1L297.6 201.0L297.1 201.0L296.6 201.0L296.1 201.0L295.6 201.1L295.1 201.1L294.6 198.5L294.1 195.4L293.6 195.4L293.1 195.4L292.6 195.4L292.1 195.4L291.6 195.4L291.1 195.4L290.6 195.4L290.1 195.4L289.6 195.4L289.1 195.4L288.6 195.4L288.1 195.4L287.6 195.4L287.1 195.4L286.6 195.4L286.1 195.4L285.6 195.4L285.1 195.4L284.6 196.0L284.1 196.3L283.6 196.3L283.1 196.5L282.6 196.9L282.1 197.2L281.6 197.4L281.1 197.6L280.6 197.9L280.1 198.3L279.6 198.3L279.1 195.7L278.6 198.0L278.1 198.7L277.6 198.8L277.1 199.0L276.6 199.2L276.1 199.2L275.6 199.2L275.1 199.2L274.6 199.4L274.1 199.5L273.6 199.5L273.1 198.9L272.6 195.6L272.1 197.9L271.6 198.8L271.1 199.0L270.6 199.0L270.1 199.0L269.6 199.0L269.1 199.1L268.6 199.1L268.1 199.1L267.6 199.0L267.1 199.0L266.6 199.1L266.1 199.3L265.6 198.9L265.1 195.8L264.6 198.0L264.1 198.7L263.6 198.8L263.1 198.8L262.6 198.8L262.1 198.7L261.6 198.6L261.1 198.7L260.6 198.9L260.1 199.0L259.6 199.1L259.1 199.1L258.6 199.2L258.1 199.4L257.6 199.5L257.1 199.5L256.6 198.8L256.1 195.6L255.6 197.4L255.1 198.1L254.6 198.1L254.1 198.2L253.6 198.1L253.1 198.2L252.6 198.3L252.1 198.4L251.6 198.3L251.1 197.7L250.6 195.4L250.1 197.9L249.6 198.7L249.1 198.8L248.6 198.9L248.1 198.9L247.6 199.0L247.1 199.2L246.6 199.3L246.1 199.3L245.6 199.2L245.1 199.2L244.6 199.3L244.1 199.5L243.6 199.6L243.1 199.7L242.6 199.9L242.1 200.2L241.6 200.5L241.1 200.8L240.6 201.0L240.1 201.2L239.6 201.5L239.1 202.0L238.6 201.4L238.1 196.1L237.6 197.9L237.1 199.9L236.6 200.1L236.1 200.3L235.6 200.4L235.1 200.4L234.6 200.4L234.1 200.5L233.6 200.7L233.1 200.9L232.6 201.2L232.1 201.6L231.6 202.2L231.1 203.0L230.6 204.2L230.1 203.8L229.6 196.6L229.1 197.8L228.6 198.4L228.1 198.4L227.6 198.5L227.1 198.5L226.6 198.4L226.1 198.4L225.6 198.6L225.1 198.8L224.6 198.9L224.1 198.9L223.6 198.8L223.1 198.8L222.6 198.8L222.1 198.9L221.6 198.9L221.1 198.9L220.6 198.9L220.1 199.1L219.6 199.3L219.1 199.5L218.6 199.5L218.1 199.5L217.6 199.5L217.1 199.7L216.6 199.8L216.1 199.8L215.6 199.8L215.1 199.9L214.6 200.1L214.1 198.2L213.6 195.4L213.1 197.7L212.6 198.3L212.1 198.3L211.6 198.3L211.1 198.4L210.6 198.3L210.1 198.2L209.6 198.2L209.1 198.3L208.6 198.5L208.1 198.6L207.6 198.6L207.1 198.5L206.6 198.6L206.1 198.6L205.6 198.7L205.1 198.6L204.6 198.5L204.1 198.5L203.6 198.6L203.1 198.8L202.6 198.9L202.1 198.9L201.6 198.9L201.1 199.0L200.6 199.1L200.1 199.1L199.6 199.1L199.1 199.0L198.6 199.0L198.1 199.1L197.6 199.3L197.1 199.5L196.6 199.5L196.1 199.6L195.6 199.8L195.1 200.0L194.6 200.2L194.1 200.3L193.6 200.4L193.1 200.8L192.6 201.4L192.1 202.2L191.6 203.2L191.1 203.0L190.6 196.4L190.1 195.4L189.6 195.4L189.1 195.4Z" fill="#748b3d"/></svg>
<div style="left:762px;top:710.72px;width:84.8px;height:29.6px;background:rgba(255,255,255,0.15);border-radius:5.6px;"></div>
<div style="left:1785.6px;top:698.32px;width:1201.6px;height:163.6px;background:#a9cb5e;border-radius:8.8px;border:4px solid #f4f6ee;"></div>
<div style="left:1782.8px;top:707.92px;width:5.6px;height:144.4px;background:#a9cb5e;"></div>
<svg style="left:0;top:0" width="2660" height="1284" viewBox="0 0 665 321"><path d="M447.0 194.7L447.5 194.7L448.0 194.7L448.5 193.8L449.0 187.2L449.5 186.9L450.0 188.0L450.5 188.8L451.0 189.4L451.5 189.7L452.0 189.9L452.5 190.0L453.0 190.2L453.5 190.4L454.0 190.5L454.5 190.6L455.0 190.7L455.5 190.8L456.0 191.0L456.5 191.2L457.0 191.2L457.5 191.1L458.0 191.0L458.5 191.1L459.0 191.2L459.5 191.2L460.0 191.3L460.5 191.3L461.0 191.4L461.5 191.6L462.0 191.7L462.5 191.7L463.0 191.6L463.5 191.5L464.0 191.5L464.5 191.6L465.0 191.6L465.5 191.6L466.0 191.6L466.5 191.7L467.0 191.9L467.5 192.0L468.0 192.0L468.5 191.9L469.0 191.8L469.5 191.8L470.0 191.9L470.5 191.9L471.0 192.4L471.5 194.7L472.0 192.0L472.5 190.0L473.0 190.2L473.5 190.4L474.0 190.4L474.5 190.4L475.0 190.5L475.5 190.6L476.0 190.7L476.5 190.7L477.0 190.7L477.5 190.8L478.0 191.1L478.5 191.2L479.0 191.3L479.5 191.3L480.0 191.3L480.5 191.3L481.0 191.4L481.5 191.4L482.0 191.3L482.5 191.3L483.0 191.4L483.5 191.6L484.0 191.7L484.5 191.7L485.0 191.7L485.5 191.7L486.0 191.7L486.5 191.8L487.0 192.4L487.5 193.5L488.0 186.3L488.5 186.0L489.0 187.1L489.5 188.0L490.0 188.6L490.5 188.9L491.0 189.2L491.5 189.5L492.0 189.7L492.5 189.8L493.0 189.7L493.5 189.8L494.0 189.9L494.5 190.1L495.0 190.2L495.5 192.2L496.0 194.1L496.5 188.8L497.0 188.2L497.5 188.7L498.0 189.0L498.5 189.2L499.0 189.4L499.5 189.7L500.0 190.0L500.5 190.3L501.0 190.4L501.5 190.5L502.0 190.7L502.5 190.9L503.0 191.0L503.5 191.0L504.0 190.9L504.5 190.9L505.0 191.0L505.5 191.1L506.0 191.3L506.5 191.3L507.0 191.3L507.5 191.4L508.0 192.3L508.5 194.7L509.0 192.4L509.5 191.9L510.0 191.8L510.5 191.9L511.0 192.0L511.5 192.0L512.0 192.0L512.5 192.0L513.0 192.1L513.5 192.8L514.0 194.6L514.5 191.4L515.0 190.7L515.5 190.7L516.0 190.8L516.5 191.0L517.0 191.1L517.5 191.1L518.0 191.1L518.5 191.3L519.0 191.4L519.5 191.5L520.0 191.5L520.5 191.4L521.0 191.3L521.5 191.4L522.0 191.4L522.5 192.2L523.0 194.4L523.5 191.3L524.0 190.8L524.5 191.0L525.0 191.2L525.5 191.2L526.0 191.1L526.5 191.0L527.0 191.1L527.5 191.2L528.0 191.2L528.5 191.2L529.0 191.2L529.5 191.3L530.0 192.2L530.5 194.6L531.0 191.3L531.5 190.6L532.0 190.7L532.5 190.8L533.0 190.9L533.5 191.0L534.0 190.9L534.5 191.0L535.0 191.2L535.5 191.4L536.0 191.5L536.5 192.2L537.0 194.5L537.5 191.9L538.0 191.8L538.5 192.2L539.0 192.5L539.5 192.7L540.0 193.0L540.5 193.3L541.0 193.6L541.5 193.8L542.0 193.9L542.5 194.2L543.0 194.7L543.5 194.7L544.0 194.7L544.5 194.7L545.0 194.7L545.5 194.7L546.0 194.7L546.5 194.7L547.0 194.7L547.5 194.7L548.0 194.7L548.5 194.7L549.0 194.7L549.5 194.7L550.0 194.7L550.5 194.7L551.0 194.7L551.5 194.7L552.0 194.7L552.5 191.7L553.0 189.1L553.5 189.1L554.0 189.1L554.5 189.2L555.0 189.2L555.5 189.1L556.0 189.0L556.5 189.0L557.0 189.2L557.5 189.3L558.0 189.4L558.5 189.4L559.0 189.4L559.5 189.4L560.0 189.5L560.5 189.5L561.0 189.4L561.5 189.2L562.0 190.3L562.5 194.7L563.0 185.9L563.5 180.6L564.0 183.3L564.5 185.2L565.0 186.6L565.5 187.6L566.0 188.3L566.5 188.7L567.0 188.9L567.5 189.1L568.0 189.4L568.5 189.6L569.0 189.8L569.5 189.9L570.0 190.0L570.5 190.1L571.0 190.2L571.5 190.3L572.0 190.2L572.5 190.1L573.0 190.1L573.5 190.2L574.0 190.4L574.5 190.4L575.0 190.4L575.5 190.5L576.0 190.6L576.5 190.7L577.0 190.7L577.5 190.7L578.0 190.5L578.5 190.5L579.0 190.6L579.5 190.7L580.0 190.7L580.5 190.7L581.0 190.8L581.5 190.9L582.0 191.0L582.5 191.0L583.0 190.9L583.5 190.8L584.0 190.8L584.5 190.8L585.0 190.9L585.5 191.7L586.0 194.7L586.5 194.7L587.0 190.8L587.5 188.0L588.0 188.7L588.5 189.1L589.0 189.3L589.5 189.5L590.0 189.8L590.5 190.0L591.0 190.0L591.5 190.1L592.0 190.2L592.5 190.4L593.0 190.6L593.5 190.6L594.0 190.6L594.5 190.5L595.0 192.3L595.5 193.0L596.0 191.9L596.5 191.4L597.0 191.1L597.5 190.9L598.0 190.8L598.5 190.7L599.0 190.7L599.5 190.7L600.0 190.7L600.5 190.7L601.0 190.7L601.5 190.7L602.0 190.7L602.5 190.7L603.0 190.7L603.5 190.7L604.0 190.7L604.5 190.7L605.0 190.7L605.5 190.7L606.0 190.7L606.5 190.8L607.0 190.8L607.5 191.0L608.0 191.2L608.5 191.6L609.0 192.3L609.5 193.8L610.0 194.7L610.5 194.7L611.0 194.7L611.5 194.7L612.0 194.7L612.5 194.7L613.0 194.7L613.5 194.7L614.0 194.7L614.5 194.7L615.0 194.7L615.5 194.7L616.0 194.7L616.5 194.7L617.0 194.7L617.5 194.7L618.0 194.7L618.5 194.7L619.0 194.7L619.5 194.7L620.0 194.0L620.5 189.1L621.0 188.7L621.5 189.3L622.0 189.7L622.5 190.1L623.0 190.4L623.5 190.5L624.0 190.6L624.5 190.6L625.0 190.7L625.5 190.9L626.0 191.1L626.5 191.2L627.0 191.3L627.5 191.3L628.0 191.5L628.5 191.6L629.0 191.5L629.5 191.4L630.0 191.4L630.5 191.4L631.0 191.5L631.5 191.7L632.0 191.7L632.5 191.7L633.0 191.8L633.5 191.9L634.0 193.3L634.5 194.7L635.0 192.2L635.5 190.1L636.0 190.3L636.5 190.4L637.0 190.6L637.5 190.7L638.0 190.8L638.5 190.9L639.0 191.1L639.5 191.2L640.0 191.2L640.5 191.1L641.0 191.1L641.5 191.1L642.0 191.2L642.5 191.3L643.0 191.4L643.5 191.4L644.0 191.5L644.5 191.6L645.0 191.8L645.5 191.7L646.0 191.6L646.5 191.6L647.0 191.6L647.5 191.6L648.0 191.7L648.5 191.7L649.0 191.7L649.5 192.4L650.0 194.7L650.5 194.3L651.0 189.7L651.5 189.0L652.0 189.3L652.5 189.7L653.0 190.0L653.5 190.2L654.0 190.3L654.5 190.4L655.0 190.6L655.5 190.9L656.0 191.0L656.5 191.1L657.0 191.0L657.5 191.0L658.0 191.0L658.5 191.1L659.0 191.1L659.5 191.1L660.0 191.1L660.5 191.2L661.0 191.4L661.5 191.5L662.0 191.5L662.5 191.4L663.0 191.4L663.5 192.1L664.0 194.7L664.0 195.4L663.5 198.0L663.0 198.8L662.5 198.7L662.0 198.6L661.5 198.6L661.0 198.8L660.5 199.0L660.0 199.1L659.5 199.1L659.0 199.0L658.5 199.1L658.0 199.1L657.5 199.2L657.0 199.1L656.5 199.1L656.0 199.1L655.5 199.3L655.0 199.5L654.5 199.7L654.0 199.9L653.5 200.0L653.0 200.2L652.5 200.5L652.0 200.8L651.5 201.1L651.0 200.5L650.5 195.8L650.0 195.4L649.5 197.7L649.0 198.5L648.5 198.5L648.0 198.5L647.5 198.5L647.0 198.6L646.5 198.6L646.0 198.5L645.5 198.4L645.0 198.4L644.5 198.5L644.0 198.7L643.5 198.8L643.0 198.8L642.5 198.8L642.0 198.9L641.5 199.0L641.0 199.1L640.5 199.0L640.0 198.9L639.5 198.9L639.0 199.1L638.5 199.3L638.0 199.4L637.5 199.5L637.0 199.6L636.5 199.7L636.0 199.9L635.5 200.0L635.0 197.9L634.5 195.4L634.0 196.9L633.5 198.3L633.0 198.4L632.5 198.5L632.0 198.5L631.5 198.5L631.0 198.6L630.5 198.8L630.0 198.8L629.5 198.7L629.0 198.6L628.5 198.6L628.0 198.7L627.5 198.8L627.0 198.9L626.5 198.9L626.0 199.0L625.5 199.2L625.0 199.4L624.5 199.6L624.0 199.6L623.5 199.6L623.0 199.8L622.5 200.1L622.0 200.5L621.5 200.9L621.0 201.4L620.5 201.0L620.0 196.1L619.5 195.4L619.0 195.4L618.5 195.4L618.0 195.4L617.5 195.4L617.0 195.4L616.5 195.4L616.0 195.4L615.5 195.4L615.0 195.4L614.5 195.4L614.0 195.4L613.5 195.4L613.0 195.4L612.5 195.4L612.0 195.4L611.5 195.4L611.0 195.4L610.5 195.4L610.0 195.4L609.5 196.3L609.0 197.9L608.5 198.6L608.0 199.0L607.5 199.2L607.0 199.3L606.5 199.4L606.0 199.4L605.5 199.5L605.0 199.5L604.5 199.5L604.0 199.5L603.5 199.5L603.0 199.5L602.5 199.5L602.0 199.5L601.5 199.5L601.0 199.5L600.5 199.5L600.0 199.5L599.5 199.5L599.0 199.5L598.5 199.4L598.0 199.4L597.5 199.3L597.0 199.1L596.5 198.8L596.0 198.2L595.5 197.2L595.0 197.9L594.5 199.7L594.0 199.6L593.5 199.5L593.0 199.6L592.5 199.8L592.0 200.0L591.5 200.1L591.0 200.1L590.5 200.2L590.0 200.4L589.5 200.6L589.0 200.9L588.5 201.1L588.0 201.5L587.5 202.2L587.0 199.4L586.5 195.4L586.0 195.4L585.5 198.4L585.0 199.3L584.5 199.3L584.0 199.4L583.5 199.4L583.0 199.2L582.5 199.1L582.0 199.2L581.5 199.3L581.0 199.4L580.5 199.5L580.0 199.5L579.5 199.5L579.0 199.6L578.5 199.6L578.0 199.6L577.5 199.5L577.0 199.4L576.5 199.4L576.0 199.6L575.5 199.7L575.0 199.7L574.5 199.7L574.0 199.8L573.5 199.9L573.0 200.0L572.5 200.0L572.0 199.9L571.5 199.9L571.0 199.9L570.5 200.1L570.0 200.2L569.5 200.3L569.0 200.4L568.5 200.5L568.0 200.8L567.5 201.1L567.0 201.3L566.5 201.5L566.0 201.9L565.5 202.5L565.0 203.5L564.5 204.9L564.0 206.8L563.5 209.6L563.0 204.2L562.5 195.4L562.0 199.8L561.5 200.9L561.0 200.8L560.5 200.7L560.0 200.7L559.5 200.8L559.0 200.8L558.5 200.8L558.0 200.8L557.5 200.9L557.0 201.0L556.5 201.1L556.0 201.1L555.5 201.0L555.0 201.0L554.5 201.0L554.0 201.0L553.5 201.1L553.0 201.1L552.5 198.5L552.0 195.4L551.5 195.4L551.0 195.4L550.5 195.4L550.0 195.4L549.5 195.4L549.0 195.4L548.5 195.4L548.0 195.4L547.5 195.4L547.0 195.4L546.5 195.4L546.0 195.4L545.5 195.4L545.0 195.4L544.5 195.4L544.0 195.4L543.5 195.4L543.0 195.4L542.5 196.0L542.0 196.3L541.5 196.3L541.0 196.5L540.5 196.9L540.0 197.2L539.5 197.4L539.0 197.6L538.5 197.9L538.0 198.3L537.5 198.3L537.0 195.7L536.5 198.0L536.0 198.7L535.5 198.8L535.0 199.0L534.5 199.2L534.0 199.2L533.5 199.2L533.0 199.2L532.5 199.4L532.0 199.5L531.5 199.5L531.0 198.9L530.5 195.6L530.0 197.9L529.5 198.8L529.0 199.0L528.5 199.0L528.0 199.0L527.5 199.0L527.0 199.1L526.5 199.1L526.0 199.1L525.5 199.0L525.0 199.0L524.5 199.1L524.0 199.3L523.5 198.9L523.0 195.8L522.5 198.0L522.0 198.7L521.5 198.8L521.0 198.8L520.5 198.8L520.0 198.7L519.5 198.6L519.0 198.7L518.5 198.9L518.0 199.0L517.5 199.1L517.0 199.1L516.5 199.2L516.0 199.4L515.5 199.5L515.0 199.5L514.5 198.8L514.0 195.6L513.5 197.4L513.0 198.1L512.5 198.1L512.0 198.2L511.5 198.1L511.0 198.2L510.5 198.3L510.0 198.4L509.5 198.3L509.0 197.7L508.5 195.4L508.0 197.9L507.5 198.7L507.0 198.8L506.5 198.9L506.0 198.9L505.5 199.0L505.0 199.2L504.5 199.3L504.0 199.3L503.5 199.2L503.0 199.2L502.5 199.3L502.0 199.5L501.5 199.6L501.0 199.7L500.5 199.9L500.0 200.2L499.5 200.5L499.0 200.8L498.5 201.0L498.0 201.2L497.5 201.5L497.0 202.0L496.5 201.4L496.0 196.1L495.5 197.9L495.0 199.9L494.5 200.1L494.0 200.3L493.5 200.4L493.0 200.4L492.5 200.4L492.0 200.5L491.5 200.7L491.0 200.9L490.5 201.2L490.0 201.6L489.5 202.2L489.0 203.0L488.5 204.2L488.0 203.8L487.5 196.6L487.0 197.8L486.5 198.4L486.0 198.4L485.5 198.5L485.0 198.5L484.5 198.4L484.0 198.4L483.5 198.6L483.0 198.8L482.5 198.9L482.0 198.9L481.5 198.8L481.0 198.8L480.5 198.8L480.0 198.9L479.5 198.9L479.0 198.9L478.5 198.9L478.0 199.1L477.5 199.3L477.0 199.5L476.5 199.5L476.0 199.5L475.5 199.5L475.0 199.7L474.5 199.8L474.0 199.8L473.5 199.8L473.0 199.9L472.5 200.1L472.0 198.2L471.5 195.4L471.0 197.7L470.5 198.3L470.0 198.3L469.5 198.3L469.0 198.4L468.5 198.3L468.0 198.2L467.5 198.2L467.0 198.3L466.5 198.5L466.0 198.6L465.5 198.6L465.0 198.5L464.5 198.6L464.0 198.6L463.5 198.7L463.0 198.6L462.5 198.5L462.0 198.5L461.5 198.6L461.0 198.8L460.5 198.9L460.0 198.9L459.5 198.9L459.0 199.0L458.5 199.1L458.0 199.1L457.5 199.1L457.0 199.0L456.5 199.0L456.0 199.1L455.5 199.3L455.0 199.5L454.5 199.5L454.0 199.6L453.5 199.8L453.0 200.0L452.5 200.2L452.0 200.3L451.5 200.4L451.0 200.8L450.5 201.4L450.0 202.2L449.5 203.2L449.0 203.0L448.5 196.4L448.0 195.4L447.5 195.4L447.0 195.4Z" fill="#748b3d"/></svg>
<div style="left:1792px;top:708.12px;width:86.4px;height:32.4px;background:rgba(40,10,50,0.38);border-radius:5.6px;"></div>
<svg style="left:1794.4px;top:820.32px" width="30" height="30" viewBox="0 0 13 13"><circle cx="6.500" cy="6.500" r="6.300" fill="#6f8540"/><path d="M7.500 3.200H4v6.600h3.500" fill="none" stroke="#f4f4f4" stroke-width="1.400"/><path d="M6.500 6.500h4M8.800 4.600l2 1.900-2 1.900" fill="none" stroke="#f4f4f4" stroke-width="1.300"/></svg>
<div style="left:-132.8px;top:872.6px;width:790.4px;height:163.6px;background:#e6ba3a;border-radius:8.8px;"></div>
<svg style="left:0;top:0" width="2660" height="1284" viewBox="0 0 665 321"><path d="M0.2 236.4L0.7 236.3L1.2 235.9L1.7 236.4L2.2 236.0L2.7 235.3L3.2 235.1L3.7 235.4L4.2 235.4L4.7 235.5L5.2 236.0L5.7 236.1L6.2 235.9L6.7 235.0L7.2 234.8L7.7 234.4L8.2 234.8L8.7 234.2L9.2 234.3L9.7 234.2L10.2 234.7L10.7 234.5L11.2 235.4L11.7 235.4L12.2 235.5L12.7 235.6L13.2 235.8L13.7 236.0L14.2 236.0L14.7 235.9L15.2 236.7L15.7 236.1L16.2 235.9L16.7 235.8L17.2 236.0L17.7 235.6L18.2 235.2L18.7 235.1L19.2 234.6L19.7 234.3L20.2 233.8L20.7 233.4L21.2 233.6L21.7 233.2L22.2 233.1L22.7 233.5L23.2 234.0L23.7 234.7L24.2 234.9L24.7 235.4L25.2 235.7L25.7 235.3L26.2 236.3L26.7 235.5L27.2 236.5L27.7 235.9L28.2 236.1L28.7 236.5L29.2 236.0L29.7 236.4L30.2 236.3L30.7 235.9L31.2 236.8L31.7 237.2L32.2 236.8L32.7 236.3L33.2 236.9L33.7 236.9L34.2 235.9L34.7 236.1L35.2 236.2L35.7 235.7L36.2 236.1L36.7 235.7L37.2 235.8L37.7 235.3L38.2 234.7L38.7 234.2L39.2 233.9L39.7 233.9L40.2 233.6L40.7 233.8L41.2 234.1L41.7 234.1L42.2 234.2L42.7 234.6L43.2 235.1L43.7 235.1L44.2 236.0L44.7 236.2L45.2 236.0L45.7 236.3L46.2 236.4L46.7 236.3L47.2 236.1L47.7 236.4L48.2 236.4L48.7 236.0L49.2 235.8L49.7 236.1L50.2 236.2L50.7 236.1L51.2 235.2L51.7 235.5L52.2 234.7L52.7 234.5L53.2 234.4L53.7 233.9L54.2 234.4L54.7 234.4L55.2 234.4L55.7 235.0L56.2 234.8L56.7 235.5L57.2 235.9L57.7 236.1L58.2 235.4L58.7 235.6L59.2 235.4L59.7 235.4L60.2 235.2L60.7 235.0L61.2 235.4L61.7 236.1L62.2 235.8L62.7 236.3L63.2 236.6L63.7 236.1L64.2 235.9L64.7 236.6L65.2 236.6L65.7 236.6L66.2 236.2L66.7 236.5L67.2 236.1L67.7 236.0L68.2 236.2L68.7 235.8L69.2 235.5L69.7 235.9L70.2 234.9L70.7 234.7L71.2 234.6L71.7 233.9L72.2 233.5L72.7 233.0L73.2 233.3L73.7 233.3L74.2 233.4L74.7 233.9L75.2 234.2L75.7 235.0L76.2 235.3L76.7 235.9L77.2 235.3L77.7 235.2L78.2 235.4L78.7 235.3L79.2 236.0L79.7 235.2L80.2 235.2L80.7 235.3L81.2 235.9L81.7 235.7L82.2 236.3L82.7 235.7L83.2 235.8L83.7 235.9L84.2 235.9L84.7 235.3L85.2 234.9L85.7 234.3L86.2 234.2L86.7 234.2L87.2 233.5L87.7 234.0L88.2 233.6L88.7 234.3L89.2 234.6L89.7 234.6L90.2 235.5L90.7 235.8L91.2 235.8L91.7 235.6L92.2 235.4L92.7 235.5L93.2 235.1L93.7 235.6L94.2 235.0L94.7 236.1L95.2 235.9L95.7 235.5L96.2 235.8L96.7 235.3L97.2 235.5L97.7 235.7L98.2 235.3L98.7 235.2L99.2 235.0L99.7 234.6L100.2 234.0L100.7 233.8L101.2 234.3L101.7 233.9L102.2 234.0L102.7 234.6L103.2 234.9L103.7 235.5L104.2 235.6L104.7 235.8L105.2 235.9L105.7 236.4L106.2 235.8L106.7 236.2L107.2 236.4L107.7 235.8L108.2 236.0L108.7 236.0L109.2 235.7L109.7 236.2L110.2 235.6L110.7 235.3L111.2 234.3L111.7 233.7L112.2 233.3L112.7 232.4L113.2 231.9L113.7 231.1L114.2 230.6L114.7 230.7L115.2 231.4L115.7 232.2L116.2 233.1L116.7 233.6L117.2 234.1L117.7 235.3L118.2 235.3L118.7 236.1L119.2 236.2L119.7 236.3L120.2 236.0L120.7 236.2L121.2 236.0L121.7 235.6L122.2 235.7L122.7 234.9L123.2 235.0L123.7 234.4L124.2 234.3L124.7 234.1L125.2 233.8L125.7 234.0L126.2 234.3L126.7 234.6L127.2 234.9L127.7 235.5L128.2 235.8L128.7 235.5L129.2 235.5L129.7 235.6L130.2 235.1L130.7 235.4L131.2 235.1L131.7 235.9L132.2 235.3L132.7 234.9L133.2 234.4L133.7 234.2L134.2 233.6L134.7 232.6L135.2 232.7L135.7 231.9L136.2 232.0L136.7 232.8L137.2 233.2L137.7 233.4L138.2 234.4L138.7 235.1L139.2 235.0L139.7 235.7L140.2 235.7L140.7 236.3L141.2 236.2L141.7 236.1L142.2 237.0L142.7 236.7L143.2 236.0L143.7 235.7L144.2 235.5L144.7 236.3L145.2 235.9L145.7 235.5L146.2 235.5L146.7 235.1L147.2 235.1L147.7 234.8L148.2 234.5L148.7 234.4L149.2 234.0L149.7 234.1L150.2 234.3L150.7 234.9L151.2 235.2L151.7 235.5L152.2 235.4L152.7 235.3L153.2 235.5L153.7 236.4L154.2 236.5L154.7 235.7L155.2 236.2L155.7 236.0L156.2 236.2L156.7 236.0L157.2 235.8L157.7 235.6L158.2 235.2L158.7 235.2L159.2 234.2L159.7 233.7L160.2 233.8L160.7 233.3L161.2 233.1L161.7 233.5L162.2 233.9L162.7 234.3L163.2 234.5L163.7 235.3L163.7 241.8L163.2 242.6L162.7 242.8L162.2 243.2L161.7 243.6L161.2 244.0L160.7 243.8L160.2 243.3L159.7 243.4L159.2 242.9L158.7 241.9L158.2 241.9L157.7 241.5L157.2 241.3L156.7 241.1L156.2 240.9L155.7 241.1L155.2 240.9L154.7 241.4L154.2 240.6L153.7 240.7L153.2 241.6L152.7 241.8L152.2 241.7L151.7 241.6L151.2 241.9L150.7 242.2L150.2 242.8L149.7 243.0L149.2 243.1L148.7 242.7L148.2 242.6L147.7 242.3L147.2 242.0L146.7 242.0L146.2 241.6L145.7 241.6L145.2 241.2L144.7 240.8L144.2 241.6L143.7 241.4L143.2 241.1L142.7 240.4L142.2 240.1L141.7 241.0L141.2 240.9L140.7 240.8L140.2 241.4L139.7 241.4L139.2 242.1L138.7 242.0L138.2 242.7L137.7 243.7L137.2 243.9L136.7 244.3L136.2 245.1L135.7 245.2L135.2 244.4L134.7 244.5L134.2 243.5L133.7 242.9L133.2 242.7L132.7 242.2L132.2 241.8L131.7 241.2L131.2 242.0L130.7 241.7L130.2 242.0L129.7 241.5L129.2 241.6L128.7 241.6L128.2 241.3L127.7 241.6L127.2 242.2L126.7 242.5L126.2 242.8L125.7 243.1L125.2 243.3L124.7 243.0L124.2 242.8L123.7 242.7L123.2 242.1L122.7 242.2L122.2 241.4L121.7 241.5L121.2 241.1L120.7 240.9L120.2 241.1L119.7 240.8L119.2 240.9L118.7 241.0L118.2 241.8L117.7 241.8L117.2 243.0L116.7 243.5L116.2 244.0L115.7 244.9L115.2 245.7L114.7 246.4L114.2 246.5L113.7 246.0L113.2 245.2L112.7 244.7L112.2 243.8L111.7 243.4L111.2 242.8L110.7 241.8L110.2 241.5L109.7 240.9L109.2 241.4L108.7 241.1L108.2 241.1L107.7 241.3L107.2 240.7L106.7 240.9L106.2 241.3L105.7 240.7L105.2 241.2L104.7 241.3L104.2 241.5L103.7 241.6L103.2 242.2L102.7 242.5L102.2 243.1L101.7 243.2L101.2 242.8L100.7 243.3L100.2 243.1L99.7 242.5L99.2 242.1L98.7 241.9L98.2 241.8L97.7 241.4L97.2 241.6L96.7 241.8L96.2 241.3L95.7 241.6L95.2 241.2L94.7 241.0L94.2 242.1L93.7 241.5L93.2 242.0L92.7 241.6L92.2 241.7L91.7 241.5L91.2 241.3L90.7 241.3L90.2 241.6L89.7 242.5L89.2 242.5L88.7 242.8L88.2 243.5L87.7 243.1L87.2 243.6L86.7 242.9L86.2 242.9L85.7 242.8L85.2 242.2L84.7 241.8L84.2 241.2L83.7 241.2L83.2 241.3L82.7 241.4L82.2 240.8L81.7 241.4L81.2 241.2L80.7 241.8L80.2 241.9L79.7 241.9L79.2 241.1L78.7 241.8L78.2 241.7L77.7 241.9L77.2 241.8L76.7 241.2L76.2 241.8L75.7 242.1L75.2 242.9L74.7 243.2L74.2 243.7L73.7 243.8L73.2 243.8L72.7 244.1L72.2 243.6L71.7 243.2L71.2 242.5L70.7 242.4L70.2 242.2L69.7 241.2L69.2 241.6L68.7 241.3L68.2 240.9L67.7 241.1L67.2 241.0L66.7 240.6L66.2 240.9L65.7 240.5L65.2 240.5L64.7 240.5L64.2 241.2L63.7 241.0L63.2 240.5L62.7 240.8L62.2 241.3L61.7 241.0L61.2 241.7L60.7 242.1L60.2 241.9L59.7 241.7L59.2 241.7L58.7 241.5L58.2 241.7L57.7 241.0L57.2 241.2L56.7 241.6L56.2 242.3L55.7 242.1L55.2 242.7L54.7 242.7L54.2 242.7L53.7 243.2L53.2 242.7L52.7 242.6L52.2 242.4L51.7 241.6L51.2 241.9L50.7 241.0L50.2 240.9L49.7 241.0L49.2 241.3L48.7 241.1L48.2 240.7L47.7 240.7L47.2 241.0L46.7 240.8L46.2 240.7L45.7 240.8L45.2 241.1L44.7 240.9L44.2 241.1L43.7 242.0L43.2 242.0L42.7 242.5L42.2 242.9L41.7 243.0L41.2 243.0L40.7 243.3L40.2 243.5L39.7 243.2L39.2 243.2L38.7 242.9L38.2 242.4L37.7 241.8L37.2 241.3L36.7 241.4L36.2 241.0L35.7 241.4L35.2 240.9L34.7 241.0L34.2 241.2L33.7 240.2L33.2 240.2L32.7 240.8L32.2 240.3L31.7 239.9L31.2 240.3L30.7 241.2L30.2 240.8L29.7 240.7L29.2 241.1L28.7 240.6L28.2 241.0L27.7 241.2L27.2 240.6L26.7 241.6L26.2 240.8L25.7 241.8L25.2 241.4L24.7 241.7L24.2 242.2L23.7 242.4L23.2 243.1L22.7 243.6L22.2 244.0L21.7 243.9L21.2 243.5L20.7 243.7L20.2 243.3L19.7 242.8L19.2 242.5L18.7 242.0L18.2 241.9L17.7 241.5L17.2 241.1L16.7 241.3L16.2 241.2L15.7 241.0L15.2 240.4L14.7 241.2L14.2 241.1L13.7 241.1L13.2 241.3L12.7 241.5L12.2 241.6L11.7 241.7L11.2 241.7L10.7 242.6L10.2 242.4L9.7 242.9L9.2 242.8L8.7 242.9L8.2 242.3L7.7 242.7L7.2 242.3L6.7 242.1L6.2 241.2L5.7 241.0L5.2 241.1L4.7 241.6L4.2 241.7L3.7 241.7L3.2 242.0L2.7 241.8L2.2 241.1L1.7 240.7L1.2 241.2L0.7 240.8L0.2 240.7Z" fill="#968027"/></svg>
<div style="left:657.6px;top:872.6px;width:942px;height:163.6px;background:#e6ba3a;border-radius:8.8px;"></div>
<div style="left:654.8px;top:882.2px;width:5.6px;height:144.4px;background:#e6ba3a;"></div>
<svg style="left:0;top:0" width="2660" height="1284" viewBox="0 0 665 321"><path d="M164.8 236.0L165.3 235.8L165.8 235.3L166.3 235.8L166.8 235.7L167.3 235.5L167.8 236.0L168.3 235.5L168.8 235.4L169.3 235.2L169.8 236.1L170.3 235.9L170.8 236.2L171.3 235.3L171.8 235.5L172.3 236.4L172.8 235.3L173.3 235.5L173.8 235.9L174.3 236.1L174.8 236.7L175.3 236.5L175.8 236.0L176.3 236.2L176.8 235.9L177.3 235.5L177.8 235.2L178.3 234.3L178.8 233.6L179.3 232.7L179.8 232.4L180.3 231.9L180.8 231.9L181.3 231.9L181.8 232.4L182.3 233.1L182.8 233.3L183.3 233.9L183.8 234.6L184.3 235.2L184.8 235.8L185.3 236.0L185.8 235.8L186.3 236.1L186.8 235.2L187.3 235.7L187.8 235.1L188.3 235.8L188.8 235.1L189.3 235.3L189.8 236.4L190.3 236.2L190.8 235.4L191.3 235.6L191.8 235.0L192.3 235.1L192.8 235.0L193.3 234.3L193.8 234.0L194.3 234.2L194.8 234.4L195.3 234.4L195.8 234.2L196.3 234.7L196.8 235.5L197.3 235.7L197.8 236.0L198.3 236.2L198.8 235.9L199.3 236.4L199.8 236.1L200.3 236.1L200.8 236.4L201.3 235.6L201.8 236.3L202.3 235.5L202.8 236.1L203.3 235.7L203.8 235.9L204.3 235.8L204.8 235.0L205.3 235.2L205.8 235.8L206.3 235.1L206.8 236.0L207.3 235.9L207.8 235.4L208.3 235.7L208.8 236.5L209.3 235.4L209.8 236.5L210.3 236.3L210.8 235.9L211.3 236.0L211.8 235.8L212.3 235.6L212.8 235.1L213.3 234.2L213.8 233.8L214.3 232.9L214.8 232.5L215.3 232.0L215.8 231.5L216.3 232.0L216.8 232.3L217.3 232.7L217.8 233.8L218.3 234.5L218.8 234.6L219.3 235.1L219.8 235.9L220.3 236.1L220.8 235.4L221.3 235.1L221.8 236.0L222.3 235.0L222.8 235.1L223.3 235.4L223.8 235.7L224.3 236.1L224.8 236.3L225.3 235.2L225.8 236.1L226.3 235.6L226.8 235.8L227.3 235.0L227.8 234.7L228.3 234.5L228.8 234.0L229.3 233.2L229.8 233.3L230.3 233.0L230.8 232.9L231.3 232.9L231.8 233.5L232.3 234.3L232.8 234.3L233.3 235.3L233.8 235.8L234.3 235.9L234.8 236.0L235.3 236.4L235.8 236.4L236.3 236.2L236.8 235.9L237.3 236.3L237.8 236.0L238.3 235.2L238.8 235.1L239.3 235.4L239.8 235.3L240.3 235.4L240.8 236.0L241.3 236.0L241.8 235.7L242.3 234.8L242.8 234.7L243.3 234.2L243.8 234.7L244.3 234.2L244.8 234.3L245.3 234.3L245.8 234.8L246.3 234.6L246.8 235.6L247.3 235.5L247.8 235.6L248.3 235.7L248.8 235.9L249.3 236.0L249.8 236.0L250.3 235.9L250.8 236.7L251.3 236.1L251.8 235.8L252.3 235.8L252.8 235.9L253.3 235.4L253.8 235.0L254.3 234.8L254.8 234.4L255.3 234.1L255.8 233.6L256.3 233.3L256.8 233.5L257.3 233.2L257.8 233.3L258.3 233.7L258.8 234.3L259.3 235.0L259.8 235.1L260.3 235.5L260.8 235.8L261.3 235.3L261.8 236.3L262.3 235.6L262.8 236.5L263.3 236.0L263.8 236.2L264.3 236.6L264.8 236.1L265.3 236.4L265.8 236.3L266.3 236.0L266.8 236.8L267.3 237.2L267.8 236.8L268.3 236.3L268.8 236.9L269.3 236.9L269.8 235.9L270.3 236.1L270.8 236.2L271.3 235.7L271.8 236.0L272.3 235.6L272.8 235.6L273.3 235.1L273.8 234.5L274.3 234.0L274.8 233.7L275.3 233.8L275.8 233.6L276.3 233.9L276.8 234.2L277.3 234.3L277.8 234.5L278.3 234.8L278.8 235.3L279.3 235.2L279.8 236.1L280.3 236.3L280.8 236.1L281.3 236.4L281.8 236.4L282.3 236.4L282.8 236.2L283.3 236.4L283.8 236.3L284.3 235.9L284.8 235.8L285.3 236.0L285.8 236.1L286.3 235.9L286.8 235.1L287.3 235.3L287.8 234.5L288.3 234.3L288.8 234.3L289.3 233.8L289.8 234.4L290.3 234.5L290.8 234.6L291.3 235.2L291.8 235.0L292.3 235.7L292.8 236.0L293.3 236.2L293.8 235.4L294.3 235.6L294.8 235.4L295.3 235.4L295.8 235.2L296.3 235.1L296.8 235.5L297.3 236.1L297.8 235.9L298.3 236.3L298.8 236.6L299.3 236.1L299.8 235.9L300.3 236.7L300.8 236.6L301.3 236.6L301.8 236.2L302.3 236.5L302.8 236.1L303.3 236.0L303.8 236.1L304.3 235.7L304.8 235.4L305.3 235.7L305.8 234.7L306.3 234.4L306.8 234.3L307.3 233.7L307.8 233.3L308.3 233.0L308.8 233.4L309.3 233.5L309.8 233.6L310.3 234.1L310.8 234.5L311.3 235.2L311.8 235.4L312.3 235.9L312.8 235.3L313.3 235.2L313.8 235.4L314.3 235.4L314.8 236.1L315.3 235.3L315.8 235.2L316.3 235.3L316.8 236.0L317.3 235.7L317.8 236.3L318.3 235.8L318.8 235.7L319.3 235.8L319.8 235.7L320.3 235.1L320.8 234.7L321.3 234.1L321.8 234.0L322.3 234.1L322.8 233.4L323.3 234.0L323.8 233.8L324.3 234.5L324.8 234.8L325.3 234.9L325.8 235.7L326.3 236.0L326.8 235.9L327.3 235.5L327.8 235.3L328.3 235.4L328.8 235.1L329.3 235.6L329.8 235.0L330.3 236.1L330.8 235.9L331.3 235.5L331.8 235.9L332.3 235.4L332.8 235.5L333.3 235.6L333.8 235.1L334.3 235.0L334.8 234.8L335.3 234.4L335.8 233.9L336.3 233.8L336.8 234.3L337.3 234.0L337.8 234.2L338.3 234.8L338.8 235.1L339.3 235.7L339.8 235.7L340.3 235.9L340.8 236.0L341.3 236.5L341.8 235.8L342.3 236.2L342.8 236.4L343.3 235.8L343.8 236.0L344.3 236.0L344.8 235.7L345.3 236.0L345.8 235.4L346.3 235.0L346.8 233.9L347.3 233.2L347.8 232.8L348.3 231.9L348.8 231.5L349.3 231.0L349.8 230.7L350.3 230.9L350.8 231.8L351.3 232.6L351.8 233.6L352.3 234.0L352.8 234.5L353.3 235.6L353.8 235.5L354.3 236.3L354.8 236.3L355.3 236.4L355.8 236.0L356.3 236.1L356.8 235.9L357.3 235.5L357.8 235.5L358.3 234.7L358.8 234.8L359.3 234.2L359.8 234.1L360.3 234.1L360.8 233.9L361.3 234.1L361.8 234.5L362.3 234.8L362.8 235.1L363.3 235.7L363.8 235.9L364.3 235.5L364.8 235.4L365.3 235.5L365.8 235.1L366.3 235.4L366.8 235.1L367.3 235.9L367.8 235.2L368.3 234.7L368.8 234.0L369.3 233.9L369.8 233.3L370.3 232.3L370.8 232.5L371.3 231.9L371.8 232.2L372.3 233.1L372.8 233.5L373.3 233.8L373.8 234.7L374.3 235.4L374.8 235.3L375.3 235.8L375.8 235.8L376.3 236.4L376.8 236.2L377.3 236.2L377.8 237.0L378.3 236.7L378.8 236.0L379.3 235.6L379.8 235.5L380.3 236.3L380.8 235.8L381.3 235.4L381.8 235.3L382.3 234.9L382.8 234.9L383.3 234.7L383.8 234.4L384.3 234.4L384.8 234.1L385.3 234.3L385.8 234.5L386.3 235.1L386.8 235.4L387.3 235.7L387.8 235.4L388.3 235.3L388.8 235.5L389.3 236.4L389.8 236.5L390.3 235.7L390.8 236.2L391.3 236.0L391.8 236.2L392.3 235.9L392.8 235.7L393.3 235.4L393.8 234.9L394.3 234.9L394.8 233.9L395.3 233.4L395.8 233.6L396.3 233.3L396.8 233.1L397.3 233.6L397.8 234.1L398.3 234.6L398.8 234.8L399.3 235.6L399.3 241.5L398.8 242.3L398.3 242.5L397.8 243.0L397.3 243.5L396.8 244.0L396.3 243.8L395.8 243.5L395.3 243.7L394.8 243.2L394.3 242.2L393.8 242.2L393.3 241.7L392.8 241.4L392.3 241.2L391.8 240.9L391.3 241.1L390.8 240.9L390.3 241.4L389.8 240.6L389.3 240.7L388.8 241.6L388.3 241.8L387.8 241.7L387.3 241.4L386.8 241.7L386.3 242.0L385.8 242.6L385.3 242.8L384.8 243.0L384.3 242.7L383.8 242.7L383.3 242.4L382.8 242.2L382.3 242.2L381.8 241.8L381.3 241.7L380.8 241.3L380.3 240.8L379.8 241.6L379.3 241.5L378.8 241.1L378.3 240.4L377.8 240.1L377.3 240.9L376.8 240.9L376.3 240.7L375.8 241.3L375.3 241.3L374.8 241.8L374.3 241.7L373.8 242.4L373.3 243.3L372.8 243.6L372.3 244.0L371.8 244.9L371.3 245.2L370.8 244.6L370.3 244.8L369.8 243.8L369.3 243.2L368.8 243.1L368.3 242.4L367.8 241.9L367.3 241.2L366.8 242.0L366.3 241.7L365.8 242.0L365.3 241.6L364.8 241.7L364.3 241.6L363.8 241.2L363.3 241.4L362.8 242.0L362.3 242.3L361.8 242.6L361.3 243.0L360.8 243.2L360.3 243.0L359.8 243.0L359.3 242.9L358.8 242.3L358.3 242.4L357.8 241.6L357.3 241.6L356.8 241.2L356.3 241.0L355.8 241.1L355.3 240.7L354.8 240.8L354.3 240.8L353.8 241.6L353.3 241.5L352.8 242.6L352.3 243.1L351.8 243.5L351.3 244.5L350.8 245.3L350.3 246.2L349.8 246.4L349.3 246.1L348.8 245.6L348.3 245.2L347.8 244.3L347.3 243.9L346.8 243.2L346.3 242.1L345.8 241.7L345.3 241.1L344.8 241.4L344.3 241.1L343.8 241.1L343.3 241.3L342.8 240.7L342.3 240.9L341.8 241.3L341.3 240.6L340.8 241.1L340.3 241.2L339.8 241.4L339.3 241.4L338.8 242.0L338.3 242.3L337.8 242.9L337.3 243.1L336.8 242.8L336.3 243.3L335.8 243.2L335.3 242.7L334.8 242.3L334.3 242.1L333.8 242.0L333.3 241.5L332.8 241.6L332.3 241.7L331.8 241.2L331.3 241.6L330.8 241.2L330.3 241.0L329.8 242.1L329.3 241.5L328.8 242.0L328.3 241.7L327.8 241.8L327.3 241.6L326.8 241.2L326.3 241.1L325.8 241.4L325.3 242.2L324.8 242.3L324.3 242.6L323.8 243.3L323.3 243.1L322.8 243.7L322.3 243.0L321.8 243.1L321.3 243.0L320.8 242.4L320.3 242.0L319.8 241.4L319.3 241.3L318.8 241.4L318.3 241.3L317.8 240.8L317.3 241.4L316.8 241.1L316.3 241.8L315.8 241.9L315.3 241.8L314.8 241.0L314.3 241.7L313.8 241.7L313.3 241.9L312.8 241.8L312.3 241.2L311.8 241.7L311.3 241.9L310.8 242.6L310.3 243.0L309.8 243.5L309.3 243.6L308.8 243.7L308.3 244.1L307.8 243.8L307.3 243.4L306.8 242.8L306.3 242.7L305.8 242.4L305.3 241.4L304.8 241.7L304.3 241.4L303.8 241.0L303.3 241.1L302.8 241.0L302.3 240.6L301.8 240.9L301.3 240.5L300.8 240.5L300.3 240.4L299.8 241.2L299.3 241.0L298.8 240.5L298.3 240.8L297.8 241.2L297.3 241.0L296.8 241.6L296.3 242.0L295.8 241.9L295.3 241.7L294.8 241.7L294.3 241.5L293.8 241.7L293.3 240.9L292.8 241.1L292.3 241.4L291.8 242.1L291.3 241.9L290.8 242.5L290.3 242.6L289.8 242.7L289.3 243.3L288.8 242.8L288.3 242.8L287.8 242.6L287.3 241.8L286.8 242.0L286.3 241.2L285.8 241.0L285.3 241.1L284.8 241.3L284.3 241.2L283.8 240.8L283.3 240.7L282.8 240.9L282.3 240.7L281.8 240.7L281.3 240.7L280.8 241.0L280.3 240.8L279.8 241.0L279.3 241.9L278.8 241.8L278.3 242.3L277.8 242.6L277.3 242.8L276.8 242.9L276.3 243.2L275.8 243.5L275.3 243.3L274.8 243.4L274.3 243.1L273.8 242.6L273.3 242.0L272.8 241.5L272.3 241.5L271.8 241.1L271.3 241.4L270.8 240.9L270.3 241.0L269.8 241.2L269.3 240.2L268.8 240.2L268.3 240.8L267.8 240.3L267.3 239.9L266.8 240.3L266.3 241.1L265.8 240.8L265.3 240.7L264.8 241.0L264.3 240.5L263.8 240.9L263.3 241.1L262.8 240.6L262.3 241.5L261.8 240.8L261.3 241.8L260.8 241.3L260.3 241.6L259.8 242.0L259.3 242.1L258.8 242.8L258.3 243.4L257.8 243.8L257.3 243.9L256.8 243.6L256.3 243.8L255.8 243.5L255.3 243.0L254.8 242.7L254.3 242.3L253.8 242.1L253.3 241.7L252.8 241.2L252.3 241.3L251.8 241.3L251.3 241.0L250.8 240.4L250.3 241.2L249.8 241.1L249.3 241.1L248.8 241.2L248.3 241.4L247.8 241.5L247.3 241.6L246.8 241.5L246.3 242.5L245.8 242.3L245.3 242.8L244.8 242.8L244.3 242.9L243.8 242.4L243.3 242.9L242.8 242.4L242.3 242.3L241.8 241.4L241.3 241.1L240.8 241.1L240.3 241.7L239.8 241.8L239.3 241.7L238.8 242.0L238.3 241.9L237.8 241.1L237.3 240.8L236.8 241.2L236.3 240.9L235.8 240.7L235.3 240.7L234.8 241.1L234.3 241.2L233.8 241.3L233.3 241.8L232.8 242.8L232.3 242.8L231.8 243.6L231.3 244.2L230.8 244.2L230.3 244.1L229.8 243.8L229.3 243.9L228.8 243.1L228.3 242.6L227.8 242.4L227.3 242.1L226.8 241.3L226.3 241.5L225.8 241.0L225.3 241.9L224.8 240.8L224.3 241.0L223.8 241.4L223.3 241.7L222.8 242.0L222.3 242.1L221.8 241.1L221.3 242.0L220.8 241.7L220.3 241.0L219.8 241.2L219.3 242.0L218.8 242.5L218.3 242.6L217.8 243.3L217.3 244.4L216.8 244.8L216.3 245.1L215.8 245.6L215.3 245.1L214.8 244.6L214.3 244.2L213.8 243.3L213.3 242.9L212.8 242.0L212.3 241.5L211.8 241.3L211.3 241.1L210.8 241.2L210.3 240.8L209.8 240.6L209.3 241.7L208.8 240.6L208.3 241.4L207.8 241.7L207.3 241.2L206.8 241.1L206.3 242.0L205.8 241.3L205.3 241.9L204.8 242.1L204.3 241.3L203.8 241.2L203.3 241.4L202.8 241.0L202.3 241.6L201.8 240.8L201.3 241.5L200.8 240.7L200.3 241.0L199.8 241.0L199.3 240.7L198.8 241.2L198.3 240.9L197.8 241.1L197.3 241.4L196.8 241.6L196.3 242.4L195.8 242.9L195.3 242.7L194.8 242.7L194.3 242.9L193.8 243.1L193.3 242.8L192.8 242.1L192.3 242.0L191.8 242.1L191.3 241.5L190.8 241.7L190.3 240.9L189.8 240.7L189.3 241.8L188.8 242.0L188.3 241.3L187.8 242.0L187.3 241.4L186.8 241.9L186.3 241.0L185.8 241.3L185.3 241.1L184.8 241.3L184.3 241.9L183.8 242.5L183.3 243.2L182.8 243.8L182.3 244.0L181.8 244.7L181.3 245.2L180.8 245.2L180.3 245.2L179.8 244.7L179.3 244.4L178.8 243.5L178.3 242.8L177.8 241.9L177.3 241.6L176.8 241.2L176.3 240.9L175.8 241.1L175.3 240.6L174.8 240.4L174.3 241.0L173.8 241.2L173.3 241.6L172.8 241.8L172.3 240.7L171.8 241.6L171.3 241.8L170.8 240.9L170.3 241.2L169.8 241.0L169.3 241.9L168.8 241.7L168.3 241.6L167.8 241.1L167.3 241.6L166.8 241.4L166.3 241.3L165.8 241.8L165.3 241.3L164.8 241.1Z" fill="#968027"/></svg>
<div style="left:670.8px;top:885px;width:158.4px;height:31.2px;background:rgba(255,255,255,0.15);border-radius:5.6px;"></div>
<div style="left:1599.6px;top:872.6px;width:940.8px;height:163.6px;background:#e6ba3a;border-radius:8.8px;"></div>
<div style="left:1596.8px;top:882.2px;width:5.6px;height:144.4px;background:#e6ba3a;"></div>
<svg style="left:0;top:0" width="2660" height="1284" viewBox="0 0 665 321"><path d="M400.3 236.0L400.8 235.8L401.3 235.3L401.8 235.8L402.3 235.7L402.8 235.5L403.3 236.0L403.8 235.5L404.3 235.4L404.8 235.2L405.3 236.1L405.8 235.9L406.3 236.2L406.8 235.3L407.3 235.5L407.8 236.4L408.3 235.3L408.8 235.5L409.3 235.9L409.8 236.1L410.3 236.7L410.8 236.5L411.3 236.0L411.8 236.2L412.3 235.9L412.8 235.5L413.3 235.2L413.8 234.3L414.3 233.6L414.8 232.7L415.3 232.4L415.8 231.9L416.3 231.9L416.8 231.9L417.3 232.4L417.8 233.1L418.3 233.3L418.8 233.9L419.3 234.6L419.8 235.2L420.3 235.8L420.8 236.0L421.3 235.8L421.8 236.1L422.3 235.2L422.8 235.7L423.3 235.1L423.8 235.8L424.3 235.1L424.8 235.3L425.3 236.4L425.8 236.2L426.3 235.4L426.8 235.6L427.3 235.0L427.8 235.1L428.3 235.0L428.8 234.3L429.3 234.0L429.8 234.2L430.3 234.4L430.8 234.4L431.3 234.2L431.8 234.7L432.3 235.5L432.8 235.7L433.3 236.0L433.8 236.2L434.3 235.9L434.8 236.4L435.3 236.1L435.8 236.1L436.3 236.4L436.8 235.6L437.3 236.3L437.8 235.5L438.3 236.1L438.8 235.7L439.3 235.9L439.8 235.8L440.3 235.0L440.8 235.2L441.3 235.8L441.8 235.1L442.3 236.0L442.8 235.9L443.3 235.4L443.8 235.7L444.3 236.5L444.8 235.4L445.3 236.5L445.8 236.3L446.3 235.9L446.8 236.0L447.3 235.8L447.8 235.6L448.3 235.1L448.8 234.2L449.3 233.8L449.8 232.9L450.3 232.5L450.8 232.0L451.3 231.5L451.8 232.0L452.3 232.3L452.8 232.7L453.3 233.8L453.8 234.5L454.3 234.6L454.8 235.1L455.3 235.9L455.8 236.1L456.3 235.4L456.8 235.1L457.3 236.0L457.8 235.0L458.3 235.1L458.8 235.4L459.3 235.7L459.8 236.1L460.3 236.3L460.8 235.2L461.3 236.1L461.8 235.6L462.3 235.8L462.8 235.0L463.3 234.7L463.8 234.5L464.3 234.0L464.8 233.2L465.3 233.3L465.8 233.0L466.3 232.9L466.8 232.9L467.3 233.5L467.8 234.3L468.3 234.3L468.8 235.3L469.3 235.8L469.8 235.9L470.3 236.0L470.8 236.4L471.3 236.4L471.8 236.2L472.3 235.9L472.8 236.3L473.3 236.0L473.8 235.2L474.3 235.1L474.8 235.4L475.3 235.3L475.8 235.4L476.3 236.0L476.8 236.0L477.3 235.7L477.8 234.8L478.3 234.7L478.8 234.2L479.3 234.7L479.8 234.2L480.3 234.3L480.8 234.3L481.3 234.8L481.8 234.6L482.3 235.6L482.8 235.5L483.3 235.6L483.8 235.7L484.3 235.9L484.8 236.0L485.3 236.0L485.8 235.9L486.3 236.7L486.8 236.1L487.3 235.8L487.8 235.8L488.3 235.9L488.8 235.4L489.3 235.0L489.8 234.8L490.3 234.4L490.8 234.1L491.3 233.6L491.8 233.3L492.3 233.5L492.8 233.2L493.3 233.3L493.8 233.7L494.3 234.3L494.8 235.0L495.3 235.1L495.8 235.5L496.3 235.8L496.8 235.3L497.3 236.3L497.8 235.6L498.3 236.5L498.8 236.0L499.3 236.2L499.8 236.6L500.3 236.1L500.8 236.4L501.3 236.3L501.8 236.0L502.3 236.8L502.8 237.2L503.3 236.8L503.8 236.3L504.3 236.9L504.8 236.9L505.3 235.9L505.8 236.1L506.3 236.2L506.8 235.7L507.3 236.0L507.8 235.6L508.3 235.6L508.8 235.1L509.3 234.5L509.8 234.0L510.3 233.7L510.8 233.8L511.3 233.6L511.8 233.9L512.3 234.2L512.8 234.3L513.3 234.5L513.8 234.8L514.3 235.3L514.8 235.2L515.3 236.1L515.8 236.3L516.3 236.1L516.8 236.4L517.3 236.4L517.8 236.4L518.3 236.2L518.8 236.4L519.3 236.3L519.8 235.9L520.3 235.8L520.8 236.0L521.3 236.1L521.8 235.9L522.3 235.1L522.8 235.3L523.3 234.5L523.8 234.3L524.3 234.3L524.8 233.8L525.3 234.4L525.8 234.5L526.3 234.6L526.8 235.2L527.3 235.0L527.8 235.7L528.3 236.0L528.8 236.2L529.3 235.4L529.8 235.6L530.3 235.4L530.8 235.4L531.3 235.2L531.8 235.1L532.3 235.5L532.8 236.1L533.3 235.9L533.8 236.3L534.3 236.6L534.8 236.1L535.3 235.9L535.8 236.7L536.3 236.6L536.8 236.6L537.3 236.2L537.8 236.5L538.3 236.1L538.8 236.0L539.3 236.1L539.8 235.7L540.3 235.4L540.8 235.7L541.3 234.7L541.8 234.4L542.3 234.3L542.8 233.7L543.3 233.3L543.8 233.0L544.3 233.4L544.8 233.5L545.3 233.6L545.8 234.1L546.3 234.5L546.8 235.2L547.3 235.4L547.8 235.9L548.3 235.3L548.8 235.2L549.3 235.4L549.8 235.4L550.3 236.1L550.8 235.3L551.3 235.2L551.8 235.3L552.3 236.0L552.8 235.7L553.3 236.3L553.8 235.8L554.3 235.7L554.8 235.8L555.3 235.7L555.8 235.1L556.3 234.7L556.8 234.1L557.3 234.0L557.8 234.1L558.3 233.4L558.8 234.0L559.3 233.8L559.8 234.5L560.3 234.8L560.8 234.9L561.3 235.7L561.8 236.0L562.3 235.9L562.8 235.5L563.3 235.3L563.8 235.4L564.3 235.1L564.8 235.6L565.3 235.0L565.8 236.1L566.3 235.9L566.8 235.5L567.3 235.9L567.8 235.4L568.3 235.5L568.8 235.6L569.3 235.1L569.8 235.0L570.3 234.8L570.8 234.4L571.3 233.9L571.8 233.8L572.3 234.3L572.8 234.0L573.3 234.2L573.8 234.8L574.3 235.1L574.8 235.7L575.3 235.7L575.8 235.9L576.3 236.0L576.8 236.5L577.3 235.8L577.8 236.2L578.3 236.4L578.8 235.8L579.3 236.0L579.8 236.0L580.3 235.7L580.8 236.0L581.3 235.4L581.8 235.0L582.3 233.9L582.8 233.2L583.3 232.8L583.8 231.9L584.3 231.5L584.8 231.0L585.3 230.7L585.8 230.9L586.3 231.8L586.8 232.6L587.3 233.6L587.8 234.0L588.3 234.5L588.8 235.6L589.3 235.5L589.8 236.3L590.3 236.3L590.8 236.4L591.3 236.0L591.8 236.1L592.3 235.9L592.8 235.5L593.3 235.5L593.8 234.7L594.3 234.8L594.8 234.2L595.3 234.1L595.8 234.1L596.3 233.9L596.8 234.1L597.3 234.5L597.8 234.8L598.3 235.1L598.8 235.7L599.3 235.9L599.8 235.5L600.3 235.4L600.8 235.5L601.3 235.1L601.8 235.4L602.3 235.1L602.8 235.9L603.3 235.2L603.8 234.7L604.3 234.0L604.8 233.9L605.3 233.3L605.8 232.3L606.3 232.5L606.8 231.9L607.3 232.2L607.8 233.1L608.3 233.5L608.8 233.8L609.3 234.7L609.8 235.4L610.3 235.3L610.8 235.8L611.3 235.8L611.8 236.4L612.3 236.2L612.8 236.2L613.3 237.0L613.8 236.7L614.3 236.0L614.8 235.6L615.3 235.5L615.8 236.3L616.3 235.8L616.8 235.4L617.3 235.3L617.8 234.9L618.3 234.9L618.8 234.7L619.3 234.4L619.8 234.4L620.3 234.1L620.8 234.3L621.3 234.5L621.8 235.1L622.3 235.4L622.8 235.7L623.3 235.4L623.8 235.3L624.3 235.5L624.8 236.4L625.3 236.5L625.8 235.7L626.3 236.2L626.8 236.0L627.3 236.2L627.8 235.9L628.3 235.7L628.8 235.4L629.3 234.9L629.8 234.9L630.3 233.9L630.8 233.4L631.3 233.6L631.8 233.3L632.3 233.1L632.8 233.6L633.3 234.1L633.8 234.6L634.3 234.8L634.3 242.3L633.8 242.5L633.3 243.0L632.8 243.5L632.3 244.0L631.8 243.8L631.3 243.5L630.8 243.7L630.3 243.2L629.8 242.2L629.3 242.2L628.8 241.7L628.3 241.4L627.8 241.2L627.3 240.9L626.8 241.1L626.3 240.9L625.8 241.4L625.3 240.6L624.8 240.7L624.3 241.6L623.8 241.8L623.3 241.7L622.8 241.4L622.3 241.7L621.8 242.0L621.3 242.6L620.8 242.8L620.3 243.0L619.8 242.7L619.3 242.7L618.8 242.4L618.3 242.2L617.8 242.2L617.3 241.8L616.8 241.7L616.3 241.3L615.8 240.8L615.3 241.6L614.8 241.5L614.3 241.1L613.8 240.4L613.3 240.1L612.8 240.9L612.3 240.9L611.8 240.7L611.3 241.3L610.8 241.3L610.3 241.8L609.8 241.7L609.3 242.4L608.8 243.3L608.3 243.6L607.8 244.0L607.3 244.9L606.8 245.2L606.3 244.6L605.8 244.8L605.3 243.8L604.8 243.2L604.3 243.1L603.8 242.4L603.3 241.9L602.8 241.2L602.3 242.0L601.8 241.7L601.3 242.0L600.8 241.6L600.3 241.7L599.8 241.6L599.3 241.2L598.8 241.4L598.3 242.0L597.8 242.3L597.3 242.6L596.8 243.0L596.3 243.2L595.8 243.0L595.3 243.0L594.8 242.9L594.3 242.3L593.8 242.4L593.3 241.6L592.8 241.6L592.3 241.2L591.8 241.0L591.3 241.1L590.8 240.7L590.3 240.8L589.8 240.8L589.3 241.6L588.8 241.5L588.3 242.6L587.8 243.1L587.3 243.5L586.8 244.5L586.3 245.3L585.8 246.2L585.3 246.4L584.8 246.1L584.3 245.6L583.8 245.2L583.3 244.3L582.8 243.9L582.3 243.2L581.8 242.1L581.3 241.7L580.8 241.1L580.3 241.4L579.8 241.1L579.3 241.1L578.8 241.3L578.3 240.7L577.8 240.9L577.3 241.3L576.8 240.6L576.3 241.1L575.8 241.2L575.3 241.4L574.8 241.4L574.3 242.0L573.8 242.3L573.3 242.9L572.8 243.1L572.3 242.8L571.8 243.3L571.3 243.2L570.8 242.7L570.3 242.3L569.8 242.1L569.3 242.0L568.8 241.5L568.3 241.6L567.8 241.7L567.3 241.2L566.8 241.6L566.3 241.2L565.8 241.0L565.3 242.1L564.8 241.5L564.3 242.0L563.8 241.7L563.3 241.8L562.8 241.6L562.3 241.2L561.8 241.1L561.3 241.4L560.8 242.2L560.3 242.3L559.8 242.6L559.3 243.3L558.8 243.1L558.3 243.7L557.8 243.0L557.3 243.1L556.8 243.0L556.3 242.4L555.8 242.0L555.3 241.4L554.8 241.3L554.3 241.4L553.8 241.3L553.3 240.8L552.8 241.4L552.3 241.1L551.8 241.8L551.3 241.9L550.8 241.8L550.3 241.0L549.8 241.7L549.3 241.7L548.8 241.9L548.3 241.8L547.8 241.2L547.3 241.7L546.8 241.9L546.3 242.6L545.8 243.0L545.3 243.5L544.8 243.6L544.3 243.7L543.8 244.1L543.3 243.8L542.8 243.4L542.3 242.8L541.8 242.7L541.3 242.4L540.8 241.4L540.3 241.7L539.8 241.4L539.3 241.0L538.8 241.1L538.3 241.0L537.8 240.6L537.3 240.9L536.8 240.5L536.3 240.5L535.8 240.4L535.3 241.2L534.8 241.0L534.3 240.5L533.8 240.8L533.3 241.2L532.8 241.0L532.3 241.6L531.8 242.0L531.3 241.9L530.8 241.7L530.3 241.7L529.8 241.5L529.3 241.7L528.8 240.9L528.3 241.1L527.8 241.4L527.3 242.1L526.8 241.9L526.3 242.5L525.8 242.6L525.3 242.7L524.8 243.3L524.3 242.8L523.8 242.8L523.3 242.6L522.8 241.8L522.3 242.0L521.8 241.2L521.3 241.0L520.8 241.1L520.3 241.3L519.8 241.2L519.3 240.8L518.8 240.7L518.3 240.9L517.8 240.7L517.3 240.7L516.8 240.7L516.3 241.0L515.8 240.8L515.3 241.0L514.8 241.9L514.3 241.8L513.8 242.3L513.3 242.6L512.8 242.8L512.3 242.9L511.8 243.2L511.3 243.5L510.8 243.3L510.3 243.4L509.8 243.1L509.3 242.6L508.8 242.0L508.3 241.5L507.8 241.5L507.3 241.1L506.8 241.4L506.3 240.9L505.8 241.0L505.3 241.2L504.8 240.2L504.3 240.2L503.8 240.8L503.3 240.3L502.8 239.9L502.3 240.3L501.8 241.1L501.3 240.8L500.8 240.7L500.3 241.0L499.8 240.5L499.3 240.9L498.8 241.1L498.3 240.6L497.8 241.5L497.3 240.8L496.8 241.8L496.3 241.3L495.8 241.6L495.3 242.0L494.8 242.1L494.3 242.8L493.8 243.4L493.3 243.8L492.8 243.9L492.3 243.6L491.8 243.8L491.3 243.5L490.8 243.0L490.3 242.7L489.8 242.3L489.3 242.1L488.8 241.7L488.3 241.2L487.8 241.3L487.3 241.3L486.8 241.0L486.3 240.4L485.8 241.2L485.3 241.1L484.8 241.1L484.3 241.2L483.8 241.4L483.3 241.5L482.8 241.6L482.3 241.5L481.8 242.5L481.3 242.3L480.8 242.8L480.3 242.8L479.8 242.9L479.3 242.4L478.8 242.9L478.3 242.4L477.8 242.3L477.3 241.4L476.8 241.1L476.3 241.1L475.8 241.7L475.3 241.8L474.8 241.7L474.3 242.0L473.8 241.9L473.3 241.1L472.8 240.8L472.3 241.2L471.8 240.9L471.3 240.7L470.8 240.7L470.3 241.1L469.8 241.2L469.3 241.3L468.8 241.8L468.3 242.8L467.8 242.8L467.3 243.6L466.8 244.2L466.3 244.2L465.8 244.1L465.3 243.8L464.8 243.9L464.3 243.1L463.8 242.6L463.3 242.4L462.8 242.1L462.3 241.3L461.8 241.5L461.3 241.0L460.8 241.9L460.3 240.8L459.8 241.0L459.3 241.4L458.8 241.7L458.3 242.0L457.8 242.1L457.3 241.1L456.8 242.0L456.3 241.7L455.8 241.0L455.3 241.2L454.8 242.0L454.3 242.5L453.8 242.6L453.3 243.3L452.8 244.4L452.3 244.8L451.8 245.1L451.3 245.6L450.8 245.1L450.3 244.6L449.8 244.2L449.3 243.3L448.8 242.9L448.3 242.0L447.8 241.5L447.3 241.3L446.8 241.1L446.3 241.2L445.8 240.8L445.3 240.6L444.8 241.7L444.3 240.6L443.8 241.4L443.3 241.7L442.8 241.2L442.3 241.1L441.8 242.0L441.3 241.3L440.8 241.9L440.3 242.1L439.8 241.3L439.3 241.2L438.8 241.4L438.3 241.0L437.8 241.6L437.3 240.8L436.8 241.5L436.3 240.7L435.8 241.0L435.3 241.0L434.8 240.7L434.3 241.2L433.8 240.9L433.3 241.1L432.8 241.4L432.3 241.6L431.8 242.4L431.3 242.9L430.8 242.7L430.3 242.7L429.8 242.9L429.3 243.1L428.8 242.8L428.3 242.1L427.8 242.0L427.3 242.1L426.8 241.5L426.3 241.7L425.8 240.9L425.3 240.7L424.8 241.8L424.3 242.0L423.8 241.3L423.3 242.0L422.8 241.4L422.3 241.9L421.8 241.0L421.3 241.3L420.8 241.1L420.3 241.3L419.8 241.9L419.3 242.5L418.8 243.2L418.3 243.8L417.8 244.0L417.3 244.7L416.8 245.2L416.3 245.2L415.8 245.2L415.3 244.7L414.8 244.4L414.3 243.5L413.8 242.8L413.3 241.9L412.8 241.6L412.3 241.2L411.8 240.9L411.3 241.1L410.8 240.6L410.3 240.4L409.8 241.0L409.3 241.2L408.8 241.6L408.3 241.8L407.8 240.7L407.3 241.6L406.8 241.8L406.3 240.9L405.8 241.2L405.3 241.0L404.8 241.9L404.3 241.7L403.8 241.6L403.3 241.1L402.8 241.6L402.3 241.4L401.8 241.3L401.3 241.8L400.8 241.3L400.3 241.1Z" fill="#968027"/></svg>
<div style="left:1612.8px;top:885px;width:158.4px;height:31.2px;background:rgba(255,255,255,0.15);border-radius:5.6px;"></div>
<div style="left:188.6px;top:10px;width:2.8px;height:146px;background:rgba(255,255,255,0.15);"></div>
<div style="left:423.92px;top:10px;width:2.8px;height:146px;background:rgba(255,255,255,0.15);"></div>
<div style="left:659.24px;top:10px;width:2.8px;height:146px;background:rgba(255,255,255,0.15);"></div>
<div style="left:894.56px;top:10px;width:2.8px;height:146px;background:rgba(255,255,255,0.15);"></div>
<div style="left:1129.88px;top:10px;width:2.8px;height:146px;background:rgba(255,255,255,0.15);"></div>
<div style="left:1365.2px;top:10px;width:2.8px;height:146px;background:rgba(255,255,255,0.15);"></div>
<div style="left:1600.52px;top:10px;width:2.8px;height:146px;background:rgba(255,255,255,0.15);"></div>
<div style="left:1835.84px;top:10px;width:2.8px;height:146px;background:rgba(255,255,255,0.15);"></div>
<div style="left:2071.16px;top:10px;width:2.8px;height:146px;background:rgba(255,255,255,0.15);"></div>
<div style="left:2306.48px;top:10px;width:2.8px;height:146px;background:rgba(255,255,255,0.15);"></div>
<div style="left:2541.8px;top:10px;width:2.8px;height:146px;background:rgba(255,255,255,0.15);"></div>
<div style="left:1540.6px;top:184.28px;width:2.8px;height:146px;background:rgba(255,255,255,0.15);"></div>
<div style="left:2482.6px;top:184.28px;width:2.8px;height:146px;background:rgba(255,255,255,0.15);"></div>
<div style="left:245.6px;top:358.56px;width:2.8px;height:146px;background:rgba(255,255,255,0.15);"></div>
<div style="left:809.4px;top:358.56px;width:2.8px;height:146px;background:rgba(255,255,255,0.15);"></div>
<div style="left:1364.6px;top:358.56px;width:2.8px;height:146px;background:rgba(255,255,255,0.15);"></div>
<div style="left:753.4px;top:532.84px;width:2.8px;height:146px;background:rgba(255,255,255,0.15);"></div>
<div style="left:1785.8px;top:532.84px;width:2.8px;height:146px;background:rgba(255,255,255,0.15);"></div>
<div style="left:753.4px;top:707.12px;width:2.8px;height:146px;background:rgba(255,255,255,0.15);"></div>
<div style="left:1785px;top:707.12px;width:2.8px;height:146px;background:rgba(255,255,255,0.15);"></div>
<div style="left:657px;top:881.4px;width:2.8px;height:146px;background:rgba(255,255,255,0.15);"></div>
<div style="left:1599px;top:881.4px;width:2.8px;height:146px;background:rgba(255,255,255,0.15);"></div>
<svg style="left:0;top:0" width="2660" height="1284" viewBox="0 0 665 321"><rect x="13.40" y="264.60" width="700" height="40" rx="3.500" fill="none" stroke="#454a53" stroke-width="1.100" stroke-dasharray="3.200 2.100"/></svg>
<svg style="left:1768px;top:1089.6px" width="62" height="42.4" viewBox="0 0 29 20"><path d="M0.300 10.500h8M4.300 6.500v8" stroke="#f2f2f2" stroke-width="2.400"/><path d="M13 3.400L26.500 0.400v13.600a3.700 3 0 1 1-2.400-2.800V5L15.400 7v9.400a3.700 3 0 1 1-2.400-2.800z" fill="#f4f4f4"/></svg>
<div style="left:7.2px;top:1262.4px;width:108px;height:19.6px;background:#6e7279;border-radius:9.8px;"></div>
</div>
<div style="left:0px;top:1573.6px;width:3272px;height:69.2px;background:#343a44;"></div>
<div style="left:0px;top:1642.8px;width:611.2px;height:524px;background:#333a44;"></div>
<div style="left:0px;top:1642px;width:3272px;height:2.8px;background:#2a2e36;"></div>
<div style="left:611.2px;top:1644.8px;width:2661.6px;height:521.6px;background:#1c1f24;"></div>
<div style="left:0px;top:2165.6px;width:3272px;height:18.4px;background:#353b45;"></div>
<div style="left:20px;top:2179.2px;width:168px;height:5.6px;background:#2cb797;"></div>
<svg style="left:24.8px;top:1593.2px" width="30.4" height="30.4" viewBox="0 0 15 15"><path d="M1.500 1.500l12 12M13.500 1.500l-12 12" stroke="#fff" stroke-width="3"/></svg>
<svg style="left:73.2px;top:1593.6px" width="30.4" height="29.6" viewBox="0 0 15 15"><path d="M1 5V1h4M10 1h4v4M14 10v4h-4M5 14H1v-4" fill="none" stroke="#fff" stroke-width="2.200"/></svg>
<div style="left:20px;top:1734.4px;width:568.8px;height:59.2px;background:#23262e;border-radius:6px;"></div>
<div style="left:20px;top:1816.8px;width:568.8px;height:59.2px;background:#23262e;border-radius:6px;"></div>
<div style="left:20px;top:1900.8px;width:384px;height:57.6px;background:#23262e;border-radius:6px;"></div>
<svg style="left:36px;top:1916.8px" width="35.2" height="26.4" viewBox="0 0 18 13.500"><circle cx="9" cy="5.400" r="4.800" fill="#f4f4f4"/><path d="M0 6H18C18 10.500 14 13 9 13S0 10.500 0 6z" fill="#dedede"/><path d="M3.500 6.200C5 8.400 13 8.400 14.500 6.200" fill="none" stroke="#23262e" stroke-width="0.900"/></svg>
<div style="left:1712px;top:1651.2px;width:1027.2px;height:506.4px;background:#30363f;border-radius:6px;"></div>
<div style="left:1712px;top:1712px;width:1027.2px;height:3.2px;background:#24282f;"></div>
<svg style="left:1730.4px;top:1668px" width="34.4" height="29.6" viewBox="0 0 17 15"><rect x="3.500" y="0.500" width="13" height="9.500" rx="1" fill="#f0f0f0"/><path d="M1.800 3v9.300h12.200" fill="none" stroke="#d8d8d8" stroke-width="1.500"/><path d="M0.600 5.500v8.700h11.500" fill="none" stroke="#b8b8b8" stroke-width="1.100"/></svg>
<div style="left:1847.6px;top:1800px;width:14.8px;height:205.6px;background:#1f2227;border-radius:7.4px;"></div>
<div style="left:1847.2px;top:1990.4px;width:16px;height:16px;background:#2cb797;border-radius:50%;"></div>
<svg style="left:1880px;top:1760px" width="760" height="400" viewBox="0 0 1024 539">
<defs><linearGradient id="gb" x1="0.750" y1="0" x2="0.250" y2="1"><stop offset="0" stop-color="#a655c4"/><stop offset="0.450" stop-color="#7a42b8"/><stop offset="1" stop-color="#4727a6"/></linearGradient></defs>
<path d="M58 215C56 150 66 95 100 66c30-22 72-20 112-4 38 15 62 30 92 28 40-2 78-22 118-26 22-2 36 6 32 16-6 14-36 14-52 30-12 12-14 34-6 56l-66 4-2 54c14 22 40 44 66 58 14 8 14 22 2 30-22 12-60 4-92-16-22-12-44-4-72 12-32 20-72 38-108 30-40-10-64-60-66-123z" fill="url(#gb)"/>
<path d="M163 124c14-18 40-26 66-18 26 8 40 24 68 24 24 0 38-14 56-12 12 2 12 18 4 32-8 14-28 16-30 34-4 30 2 60 24 84 12 14 12 28-2 30-30 4-58-22-86-22-30 0-54 30-92 44-22 8-44 2-48-16-4-20 14-36 26-62 14-30 8-56 6-80-1-14 0-28 8-38z" fill="#e9e9e9"/>
<path d="M336 170l455 2 0 40-455 10c-8 0-10-6-10-26s2-26 10-26z" fill="#d8c49b"/>
<path d="M786 172l14-15 128 38c10 4 16 14 14 22-2 8-10 10-22 8l-40-4c-20 0-36 8-56 6-14-2-28-8-38-15z" fill="#d8c49b"/>
<g fill="#1d1d20"><circle cx="808" cy="173" r="5.800"/><circle cx="829" cy="179.500" r="5.800"/><circle cx="850" cy="186" r="5.800"/><circle cx="871" cy="192" r="5.800"/><circle cx="892" cy="198" r="5.800"/><circle cx="913" cy="204" r="5.800"/></g>
<g stroke="#8b92a4" stroke-width="8.500"><path d="M815 146l-4 12"/><path d="M836 152l-4 12"/><path d="M857 158l-4 12"/><path d="M878 164l-4 12"/><path d="M899 170l-4 12"/><path d="M920 176l-4 12"/></g>
</svg>
<div style="left:2111.6px;top:2068.4px;width:231.2px;height:59.2px;background:#23262e;border-radius:6px;"></div>
<svg style="left:2126.8px;top:2080px" width="36" height="36" viewBox="0 0 18 18"><path d="M2.600 15.600L11.600 4.200" stroke="#ededed" stroke-width="2.400" stroke-linecap="round"/><path d="M4.400 3.400L15.600 12.200" stroke="#ededed" stroke-width="2.200" stroke-linecap="round"/><path d="M7.600 1.800l6 4.800M12.500 13.500l3.500-2.500" stroke="#dcdcdc" stroke-width="1.400"/><circle cx="2.800" cy="15.400" r="2.500" fill="#f2f2f2"/></svg>
<div style="left:3272.4px;top:198px;width:823.6px;height:1988px;background:#333a44;"></div>
<div style="left:3270.4px;top:198px;width:2.8px;height:1988px;background:#22252b;"></div>
<div style="left:3272.4px;top:199.2px;width:824px;height:94px;background:#23262d;"></div>
<div style="left:3432.8px;top:199.2px;width:2.8px;height:94px;background:#2e333c;"></div>
<div style="left:3612.4px;top:199.2px;width:188.8px;height:94px;background:#333a44;"></div>
<svg style="left:3298.4px;top:228px" width="33.6" height="33.6" viewBox="0 0 17 17"><rect x="4" y="0.500" width="12.500" height="12.500" rx="2" fill="#e4e4e4"/><path d="M2.200 3.500v11.300h11.300" fill="none" stroke="#e4e4e4" stroke-width="1.700"/><path d="M9 4.200h3v1.600h-1.200v3h1.200v1.600H8.600V8.800h1V5.800H9z" fill="#23262d"/></svg>
<svg style="left:3466.4px;top:229.6px" width="28" height="32" viewBox="0 0 14 16"><rect x="0.500" y="3.500" width="13" height="12" rx="1.500" fill="#d8d8d8"/><rect x="2.500" y="0.500" width="2.600" height="5" fill="#d8d8d8"/><rect x="8.900" y="0.500" width="2.600" height="5" fill="#d8d8d8"/><rect x="3" y="8.500" width="8" height="1.600" fill="#23262d"/></svg>
<svg style="left:3636.8px;top:234.8px" width="40" height="20.8" viewBox="0 0 20 10"><path d="M10 5C8 2.200 6.600 1.200 4.800 1.200a3.800 3.800 0 0 0 0 7.600C6.600 8.800 8 7.800 10 5s3.400-3.800 5.200-3.800a3.800 3.800 0 0 1 0 7.600C13.400 8.800 12 7.800 10 5z" fill="none" stroke="#2cb797" stroke-width="2.700"/></svg>
<svg style="left:3299.2px;top:313.6px" width="30.4" height="30.4" viewBox="0 0 15 15"><circle cx="6" cy="6" r="4.300" fill="none" stroke="#f0f0f0" stroke-width="2.200"/><path d="M9.200 9.200l4.600 4.600" stroke="#f0f0f0" stroke-width="2.600"/></svg>
<div style="left:3272.4px;top:363.2px;width:824px;height:68px;background:#23262e;"></div>
<div style="left:3708.8px;top:363.2px;width:3.2px;height:68px;background:#333a44;"></div>
<svg style="left:3655.2px;top:390.4px" width="24" height="15.2" viewBox="0 0 12 7.500"><path d="M1 1l5 5 5-5" fill="none" stroke="#fff" stroke-width="2.600"/></svg>
<svg style="left:4086.4px;top:390.4px" width="24" height="15.2" viewBox="0 0 12 7.500"><path d="M1 1l5 5 5-5" fill="none" stroke="#fff" stroke-width="2.600"/></svg>
<div style="left:3272.4px;top:429.6px;width:824px;height:3.6px;background:#282c34;"></div>
<svg style="left:3308.8px;top:462.4px" width="25.6" height="29.6" viewBox="0 0 13 15"><path d="M0.500 0.500v14L12.500 7.500z" fill="#fff"/></svg>
<svg style="left:3365.6px;top:456.8px" width="40" height="40" viewBox="0 0 20 20"><circle cx="10" cy="10" r="7.800" fill="none" stroke="#707d90" stroke-width="3.200" stroke-dasharray="3.100 1.800"/></svg>
<div style="left:3272.4px;top:516.72px;width:824px;height:3.6px;background:#282c34;"></div>
<svg style="left:3308.8px;top:549.52px" width="25.6" height="29.6" viewBox="0 0 13 15"><path d="M0.500 0.500v14L12.500 7.500z" fill="#fff"/></svg>
<svg style="left:3365.6px;top:543.92px" width="40" height="40" viewBox="0 0 20 20"><circle cx="10" cy="10" r="7.800" fill="none" stroke="#707d90" stroke-width="3.200" stroke-dasharray="3.100 1.800"/></svg>
<div style="left:3272.4px;top:603.84px;width:824px;height:3.6px;background:#282c34;"></div>
<svg style="left:3308.8px;top:636.64px" width="25.6" height="29.6" viewBox="0 0 13 15"><path d="M0.500 0.500v14L12.500 7.500z" fill="#fff"/></svg>
<svg style="left:3365.6px;top:631.04px" width="40" height="40" viewBox="0 0 20 20"><circle cx="10" cy="10" r="7.800" fill="none" stroke="#707d90" stroke-width="3.200" stroke-dasharray="3.100 1.800"/></svg>
<div style="left:3272.4px;top:690.96px;width:824px;height:3.6px;background:#282c34;"></div>
<svg style="left:3308.8px;top:723.76px" width="25.6" height="29.6" viewBox="0 0 13 15"><path d="M0.500 0.500v14L12.500 7.500z" fill="#fff"/></svg>
<svg style="left:3365.6px;top:718.16px" width="40" height="40" viewBox="0 0 20 20"><circle cx="10" cy="10" r="7.800" fill="none" stroke="#707d90" stroke-width="3.200" stroke-dasharray="3.100 1.800"/></svg>
<div style="left:3272.4px;top:778.08px;width:824px;height:3.6px;background:#282c34;"></div>
<svg style="left:3308.8px;top:810.88px" width="25.6" height="29.6" viewBox="0 0 13 15"><path d="M0.500 0.500v14L12.500 7.500z" fill="#fff"/></svg>
<svg style="left:3365.6px;top:805.28px" width="40" height="40" viewBox="0 0 20 20"><circle cx="10" cy="10" r="7.800" fill="none" stroke="#707d90" stroke-width="3.200" stroke-dasharray="3.100 1.800"/></svg>
<div style="left:3272.4px;top:865.2px;width:824px;height:3.6px;background:#282c34;"></div>
<svg style="left:3308.8px;top:898px" width="25.6" height="29.6" viewBox="0 0 13 15"><path d="M0.500 0.500v14L12.500 7.500z" fill="#fff"/></svg>
<svg style="left:3365.6px;top:892.4px" width="40" height="40" viewBox="0 0 20 20"><circle cx="10" cy="10" r="7.800" fill="none" stroke="#707d90" stroke-width="3.200" stroke-dasharray="3.100 1.800"/></svg>
<div style="left:3272.4px;top:952.32px;width:824px;height:3.6px;background:#282c34;"></div>
<svg style="left:3308.8px;top:985.12px" width="25.6" height="29.6" viewBox="0 0 13 15"><path d="M0.500 0.500v14L12.500 7.500z" fill="#fff"/></svg>
<svg style="left:3365.6px;top:979.52px" width="40" height="40" viewBox="0 0 20 20"><circle cx="10" cy="10" r="7.800" fill="none" stroke="#707d90" stroke-width="3.200" stroke-dasharray="3.100 1.800"/></svg>
<div style="left:3272.4px;top:1039.44px;width:824px;height:3.6px;background:#282c34;"></div>
<svg style="left:3308.8px;top:1072.24px" width="25.6" height="29.6" viewBox="0 0 13 15"><path d="M0.500 0.500v14L12.500 7.500z" fill="#fff"/></svg>
<svg style="left:3365.6px;top:1066.64px" width="40" height="40" viewBox="0 0 20 20"><circle cx="10" cy="10" r="7.800" fill="none" stroke="#707d90" stroke-width="3.200" stroke-dasharray="3.100 1.800"/></svg>
<div style="left:3272.4px;top:1126.56px;width:824px;height:3.6px;background:#282c34;"></div>
<svg style="left:3308.8px;top:1159.36px" width="25.6" height="29.6" viewBox="0 0 13 15"><path d="M0.500 0.500v14L12.500 7.500z" fill="#fff"/></svg>
<svg style="left:3365.6px;top:1153.76px" width="40" height="40" viewBox="0 0 20 20"><circle cx="10" cy="10" r="7.800" fill="none" stroke="#707d90" stroke-width="3.200" stroke-dasharray="3.100 1.800"/></svg>
<div style="left:3272.4px;top:1213.68px;width:824px;height:3.6px;background:#282c34;"></div>
<svg style="left:3308.8px;top:1246.48px" width="25.6" height="29.6" viewBox="0 0 13 15"><path d="M0.500 0.500v14L12.500 7.500z" fill="#fff"/></svg>
<svg style="left:3365.6px;top:1240.88px" width="40" height="40" viewBox="0 0 20 20"><circle cx="10" cy="10" r="7.800" fill="none" stroke="#707d90" stroke-width="3.200" stroke-dasharray="3.100 1.800"/></svg>
<div style="left:3272.4px;top:1300.8px;width:824px;height:3.6px;background:#282c34;"></div>
<svg style="left:3308.8px;top:1333.6px" width="25.6" height="29.6" viewBox="0 0 13 15"><path d="M0.500 0.500v14L12.500 7.500z" fill="#fff"/></svg>
<svg style="left:3365.6px;top:1328px" width="40" height="40" viewBox="0 0 20 20"><circle cx="10" cy="10" r="7.800" fill="none" stroke="#707d90" stroke-width="3.200" stroke-dasharray="3.100 1.800"/></svg>
<div style="left:3272.4px;top:1387.92px;width:824px;height:3.6px;background:#282c34;"></div>
<svg style="left:3308.8px;top:1420.72px" width="25.6" height="29.6" viewBox="0 0 13 15"><path d="M0.500 0.500v14L12.500 7.500z" fill="#fff"/></svg>
<svg style="left:3365.6px;top:1415.12px" width="40" height="40" viewBox="0 0 20 20"><circle cx="10" cy="10" r="7.800" fill="none" stroke="#707d90" stroke-width="3.200" stroke-dasharray="3.100 1.800"/></svg>
<div style="left:3272.4px;top:1475.04px;width:824px;height:3.6px;background:#282c34;"></div>
<svg style="left:3308.8px;top:1507.84px" width="25.6" height="29.6" viewBox="0 0 13 15"><path d="M0.500 0.500v14L12.500 7.500z" fill="#fff"/></svg>
<svg style="left:3365.6px;top:1502.24px" width="40" height="40" viewBox="0 0 20 20"><circle cx="10" cy="10" r="7.800" fill="none" stroke="#707d90" stroke-width="3.200" stroke-dasharray="3.100 1.800"/></svg>
<div style="left:3272.4px;top:1562.16px;width:824px;height:3.6px;background:#282c34;"></div>
<svg style="left:3308.8px;top:1594.96px" width="25.6" height="29.6" viewBox="0 0 13 15"><path d="M0.500 0.500v14L12.500 7.500z" fill="#fff"/></svg>
<svg style="left:3365.6px;top:1589.36px" width="40" height="40" viewBox="0 0 20 20"><circle cx="10" cy="10" r="7.800" fill="none" stroke="#707d90" stroke-width="3.200" stroke-dasharray="3.100 1.800"/></svg>
<div style="left:3272.4px;top:1649.28px;width:824px;height:3.6px;background:#282c34;"></div>
<svg style="left:3308.8px;top:1682.08px" width="25.6" height="29.6" viewBox="0 0 13 15"><path d="M0.500 0.500v14L12.500 7.500z" fill="#fff"/></svg>
<svg style="left:3365.6px;top:1676.48px" width="40" height="40" viewBox="0 0 20 20"><circle cx="10" cy="10" r="7.800" fill="none" stroke="#707d90" stroke-width="3.200" stroke-dasharray="3.100 1.800"/></svg>
<div style="left:3272.4px;top:1736.4px;width:824px;height:3.6px;background:#282c34;"></div>
<svg style="left:3308.8px;top:1769.2px" width="25.6" height="29.6" viewBox="0 0 13 15"><path d="M0.500 0.500v14L12.500 7.500z" fill="#fff"/></svg>
<svg style="left:3365.6px;top:1763.6px" width="40" height="40" viewBox="0 0 20 20"><circle cx="10" cy="10" r="7.800" fill="none" stroke="#707d90" stroke-width="3.200" stroke-dasharray="3.100 1.800"/></svg>
<div style="left:3272.4px;top:1823.52px;width:824px;height:3.6px;background:#282c34;"></div>
<svg style="left:3308.8px;top:1856.32px" width="25.6" height="29.6" viewBox="0 0 13 15"><path d="M0.500 0.500v14L12.500 7.500z" fill="#fff"/></svg>
<svg style="left:3365.6px;top:1850.72px" width="40" height="40" viewBox="0 0 20 20"><circle cx="10" cy="10" r="7.800" fill="none" stroke="#707d90" stroke-width="3.200" stroke-dasharray="3.100 1.800"/></svg>
<div style="left:3272.4px;top:1910.64px;width:824px;height:3.6px;background:#282c34;"></div>
<svg style="left:3308.8px;top:1943.44px" width="25.6" height="29.6" viewBox="0 0 13 15"><path d="M0.500 0.500v14L12.500 7.500z" fill="#fff"/></svg>
<svg style="left:3365.6px;top:1937.84px" width="40" height="40" viewBox="0 0 20 20"><circle cx="10" cy="10" r="7.800" fill="none" stroke="#707d90" stroke-width="3.200" stroke-dasharray="3.100 1.800"/></svg>
<div style="left:3272.4px;top:1997.76px;width:824px;height:3.6px;background:#282c34;"></div>
<svg style="left:3308.8px;top:2030.56px" width="25.6" height="29.6" viewBox="0 0 13 15"><path d="M0.500 0.500v14L12.500 7.500z" fill="#fff"/></svg>
<svg style="left:3365.6px;top:2024.96px" width="40" height="40" viewBox="0 0 20 20"><circle cx="10" cy="10" r="7.800" fill="none" stroke="#707d90" stroke-width="3.200" stroke-dasharray="3.100 1.800"/></svg>
<div style="left:3272.4px;top:2084.88px;width:824px;height:3.6px;background:#282c34;"></div>
<svg style="left:3308.8px;top:2117.68px" width="25.6" height="29.6" viewBox="0 0 13 15"><path d="M0.500 0.500v14L12.500 7.500z" fill="#fff"/></svg>
<svg style="left:3365.6px;top:2112.08px" width="40" height="40" viewBox="0 0 20 20"><circle cx="10" cy="10" r="7.800" fill="none" stroke="#707d90" stroke-width="3.200" stroke-dasharray="3.100 1.800"/></svg>
<div style="left:3272.4px;top:2172px;width:824px;height:3.6px;background:#282c34;"></div>
<svg style="left:3308.8px;top:2204.8px" width="25.6" height="29.6" viewBox="0 0 13 15"><path d="M0.500 0.500v14L12.500 7.500z" fill="#fff"/></svg>
<svg style="left:3365.6px;top:2199.2px" width="40" height="40" viewBox="0 0 20 20"><circle cx="10" cy="10" r="7.800" fill="none" stroke="#707d90" stroke-width="3.200" stroke-dasharray="3.100 1.800"/></svg>
<div style="left:3447.2px;top:2178.4px;width:169.6px;height:6.4px;background:#2cb797;"></div>
</div></div>
<div id="txt">
<div id="ttl">
<div class="t" style="left:-6.33px;top:-2.80px;font-size:6.05px;font-weight:bold;color:#fff;letter-spacing:-0.25px;">楽器</div>
<div class="t" style="left:52.50px;top:-2.80px;font-size:6.05px;font-weight:bold;color:#fff;letter-spacing:-0.25px;">楽器</div>
<div class="t" style="left:111.33px;top:-2.80px;font-size:6.05px;font-weight:bold;color:#fff;letter-spacing:-0.25px;">楽器</div>
<div class="t" style="left:170.16px;top:-2.80px;font-size:6.05px;font-weight:bold;color:#fff;letter-spacing:-0.25px;">楽器</div>
<div class="t" style="left:228.99px;top:-2.80px;font-size:6.05px;font-weight:bold;color:#fff;letter-spacing:-0.25px;">楽器</div>
<div class="t" style="left:287.82px;top:-2.80px;font-size:6.05px;font-weight:bold;color:#fff;letter-spacing:-0.25px;">楽器</div>
<div class="t" style="left:346.65px;top:-2.80px;font-size:6.05px;font-weight:bold;color:#fff;letter-spacing:-0.25px;">楽器</div>
<div class="t" style="left:405.48px;top:-2.80px;font-size:6.05px;font-weight:bold;color:#fff;letter-spacing:-0.25px;">楽器</div>
<div class="t" style="left:464.31px;top:-2.80px;font-size:6.05px;font-weight:bold;color:#fff;letter-spacing:-0.25px;">楽器</div>
<div class="t" style="left:523.14px;top:-2.80px;font-size:6.05px;font-weight:bold;color:#fff;letter-spacing:-0.25px;">楽器</div>
<div class="t" style="left:581.97px;top:-2.80px;font-size:6.05px;font-weight:bold;color:#fff;letter-spacing:-0.25px;">楽器</div>
<div class="t" style="left:640.80px;top:-2.80px;font-size:6.05px;font-weight:bold;color:#fff;letter-spacing:-0.25px;">楽器</div>
<div class="t" style="left:20.79px;top:54.47px;font-size:9.6px;color:#77aad0;-webkit-text-stroke:0.25px #77aad0;">A</div>
<div class="t" style="left:79.62px;top:54.47px;font-size:9.6px;color:#77aad0;-webkit-text-stroke:0.25px #77aad0;">A</div>
<div class="t" style="left:138.45px;top:54.47px;font-size:9.6px;color:#77aad0;-webkit-text-stroke:0.25px #77aad0;">A</div>
<div class="t" style="left:182.82px;top:54.47px;font-size:9.6px;color:#4e8cbe;-webkit-text-stroke:0.25px #4e8cbe;">A</div>
<div class="t" style="left:241.65px;top:54.47px;font-size:9.6px;color:#77aad0;-webkit-text-stroke:0.25px #77aad0;">A</div>
<div class="t" style="left:300.48px;top:54.47px;font-size:9.6px;color:#77aad0;-webkit-text-stroke:0.25px #77aad0;">A</div>
<div class="t" style="left:359.31px;top:54.47px;font-size:9.6px;color:#77aad0;-webkit-text-stroke:0.25px #77aad0;">A</div>
<div class="t" style="left:154.80px;top:40.77px;font-size:6.1px;font-weight:bold;color:#fff;letter-spacing:-0.25px;">ドラムマシン</div>
<div class="t" style="left:418.21px;top:54.47px;font-size:9.6px;color:#4e8cbe;-webkit-text-stroke:0.25px #4e8cbe;">A</div>
<div class="t" style="left:477.05px;top:54.47px;font-size:9.6px;color:#77aad0;-webkit-text-stroke:0.25px #77aad0;">A</div>
<div class="t" style="left:535.88px;top:54.47px;font-size:9.6px;color:#77aad0;-webkit-text-stroke:0.25px #77aad0;">A</div>
<div class="t" style="left:594.70px;top:54.47px;font-size:9.6px;color:#77aad0;-webkit-text-stroke:0.25px #77aad0;">A</div>
<div class="t" style="left:390.20px;top:40.77px;font-size:6.1px;font-weight:bold;color:#fff;letter-spacing:-0.25px;">ドラムマシン</div>
<div class="t" style="left:653.71px;top:54.47px;font-size:9.6px;color:#4e8cbe;-webkit-text-stroke:0.25px #4e8cbe;">A</div>
<div class="t" style="left:712.55px;top:54.47px;font-size:9.6px;color:#77aad0;-webkit-text-stroke:0.25px #77aad0;">A</div>
<div class="t" style="left:771.38px;top:54.47px;font-size:9.6px;color:#77aad0;-webkit-text-stroke:0.25px #77aad0;">A</div>
<div class="t" style="left:830.20px;top:54.47px;font-size:9.6px;color:#77aad0;-webkit-text-stroke:0.25px #77aad0;">A</div>
<div class="t" style="left:625.70px;top:40.77px;font-size:6.1px;font-weight:bold;color:#fff;letter-spacing:-0.25px;">ドラムマシン</div>
<div class="t" style="left:66.45px;top:84.34px;font-size:6.2px;font-weight:bold;color:#fff;letter-spacing:-0.25px;">ボイス/マイク</div>
<div class="t" style="left:207.40px;top:84.34px;font-size:6.2px;font-weight:bold;color:#fff;letter-spacing:-0.25px;">ボイス/マイク</div>
<div class="t" style="left:346.20px;top:84.34px;font-size:6.2px;font-weight:bold;color:#fff;letter-spacing:-0.25px;">ボイス/マイク</div>
<div class="t" style="left:488.00px;top:84.34px;font-size:6.2px;font-weight:bold;color:#fff;letter-spacing:-0.25px;">ボイス/マイク</div>
<div class="t" style="left:192.20px;top:127.66px;font-size:6.1px;font-weight:bold;color:#fff;letter-spacing:-0.25px;">ギター</div>
<div class="t" style="left:450.30px;top:127.66px;font-size:6.1px;font-weight:bold;color:#fff;letter-spacing:-0.25px;">ギター</div>
<div class="t" style="left:192.50px;top:171.48px;font-size:6.1px;font-weight:bold;color:#fff;letter-spacing:-0.25px;">ベース</div>
<div class="t" style="left:450.00px;top:171.18px;font-size:6.2px;font-weight:bold;color:#fff;letter-spacing:-0.25px;">ベース</div>
<div class="t" style="left:169.70px;top:215.25px;font-size:5.4px;font-weight:bold;color:#fff;letter-spacing:-0.12px;">2-Step Keys 14</div>
<div class="t" style="left:405.20px;top:215.25px;font-size:5.4px;font-weight:bold;color:#fff;letter-spacing:-0.12px;">2-Step Keys 14</div>
<div class="t" style="left:299.3px;width:300px;text-align:center;top:280.20000000000005px;font-size:8.750px;color:#e4e4e4;font-weight:500;">ループまたはオーディオ/MIDIファイルをドロップ</div>
</div>
<div class="t" style="left:15.40px;top:0.80px;font-size:7.6px;color:#e9e9e9;font-weight:500;">出口</div>
<div class="t" style="left:48.60px;top:0.80px;font-size:7.6px;color:#e9e9e9;font-weight:500;">ファイル</div>
<div class="t" style="left:87.40px;top:0.80px;font-size:7.6px;color:#e9e9e9;font-weight:500;">編集</div>
<div class="t" style="left:111.80px;top:0.80px;font-size:7.6px;color:#e9e9e9;font-weight:500;">ビュー</div>
<div class="t" style="left:143.00px;top:0.80px;font-size:7.6px;color:#e9e9e9;font-weight:500;">セッティング</div>
<div class="t" style="left:197.30px;top:0.80px;font-size:7.6px;color:#e9e9e9;font-weight:500;">ヘルプ</div>
<div class="t" style="left:484.60px;width:200px;text-align:center;top:-2.40px;font-size:8.9px;color:#d4d4d4;font-weight:500;">ニュープロジェクト</div>
<div class="t" style="left:483.50px;width:200px;text-align:center;top:8.70px;font-size:6.45px;color:#e2e2e2;font-weight:bold;">最終保存日時: たった今</div>
<div class="t" style="left:954.40px;width:40px;text-align:center;top:0.50px;font-size:7.3px;font-weight:bold;">保存</div>
<div class="t" style="left:1006.80px;top:0.50px;font-size:7.5px;font-weight:bold;">公開</div>
<div class="t" style="left:981.60px;top:25.30px;font-size:7.4px;font-weight:bold;letter-spacing:-0.2px;">Start Session</div>
<div class="t" style="left:230.80px;width:120px;text-align:center;top:25.00px;font-size:12.6px;transform:scaleX(0.81);color:#f2f2f2;-webkit-text-stroke:0.3px #f2f2f2;">00:24.0</div>
<div class="t" style="left:291.00px;width:120px;text-align:center;top:24.80px;font-size:10.2px;transform:scaleX(0.84);color:#f2f2f2;-webkit-text-stroke:0.25px #f2f2f2;">C min</div>
<div class="t" style="left:330.80px;width:120px;text-align:center;top:24.80px;font-size:10.2px;transform:scaleX(0.84);color:#f2f2f2;-webkit-text-stroke:0.25px #f2f2f2;">132 <span style="font-size:7px">bpm</span></div>
<div class="t" style="left:366.10px;width:120px;text-align:center;top:24.80px;font-size:10.2px;transform:scaleX(0.78);color:#f2f2f2;-webkit-text-stroke:0.4px #f2f2f2;">4 / 4</div>
<div class="t" style="left:17.60px;top:50.90px;font-size:7.6px;font-weight:bold;color:#f4f4f4;letter-spacing:-0.1px;">トラックを追加</div>
<div class="t" style="left:203.00px;top:45.70px;font-size:7.1px;color:#d0d2d6;-webkit-text-stroke:0.2px #d0d2d6;">3</div>
<div class="t" style="left:261.83px;top:45.70px;font-size:7.1px;color:#d0d2d6;-webkit-text-stroke:0.2px #d0d2d6;">4</div>
<div class="t" style="left:320.66px;top:45.70px;font-size:7.1px;color:#d0d2d6;-webkit-text-stroke:0.2px #d0d2d6;">5</div>
<div class="t" style="left:379.49px;top:45.70px;font-size:7.1px;color:#d0d2d6;-webkit-text-stroke:0.2px #d0d2d6;">6</div>
<div class="t" style="left:438.32px;top:45.70px;font-size:7.1px;color:#d0d2d6;-webkit-text-stroke:0.2px #d0d2d6;">7</div>
<div class="t" style="left:497.15px;top:45.70px;font-size:7.1px;color:#d0d2d6;-webkit-text-stroke:0.2px #d0d2d6;">8</div>
<div class="t" style="left:555.98px;top:45.70px;font-size:7.1px;color:#d0d2d6;-webkit-text-stroke:0.2px #d0d2d6;">9</div>
<div class="t" style="left:614.81px;top:45.70px;font-size:7.1px;color:#d0d2d6;-webkit-text-stroke:0.2px #d0d2d6;">10</div>
<div class="t" style="left:673.64px;top:45.70px;font-size:7.1px;color:#d0d2d6;-webkit-text-stroke:0.2px #d0d2d6;">11</div>
<div class="t" style="left:732.47px;top:45.70px;font-size:7.1px;color:#d0d2d6;-webkit-text-stroke:0.2px #d0d2d6;">12</div>
<div class="t" style="left:791.30px;top:45.70px;font-size:7.1px;color:#d0d2d6;-webkit-text-stroke:0.2px #d0d2d6;">13</div>
<div class="t" style="left:0.70px;width:20px;text-align:center;top:72.80px;font-size:8.3px;font-weight:bold;color:#f2f2f2;">M</div>
<div class="t" style="left:0.70px;width:20px;text-align:center;top:94.10px;font-size:8.3px;font-weight:bold;color:#f2f2f2;">S</div>
<div class="t" style="left:44.60px;top:70.80px;font-size:7.7px;font-weight:bold;color:#f4f4f4;letter-spacing:-0.1px;">楽器</div>
<div class="t" style="left:124.20px;top:98.90px;font-size:4.8px;font-weight:bold;color:#b4b7bd;">L</div>
<div class="t" style="left:141.10px;top:98.90px;font-size:4.8px;font-weight:bold;color:#b4b7bd;">R</div>
<div class="t" style="left:0.70px;width:20px;text-align:center;top:116.37px;font-size:8.3px;font-weight:bold;color:#f2f2f2;">M</div>
<div class="t" style="left:0.70px;width:20px;text-align:center;top:137.67px;font-size:8.3px;font-weight:bold;color:#f2f2f2;">S</div>
<div class="t" style="left:44.60px;top:114.37px;font-size:7.7px;font-weight:bold;color:#f4f4f4;letter-spacing:-0.1px;">ドラムマシン</div>
<div class="t" style="left:124.20px;top:142.47px;font-size:4.8px;font-weight:bold;color:#b4b7bd;">L</div>
<div class="t" style="left:141.10px;top:142.47px;font-size:4.8px;font-weight:bold;color:#b4b7bd;">R</div>
<div class="t" style="left:0.70px;width:20px;text-align:center;top:159.94px;font-size:8.3px;font-weight:bold;color:#f2f2f2;">M</div>
<div class="t" style="left:0.70px;width:20px;text-align:center;top:181.24px;font-size:8.3px;font-weight:bold;color:#f2f2f2;">S</div>
<div class="t" style="left:44.60px;top:157.94px;font-size:7.7px;font-weight:bold;color:#f4f4f4;letter-spacing:-0.1px;">ボイス/マイク</div>
<div class="t" style="left:124.20px;top:186.04px;font-size:4.8px;font-weight:bold;color:#b4b7bd;">L</div>
<div class="t" style="left:141.10px;top:186.04px;font-size:4.8px;font-weight:bold;color:#b4b7bd;">R</div>
<div class="t" style="left:0.70px;width:20px;text-align:center;top:203.51px;font-size:8.3px;font-weight:bold;color:#f2f2f2;">M</div>
<div class="t" style="left:0.70px;width:20px;text-align:center;top:224.81px;font-size:8.3px;font-weight:bold;color:#f2f2f2;">S</div>
<div class="t" style="left:44.60px;top:201.51px;font-size:7.7px;font-weight:bold;color:#f4f4f4;letter-spacing:-0.1px;">ギター</div>
<div class="t" style="left:124.20px;top:229.61px;font-size:4.8px;font-weight:bold;color:#b4b7bd;">L</div>
<div class="t" style="left:141.10px;top:229.61px;font-size:4.8px;font-weight:bold;color:#b4b7bd;">R</div>
<div class="t" style="left:0.70px;width:20px;text-align:center;top:247.08px;font-size:8.3px;font-weight:bold;color:#f2f2f2;">M</div>
<div class="t" style="left:0.70px;width:20px;text-align:center;top:268.38px;font-size:8.3px;font-weight:bold;color:#f2f2f2;">S</div>
<div class="t" style="left:44.60px;top:245.08px;font-size:7.7px;font-weight:bold;color:#f4f4f4;letter-spacing:-0.1px;">ベース</div>
<div class="t" style="left:124.20px;top:273.18px;font-size:4.8px;font-weight:bold;color:#b4b7bd;">L</div>
<div class="t" style="left:141.10px;top:273.18px;font-size:4.8px;font-weight:bold;color:#b4b7bd;">R</div>
<div class="t" style="left:0.70px;width:20px;text-align:center;top:290.65px;font-size:8.3px;font-weight:bold;color:#f2f2f2;">M</div>
<div class="t" style="left:0.70px;width:20px;text-align:center;top:311.95px;font-size:8.3px;font-weight:bold;color:#f2f2f2;">S</div>
<div class="t" style="left:44.60px;top:288.45px;font-size:6.6px;font-weight:bold;color:#f4f4f4;">2-Step Keys 14</div>
<div class="t" style="left:124.20px;top:316.75px;font-size:4.8px;font-weight:bold;color:#b4b7bd;">L</div>
<div class="t" style="left:141.10px;top:316.75px;font-size:4.8px;font-weight:bold;color:#b4b7bd;">R</div>
<div class="t" style="left:44.80px;top:210.71px;font-size:6.2px;color:#f0f0f0;font-weight:500;"><i style="font-size:4.800px;font-weight:bold">Fx:</i> カスタム</div>
<div class="t" style="left:32.40px;top:392.80px;font-size:7.6px;color:#ececec;font-weight:500;">ギター</div>
<div class="t" style="left:5.00px;top:414.60px;font-size:7.4px;font-weight:bold;color:#f2f2f2;">入力</div>
<div class="t" style="left:11.20px;top:431.90px;font-size:7.0px;font-weight:bold;color:#f0f0f0;letter-spacing:-0.24px;">1-2 (QUAD-CAPTURE) (0582:012f)</div>
<div class="t" style="left:137.60px;top:431.20px;font-size:4.7px;color:#fff;">▼</div>
<div class="t" style="left:11.20px;top:452.20px;font-size:7.6px;font-weight:bold;color:#f0f0f0;letter-spacing:-0.1px;">チャンネル 1</div>
<div class="t" style="left:137.60px;top:451.80px;font-size:4.7px;color:#fff;">▼</div>
<div class="t" style="left:20.40px;top:472.80px;font-size:7.75px;font-weight:bold;color:#f4f4f4;letter-spacing:-0.1px;">リアルタイム入力監視</div>
<div class="t" style="left:448.40px;top:410.70px;font-size:7.6px;color:#e9e9e9;font-weight:500;">ギター</div>
<div class="t" style="left:543.30px;top:514.80px;font-size:7.5px;font-weight:bold;color:#f4f4f4;">チューナー</div>
<div class="t" style="left:836.60px;top:52.20px;font-size:7.2px;color:#d4d6da;font-weight:500;">閲覧</div>
<div class="t" style="left:877.40px;top:52.20px;font-size:7.0px;color:#c4c7cc;">Packs</div>
<div class="t" style="left:920.80px;top:52.10px;font-size:7.9px;color:#fff;font-weight:bold;letter-spacing:-0.3px;">ループ</div>
<div class="t" style="left:838.30px;top:72.60px;font-size:7.4px;color:#64707f;">検索中</div>
<div class="t" style="left:825.00px;top:89.90px;font-size:7.4px;font-weight:bold;color:#f2f2f2;">楽器</div>
<div class="t" style="left:934.40px;top:89.90px;font-size:7.4px;font-weight:500;color:#e6e6e6;">ジャンル</div>
<div class="t" style="left:858.40px;top:109.70px;font-size:6.85px;font-weight:bold;color:#f6f6f6;letter-spacing:-0.22px;">2-Step Keys 03</div>
<div class="t" style="left:902.40px;width:80px;text-align:right;top:109.70px;font-size:6.200px;color:#7f8691;">Keyboard</div>
<div class="t" style="left:968.60px;width:30px;text-align:right;top:109.70px;font-size:6.200px;color:#7f8691;">132</div>
<div class="t" style="left:988.60px;width:30px;text-align:right;top:109.70px;font-size:6.200px;color:#7f8691;">C min</div>
<div class="t" style="left:858.40px;top:131.48px;font-size:6.85px;font-weight:bold;color:#f6f6f6;letter-spacing:-0.22px;">2-Step Keys 04</div>
<div class="t" style="left:902.40px;width:80px;text-align:right;top:131.48px;font-size:6.200px;color:#7f8691;">Keyboard</div>
<div class="t" style="left:968.60px;width:30px;text-align:right;top:131.48px;font-size:6.200px;color:#7f8691;">132</div>
<div class="t" style="left:988.60px;width:30px;text-align:right;top:131.48px;font-size:6.200px;color:#7f8691;">C min</div>
<div class="t" style="left:858.40px;top:153.26px;font-size:6.85px;font-weight:bold;color:#f6f6f6;letter-spacing:-0.22px;">2-Step Keys 05</div>
<div class="t" style="left:902.40px;width:80px;text-align:right;top:153.26px;font-size:6.200px;color:#7f8691;">Keyboard</div>
<div class="t" style="left:968.60px;width:30px;text-align:right;top:153.26px;font-size:6.200px;color:#7f8691;">132</div>
<div class="t" style="left:988.60px;width:30px;text-align:right;top:153.26px;font-size:6.200px;color:#7f8691;">C min</div>
<div class="t" style="left:858.40px;top:175.04px;font-size:6.85px;font-weight:bold;color:#f6f6f6;letter-spacing:-0.22px;">2-Step Keys 06</div>
<div class="t" style="left:902.40px;width:80px;text-align:right;top:175.04px;font-size:6.200px;color:#7f8691;">Keyboard</div>
<div class="t" style="left:968.60px;width:30px;text-align:right;top:175.04px;font-size:6.200px;color:#7f8691;">132</div>
<div class="t" style="left:988.60px;width:30px;text-align:right;top:175.04px;font-size:6.200px;color:#7f8691;">C min</div>
<div class="t" style="left:858.40px;top:196.82px;font-size:6.85px;font-weight:bold;color:#f6f6f6;letter-spacing:-0.22px;">2-Step Keys 07</div>
<div class="t" style="left:902.40px;width:80px;text-align:right;top:196.82px;font-size:6.200px;color:#7f8691;">Keyboard</div>
<div class="t" style="left:968.60px;width:30px;text-align:right;top:196.82px;font-size:6.200px;color:#7f8691;">132</div>
<div class="t" style="left:988.60px;width:30px;text-align:right;top:196.82px;font-size:6.200px;color:#7f8691;">C min</div>
<div class="t" style="left:858.40px;top:218.60px;font-size:6.85px;font-weight:bold;color:#f6f6f6;letter-spacing:-0.22px;">2-Step Keys 08</div>
<div class="t" style="left:902.40px;width:80px;text-align:right;top:218.60px;font-size:6.200px;color:#7f8691;">Keyboard</div>
<div class="t" style="left:968.60px;width:30px;text-align:right;top:218.60px;font-size:6.200px;color:#7f8691;">132</div>
<div class="t" style="left:988.60px;width:30px;text-align:right;top:218.60px;font-size:6.200px;color:#7f8691;">C min</div>
<div class="t" style="left:858.40px;top:240.38px;font-size:6.85px;font-weight:bold;color:#f6f6f6;letter-spacing:-0.22px;">2-Step Keys 09</div>
<div class="t" style="left:902.40px;width:80px;text-align:right;top:240.38px;font-size:6.200px;color:#7f8691;">Keyboard</div>
<div class="t" style="left:968.60px;width:30px;text-align:right;top:240.38px;font-size:6.200px;color:#7f8691;">132</div>
<div class="t" style="left:988.60px;width:30px;text-align:right;top:240.38px;font-size:6.200px;color:#7f8691;">C min</div>
<div class="t" style="left:858.40px;top:262.16px;font-size:6.85px;font-weight:bold;color:#f6f6f6;letter-spacing:-0.22px;">2-Step Keys 10</div>
<div class="t" style="left:902.40px;width:80px;text-align:right;top:262.16px;font-size:6.200px;color:#7f8691;">Keyboard</div>
<div class="t" style="left:968.60px;width:30px;text-align:right;top:262.16px;font-size:6.200px;color:#7f8691;">132</div>
<div class="t" style="left:988.60px;width:30px;text-align:right;top:262.16px;font-size:6.200px;color:#7f8691;">C min</div>
<div class="t" style="left:858.40px;top:283.94px;font-size:6.85px;font-weight:bold;color:#f6f6f6;letter-spacing:-0.22px;">2-Step Keys 11</div>
<div class="t" style="left:902.40px;width:80px;text-align:right;top:283.94px;font-size:6.200px;color:#7f8691;">Keyboard</div>
<div class="t" style="left:968.60px;width:30px;text-align:right;top:283.94px;font-size:6.200px;color:#7f8691;">132</div>
<div class="t" style="left:988.60px;width:30px;text-align:right;top:283.94px;font-size:6.200px;color:#7f8691;">C min</div>
<div class="t" style="left:858.40px;top:305.72px;font-size:6.85px;font-weight:bold;color:#f6f6f6;letter-spacing:-0.22px;">2-Step Keys 12</div>
<div class="t" style="left:902.40px;width:80px;text-align:right;top:305.72px;font-size:6.200px;color:#7f8691;">Keyboard</div>
<div class="t" style="left:968.60px;width:30px;text-align:right;top:305.72px;font-size:6.200px;color:#7f8691;">132</div>
<div class="t" style="left:988.60px;width:30px;text-align:right;top:305.72px;font-size:6.200px;color:#7f8691;">C min</div>
<div class="t" style="left:858.40px;top:327.50px;font-size:6.85px;font-weight:bold;color:#f6f6f6;letter-spacing:-0.22px;">2-Step Keys 13</div>
<div class="t" style="left:902.40px;width:80px;text-align:right;top:327.50px;font-size:6.200px;color:#7f8691;">Keyboard</div>
<div class="t" style="left:968.60px;width:30px;text-align:right;top:327.50px;font-size:6.200px;color:#7f8691;">132</div>
<div class="t" style="left:988.60px;width:30px;text-align:right;top:327.50px;font-size:6.200px;color:#7f8691;">C min</div>
<div class="t" style="left:858.40px;top:349.28px;font-size:6.85px;font-weight:bold;color:#f6f6f6;letter-spacing:-0.22px;">2-Step Keys 14</div>
<div class="t" style="left:902.40px;width:80px;text-align:right;top:349.28px;font-size:6.200px;color:#7f8691;">Keyboard</div>
<div class="t" style="left:968.60px;width:30px;text-align:right;top:349.28px;font-size:6.200px;color:#7f8691;">132</div>
<div class="t" style="left:988.60px;width:30px;text-align:right;top:349.28px;font-size:6.200px;color:#7f8691;">C min</div>
<div class="t" style="left:858.40px;top:371.06px;font-size:6.85px;font-weight:bold;color:#f6f6f6;letter-spacing:-0.22px;">2-Step Keys 15</div>
<div class="t" style="left:902.40px;width:80px;text-align:right;top:371.06px;font-size:6.200px;color:#7f8691;">Keyboard</div>
<div class="t" style="left:968.60px;width:30px;text-align:right;top:371.06px;font-size:6.200px;color:#7f8691;">132</div>
<div class="t" style="left:988.60px;width:30px;text-align:right;top:371.06px;font-size:6.200px;color:#7f8691;">C min</div>
<div class="t" style="left:858.40px;top:392.84px;font-size:6.85px;font-weight:bold;color:#f6f6f6;letter-spacing:-0.22px;">2-Step Keys 16</div>
<div class="t" style="left:902.40px;width:80px;text-align:right;top:392.84px;font-size:6.200px;color:#7f8691;">Keyboard</div>
<div class="t" style="left:968.60px;width:30px;text-align:right;top:392.84px;font-size:6.200px;color:#7f8691;">132</div>
<div class="t" style="left:988.60px;width:30px;text-align:right;top:392.84px;font-size:6.200px;color:#7f8691;">C min</div>
<div class="t" style="left:858.40px;top:414.62px;font-size:6.85px;font-weight:bold;color:#f6f6f6;letter-spacing:-0.22px;">2-Step Perc 01</div>
<div class="t" style="left:902.40px;width:80px;text-align:right;top:414.62px;font-size:6.200px;color:#7f8691;">Percussion</div>
<div class="t" style="left:968.60px;width:30px;text-align:right;top:414.62px;font-size:6.200px;color:#7f8691;">132</div>
<div class="t" style="left:858.40px;top:436.40px;font-size:6.85px;font-weight:bold;color:#f6f6f6;letter-spacing:-0.22px;">2-Step Perc 02</div>
<div class="t" style="left:902.40px;width:80px;text-align:right;top:436.40px;font-size:6.200px;color:#7f8691;">Percussion</div>
<div class="t" style="left:968.60px;width:30px;text-align:right;top:436.40px;font-size:6.200px;color:#7f8691;">132</div>
<div class="t" style="left:858.40px;top:458.18px;font-size:6.85px;font-weight:bold;color:#f6f6f6;letter-spacing:-0.22px;">2-Step Perc 03</div>
<div class="t" style="left:902.40px;width:80px;text-align:right;top:458.18px;font-size:6.200px;color:#7f8691;">Percussion</div>
<div class="t" style="left:968.60px;width:30px;text-align:right;top:458.18px;font-size:6.200px;color:#7f8691;">132</div>
<div class="t" style="left:858.40px;top:479.96px;font-size:6.85px;font-weight:bold;color:#f6f6f6;letter-spacing:-0.22px;">2-Step Perc 04</div>
<div class="t" style="left:902.40px;width:80px;text-align:right;top:479.96px;font-size:6.200px;color:#7f8691;">Percussion</div>
<div class="t" style="left:968.60px;width:30px;text-align:right;top:479.96px;font-size:6.200px;color:#7f8691;">132</div>
<div class="t" style="left:858.40px;top:501.74px;font-size:6.85px;font-weight:bold;color:#f6f6f6;letter-spacing:-0.22px;">2-Step Perc 05</div>
<div class="t" style="left:902.40px;width:80px;text-align:right;top:501.74px;font-size:6.200px;color:#7f8691;">Percussion</div>
<div class="t" style="left:968.60px;width:30px;text-align:right;top:501.74px;font-size:6.200px;color:#7f8691;">132</div>
<div class="t" style="left:858.40px;top:523.52px;font-size:6.85px;font-weight:bold;color:#f6f6f6;letter-spacing:-0.22px;">2-Step Perc 06</div>
<div class="t" style="left:902.40px;width:80px;text-align:right;top:523.52px;font-size:6.200px;color:#7f8691;">Percussion</div>
<div class="t" style="left:968.60px;width:30px;text-align:right;top:523.52px;font-size:6.200px;color:#7f8691;">132</div>
<div class="t" style="left:858.40px;top:545.30px;font-size:6.85px;font-weight:bold;color:#f6f6f6;letter-spacing:-0.22px;">2-Step Perc 07</div>
<div class="t" style="left:902.40px;width:80px;text-align:right;top:545.30px;font-size:6.200px;color:#7f8691;">Percussion</div>
<div class="t" style="left:968.60px;width:30px;text-align:right;top:545.30px;font-size:6.200px;color:#7f8691;">132</div>
</div></body></html>
